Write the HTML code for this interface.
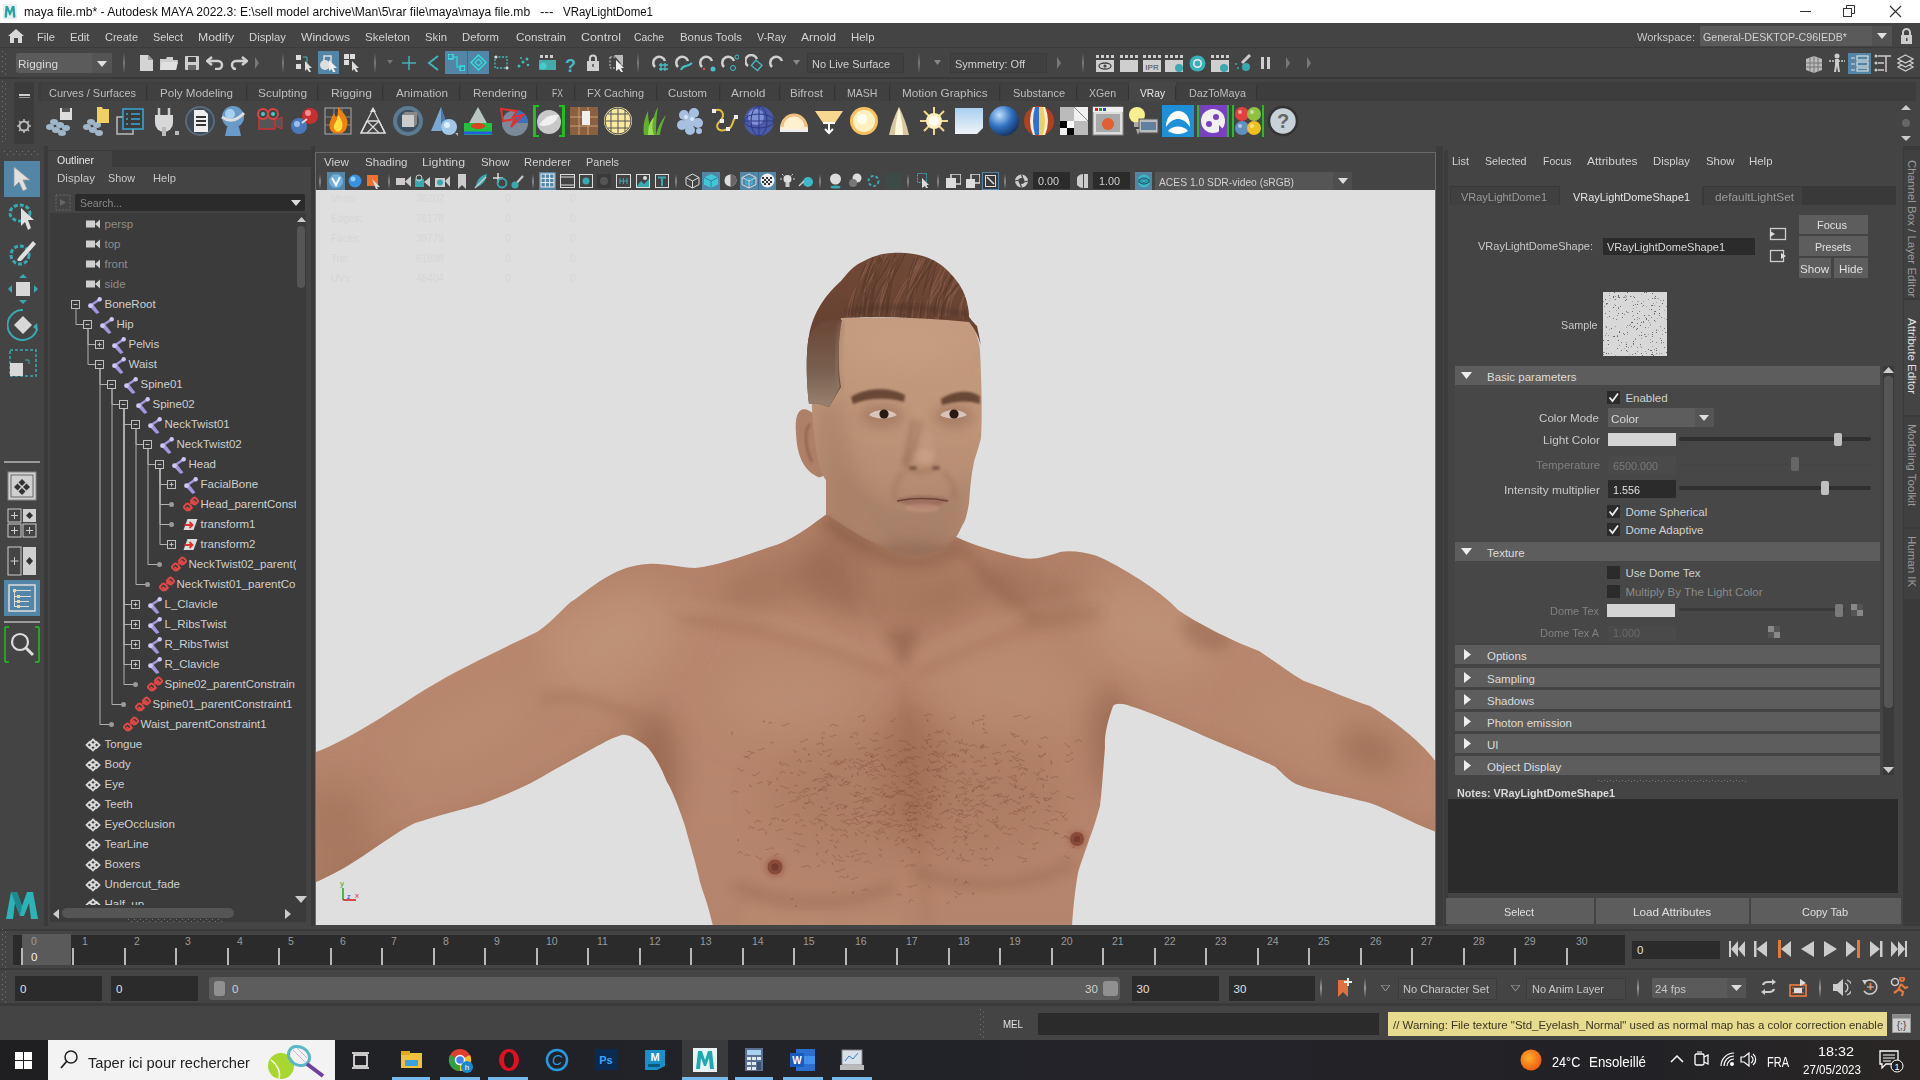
<!DOCTYPE html>
<html><head><meta charset="utf-8"><style>*{margin:0;padding:0;box-sizing:border-box}
html,body{width:1920px;height:1080px;overflow:hidden;background:#444;font-family:"Liberation Sans",sans-serif;font-size:12px;color:#ccc}
.a{position:absolute;display:block}
.t{position:absolute;white-space:nowrap;line-height:1}</style></head><body>
<div class="a" style="left:0px;top:0px;width:1920px;height:23px;background:#ffffff;"></div>
<svg class="a" style="left:3px;top:4px;" width="14" height="15" viewBox="0 0 14 15"><rect x="0" y="0" width="14" height="15" fill="#e6f2f2"/><path d="M1.5 13.5 L2.5 2 L5 2 L7 7.5 L9 2 L11.5 2 L12.5 13.5 L10 13.5 L9.5 6.5 L7.5 11.5 L6.5 11.5 L4.5 6.5 L4 13.5 Z" fill="#2aa0a8"/></svg>
<div class="t" style="left:23.5px;top:5.84px;font-size:12px;color:#111;transform:scaleX(1.0073);transform-origin:0 0;">maya file.mb* - Autodesk MAYA 2022.3: E:\sell model archive\Man\5\rar file\maya\maya file.mb</div>
<div class="t" style="left:539.5px;top:5.84px;font-size:12px;color:#111;transform:scaleX(1.1250);transform-origin:0 0;">---</div>
<div class="t" style="left:563px;top:5.84px;font-size:12px;color:#111;transform:scaleX(0.9570);transform-origin:0 0;">VRayLightDome1</div>
<div class="a" style="left:1800px;top:11px;width:11px;height:1px;background:#333;"></div>
<svg class="a" style="left:1843px;top:5px;" width="13" height="13" viewBox="0 0 13 13"><rect x="0.5" y="3.5" width="8" height="8" fill="none" stroke="#333"/><path d="M3.5 3.5 V0.5 H11.5 V8.5 H8.5" fill="none" stroke="#333"/></svg>
<svg class="a" style="left:1889px;top:5px;" width="13" height="13" viewBox="0 0 13 13"><path d="M1 1 L12 12 M12 1 L1 12" stroke="#333" stroke-width="1.2"/></svg>
<div class="a" style="left:0px;top:23px;width:1920px;height:25px;background:#444444;"></div>
<svg class="a" style="left:8px;top:29px;" width="16" height="14" viewBox="0 0 16 14"><path d="M8 0 L16 7 L14 7 L14 14 L10 14 L10 9 L6 9 L6 14 L2 14 L2 7 L0 7 Z" fill="#d8d8d8"/></svg>
<div class="t" style="left:37px;top:32.07px;font-size:11.5px;color:#d2d2d2;transform:scaleX(0.9705);transform-origin:0 0;">File</div>
<div class="t" style="left:70px;top:32.07px;font-size:11.5px;color:#d2d2d2;transform:scaleX(0.9842);transform-origin:0 0;">Edit</div>
<div class="t" style="left:105px;top:32.07px;font-size:11.5px;color:#d2d2d2;transform:scaleX(0.9565);transform-origin:0 0;">Create</div>
<div class="t" style="left:153px;top:32.07px;font-size:11.5px;color:#d2d2d2;transform:scaleX(0.9389);transform-origin:0 0;">Select</div>
<div class="t" style="left:198px;top:32.07px;font-size:11.5px;color:#d2d2d2;transform:scaleX(1.0632);transform-origin:0 0;">Modify</div>
<div class="t" style="left:249px;top:32.07px;font-size:11.5px;color:#d2d2d2;transform:scaleX(0.9809);transform-origin:0 0;">Display</div>
<div class="t" style="left:301px;top:32.07px;font-size:11.5px;color:#d2d2d2;transform:scaleX(1.0502);transform-origin:0 0;">Windows</div>
<div class="t" style="left:365px;top:32.07px;font-size:11.5px;color:#d2d2d2;transform:scaleX(1.0059);transform-origin:0 0;">Skeleton</div>
<div class="t" style="left:425px;top:32.07px;font-size:11.5px;color:#d2d2d2;transform:scaleX(0.9832);transform-origin:0 0;">Skin</div>
<div class="t" style="left:462px;top:32.07px;font-size:11.5px;color:#d2d2d2;transform:scaleX(0.9818);transform-origin:0 0;">Deform</div>
<div class="t" style="left:515.5px;top:32.07px;font-size:11.5px;color:#d2d2d2;transform:scaleX(1.0162);transform-origin:0 0;">Constrain</div>
<div class="t" style="left:580.5px;top:32.07px;font-size:11.5px;color:#d2d2d2;transform:scaleX(1.0793);transform-origin:0 0;">Control</div>
<div class="t" style="left:634px;top:32.07px;font-size:11.5px;color:#d2d2d2;transform:scaleX(0.9027);transform-origin:0 0;">Cache</div>
<div class="t" style="left:680px;top:32.07px;font-size:11.5px;color:#d2d2d2;transform:scaleX(0.9932);transform-origin:0 0;">Bonus Tools</div>
<div class="t" style="left:757px;top:32.07px;font-size:11.5px;color:#d2d2d2;transform:scaleX(0.9261);transform-origin:0 0;">V-Ray</div>
<div class="t" style="left:801px;top:32.07px;font-size:11.5px;color:#d2d2d2;transform:scaleX(1.0531);transform-origin:0 0;">Arnold</div>
<div class="t" style="left:851px;top:32.07px;font-size:11.5px;color:#d2d2d2;transform:scaleX(0.9934);transform-origin:0 0;">Help</div>
<div class="t" style="left:1636.7px;top:32.07px;font-size:11.5px;color:#c8c8c8;transform:scaleX(0.9589);transform-origin:0 0;">Workspace:</div>
<div class="a" style="left:1700px;top:26px;width:192px;height:20px;background:#5a5a5a;border-radius:2px"></div>
<div class="a" style="left:1872px;top:26px;width:20px;height:20px;background:#525252;"></div>
<svg class="a" style="left:1877px;top:33px;" width="10" height="6" viewBox="0 0 10 6"><path d="M0 0 L10 0 L5 6 Z" fill="#e0e0e0"/></svg>
<div class="t" style="left:1703px;top:32.07px;font-size:11.5px;color:#d0d0d0;transform:scaleX(0.9247);transform-origin:0 0;">General-DESKTOP-C96IEDB*</div>
<svg class="a" style="left:1900px;top:28px;" width="13" height="16" viewBox="0 0 13 16"><path d="M3 7 V4.5 A3.5 3.5 0 0 1 10 4.5 V7" fill="none" stroke="#ccc" stroke-width="2"/><rect x="1" y="7" width="11" height="9" fill="#ccc"/><rect x="6" y="10" width="1.5" height="3" fill="#444"/></svg>
<div class="a" style="left:0px;top:47px;width:1920px;height:1px;background:#3a3a3a;"></div>
<div class="a" style="left:0px;top:48px;width:1920px;height:29px;background:#444444;"></div>
<div class="a" style="left:0px;top:77px;width:1920px;height:2px;background:#393939;"></div>
<svg class="a" style="left:0px;top:50px;" width="8" height="26" viewBox="0 0 8 26"><g fill="#777"><rect x="2" y="1.0" width="1" height="1"/><rect x="5" y="3.5" width="1" height="1"/><rect x="2" y="6.0" width="1" height="1"/><rect x="5" y="8.5" width="1" height="1"/><rect x="2" y="11.0" width="1" height="1"/><rect x="5" y="13.5" width="1" height="1"/><rect x="2" y="16.0" width="1" height="1"/><rect x="5" y="18.5" width="1" height="1"/><rect x="2" y="21.0" width="1" height="1"/><rect x="5" y="23.5" width="1" height="1"/></g></svg>
<div class="a" style="left:16px;top:53px;width:96px;height:20px;background:#5b5b5b;border-radius:2px"></div>
<div class="a" style="left:92px;top:53px;width:20px;height:20px;background:#545454;"></div>
<svg class="a" style="left:97px;top:61px;" width="10" height="6" viewBox="0 0 10 6"><path d="M0 0 L10 0 L5 6 Z" fill="#e0e0e0"/></svg>
<div class="t" style="left:18px;top:59.07px;font-size:11.5px;color:#d8d8d8;transform:scaleX(1.0256);transform-origin:0 0;">Rigging</div>
<svg class="a" style="left:122px;top:53px;" width="4" height="20" viewBox="0 0 4 20"><path d="M2 0 L3 10.0 L2 20 L1 10.0 Z" fill="#7a7a7a"/></svg>
<svg class="a" style="left:140px;top:55px;" width="13" height="16" viewBox="0 0 13 16"><path d="M0 0 H8 L13 5 V16 H0 Z" fill="#d4d4d4"/><path d="M8 0 V5 H13" fill="#999"/></svg>
<svg class="a" style="left:160px;top:57px;" width="18" height="13" viewBox="0 0 18 13"><path d="M0 2 H6 L7 0 H13 V3 H18 L16 13 H0 Z" fill="#cfcfcf"/><path d="M2 5 H18 L16 13 H0 Z" fill="#e0e0e0"/></svg>
<svg class="a" style="left:185px;top:56px;" width="14" height="14" viewBox="0 0 14 14"><rect x="0" y="0" width="14" height="14" rx="1" fill="#d0d0d0"/><rect x="3" y="1" width="8" height="5" fill="#444"/><rect x="3" y="9" width="8" height="5" fill="#666"/></svg>
<svg class="a" style="left:206px;top:56px;" width="18" height="14" viewBox="0 0 18 14"><path d="M6 1 L1 5 L6 9" fill="none" stroke="#d0d0d0" stroke-width="2.5"/><path d="M2 5 H12 A4 4 0 0 1 12 13 H9" fill="none" stroke="#d0d0d0" stroke-width="2.5"/></svg>
<svg class="a" style="left:230px;top:56px;" width="18" height="14" viewBox="0 0 18 14"><path d="M12 1 L17 5 L12 9" fill="none" stroke="#d0d0d0" stroke-width="2.5"/><path d="M16 5 H6 A4 4 0 0 0 6 13 H3" fill="none" stroke="#d0d0d0" stroke-width="2.5"/></svg>
<svg class="a" style="left:255px;top:53px;" width="5" height="20" viewBox="0 0 5 20"><path d="M0 4.0 L4 10.0 L0 16.0 Z" fill="#777"/></svg>
<svg class="a" style="left:280.5px;top:53px;" width="4" height="20" viewBox="0 0 4 20"><path d="M2 0 L3 10.0 L2 20 L1 10.0 Z" fill="#7a7a7a"/></svg>
<svg class="a" style="left:296px;top:54px;" width="17" height="19" viewBox="0 0 17 19"><rect x="0" y="1" width="5" height="5" fill="#ddd"/><rect x="0" y="10" width="5" height="5" fill="#ddd"/><path d="M7 3 H11 V10" stroke="#4bb" fill="none"/><path d="M9 7 L16 14 L13 14 L15 18 L13 18 L11 15 L9 17 Z" fill="#ddd"/></svg>
<div class="a" style="left:317.5px;top:51px;width:21.5px;height:23px;background:#5285a6;"></div>
<svg class="a" style="left:319px;top:54px;" width="19" height="18" viewBox="0 0 19 18"><circle cx="6" cy="11" r="5" fill="#ddd"/><rect x="5" y="2" width="7" height="7" fill="none" stroke="#ddd" stroke-width="1.5"/><path d="M10 6 L18 14 L14.5 14 L16.5 18 L14 18 L12.5 15 L10 17 Z" fill="#eee"/></svg>
<svg class="a" style="left:344px;top:54px;" width="17" height="19" viewBox="0 0 17 19"><rect x="0" y="0" width="5" height="5" fill="#ddd"/><rect x="6" y="0" width="5" height="5" fill="#ddd"/><rect x="0" y="6" width="5" height="5" fill="#ddd"/><path d="M8 7 L15 14 L12 14 L14 18 L12 18 L10 15 L8 17 Z" fill="#ddd"/></svg>
<svg class="a" style="left:373px;top:53px;" width="4" height="20" viewBox="0 0 4 20"><path d="M2 0 L3 10.0 L2 20 L1 10.0 Z" fill="#7a7a7a"/></svg>
<svg class="a" style="left:387px;top:60px;" width="6" height="4" viewBox="0 0 6 4"><path d="M0 0 H6 L3 4 Z" fill="#777"/></svg>
<svg class="a" style="left:402px;top:56px;" width="14" height="14" viewBox="0 0 14 14"><path d="M7 0 V14 M0 7 H14" stroke="#44b0b8" stroke-width="1.5"/></svg>
<svg class="a" style="left:426px;top:55px;" width="14" height="16" viewBox="0 0 14 16"><path d="M12 1 L3 8 L12 15" fill="none" stroke="#44b0b8" stroke-width="2"/></svg>
<div class="a" style="left:445px;top:51px;width:44px;height:23px;background:#5285a6;"></div>
<div class="a" style="left:467px;top:51px;width:1px;height:23px;background:#3e6d8c;"></div>
<svg class="a" style="left:448px;top:54px;" width="17" height="17" viewBox="0 0 17 17"><rect x="0" y="0" width="5" height="5" fill="none" stroke="#3ee" stroke-width="1.3"/><rect x="12" y="12" width="5" height="5" fill="none" stroke="#3ee" stroke-width="1.3"/><path d="M5 3 H9 L9 13 H12" fill="none" stroke="#3cc" stroke-width="1.5"/></svg>
<svg class="a" style="left:470px;top:54px;" width="17" height="17" viewBox="0 0 17 17"><path d="M8.5 1 L16 8.5 L8.5 16 L1 8.5 Z" fill="none" stroke="#3dd" stroke-width="1.5"/><path d="M8.5 5 L12 8.5 L8.5 12 L5 8.5 Z" fill="none" stroke="#3dd" stroke-width="1.2"/></svg>
<svg class="a" style="left:494px;top:54px;" width="15" height="17" viewBox="0 0 15 17"><rect x="1" y="3" width="12" height="11" fill="none" stroke="#4bb" stroke-width="1.3" stroke-dasharray="2 1.5"/><circle cx="2" cy="3" r="1.5" fill="#ddd"/><circle cx="13" cy="14" r="1.5" fill="#ddd"/></svg>
<svg class="a" style="left:516px;top:55px;" width="15" height="15" viewBox="0 0 15 15"><g fill="#4bb"><circle cx="3" cy="11" r="1.5"/><circle cx="7" cy="7" r="1.5"/><circle cx="11" cy="4" r="1.5"/><circle cx="12" cy="10" r="1.3"/><circle cx="5" cy="3" r="1"/></g></svg>
<svg class="a" style="left:539px;top:54px;" width="17" height="17" viewBox="0 0 17 17"><rect x="0" y="6" width="17" height="10" fill="#4aa"/><circle cx="4" cy="12" r="3.5" fill="#4cc"/><g fill="#ccc"><rect x="1" y="1" width="3" height="3"/><rect x="6" y="1" width="3" height="3"/><rect x="11" y="1" width="3" height="3"/></g></svg>
<div class="t" style="left:565px;top:56.56px;font-size:18px;color:#4ab8c0;font-weight:bold;">?</div>
<svg class="a" style="left:587px;top:54px;" width="12" height="17" viewBox="0 0 12 17"><path d="M3 7 V4.5 A3 3 0 0 1 9 4.5 V7" fill="none" stroke="#d0d0d0" stroke-width="2"/><rect x="0" y="7" width="12" height="10" fill="#d0d0d0"/><rect x="5.3" y="10" width="1.5" height="3" fill="#555"/></svg>
<svg class="a" style="left:609px;top:54px;" width="16" height="18" viewBox="0 0 16 18"><rect x="1" y="3" width="11" height="11" fill="none" stroke="#ccc" stroke-dasharray="2 1.5"/><path d="M5 1 H14 V12 Z" fill="#bbb"/><path d="M7 6 L15 14 L12 14 L14 18 L12 18 L10 15 L7 17 Z" fill="#eee"/></svg>
<svg class="a" style="left:635.5px;top:53px;" width="4" height="20" viewBox="0 0 4 20"><path d="M2 0 L3 10.0 L2 20 L1 10.0 Z" fill="#7a7a7a"/></svg>
<svg class="a" style="left:652px;top:54px;" width="18" height="18" viewBox="0 0 18 18"><path d="M3 13 A6 6 0 1 1 13 7" fill="none" stroke="#cfcfcf" stroke-width="2.5"/><path d="M9 9 V17 M13 9 V17 M7 11 H16 M7 15 H16" stroke="#44c0c8" stroke-width="1.3"/></svg>
<svg class="a" style="left:675px;top:54px;" width="18" height="18" viewBox="0 0 18 18"><path d="M3 13 A6 6 0 1 1 13 7" fill="none" stroke="#cfcfcf" stroke-width="2.5"/><path d="M6 16 C8 10 12 14 17 9" stroke="#44c0c8" stroke-width="2" fill="none"/></svg>
<svg class="a" style="left:699px;top:54px;" width="18" height="18" viewBox="0 0 18 18"><path d="M3 13 A6 6 0 1 1 13 7" fill="none" stroke="#cfcfcf" stroke-width="2.5"/><circle cx="14" cy="15" r="2.5" fill="#44c0c8"/><circle cx="5" cy="15" r="1.2" fill="#d55"/></svg>
<svg class="a" style="left:721px;top:54px;" width="18" height="18" viewBox="0 0 18 18"><path d="M3 13 A6 6 0 1 1 13 7" fill="none" stroke="#cfcfcf" stroke-width="2.5"/><circle cx="12" cy="14" r="2.5" fill="none" stroke="#44c0c8"/><circle cx="16" cy="3" r="2" fill="none" stroke="#44c0c8"/></svg>
<svg class="a" style="left:745px;top:54px;" width="18" height="18" viewBox="0 0 18 18"><path d="M3 12 A6 6 0 1 1 12 5" fill="none" stroke="#cfcfcf" stroke-width="2.5"/><rect x="8" y="8" width="8" height="7" transform="rotate(40 12 11)" fill="none" stroke="#44c0c8" stroke-width="1.3"/></svg>
<svg class="a" style="left:769px;top:54px;" width="18" height="18" viewBox="0 0 18 18"><path d="M3 13 A6 6 0 1 1 13 7" fill="none" stroke="#cfcfcf" stroke-width="2.5"/></svg>
<svg class="a" style="left:793px;top:60px;" width="7" height="5" viewBox="0 0 7 5"><path d="M0 0 H7 L3.5 5 Z" fill="#888"/></svg>
<div class="a" style="left:807px;top:53px;width:97px;height:20px;background:#404040;border:1px solid #3a3a3a"></div>
<div class="t" style="left:812px;top:59.07px;font-size:11.5px;color:#cfcfcf;transform:scaleX(0.9538);transform-origin:0 0;">No Live Surface</div>
<svg class="a" style="left:917px;top:53px;" width="4" height="20" viewBox="0 0 4 20"><path d="M2 0 L3 10.0 L2 20 L1 10.0 Z" fill="#7a7a7a"/></svg>
<svg class="a" style="left:934px;top:60px;" width="7" height="5" viewBox="0 0 7 5"><path d="M0 0 H7 L3.5 5 Z" fill="#888"/></svg>
<div class="a" style="left:950px;top:53px;width:97px;height:20px;background:#404040;border:1px solid #3a3a3a"></div>
<div class="t" style="left:954.5px;top:59.07px;font-size:11.5px;color:#cfcfcf;transform:scaleX(0.9560);transform-origin:0 0;">Symmetry: Off</div>
<svg class="a" style="left:1057px;top:53px;" width="5" height="20" viewBox="0 0 5 20"><path d="M0 4.0 L4 10.0 L0 16.0 Z" fill="#777"/></svg>
<svg class="a" style="left:1080.5px;top:53px;" width="4" height="20" viewBox="0 0 4 20"><path d="M2 0 L3 10.0 L2 20 L1 10.0 Z" fill="#7a7a7a"/></svg>
<svg class="a" style="left:1096px;top:55px;" width="18" height="17" viewBox="0 0 18 17"><g fill="#ccc"><rect x="0" y="0" width="3" height="3"/><rect x="5" y="0" width="3" height="3"/><rect x="10" y="0" width="3" height="3"/><rect x="15" y="0" width="3" height="3"/></g><rect x="0" y="5" width="18" height="12" fill="#cfcfcf"/><ellipse cx="9" cy="11" rx="6" ry="3" fill="none" stroke="#444" stroke-width="1.3"/><circle cx="9" cy="11" r="1.6" fill="#444"/></svg>
<svg class="a" style="left:1119.5px;top:55px;" width="18" height="17" viewBox="0 0 18 17"><g fill="#ccc"><rect x="0" y="0" width="3" height="3"/><rect x="5" y="0" width="3" height="3"/><rect x="10" y="0" width="3" height="3"/><rect x="15" y="0" width="3" height="3"/></g><rect x="0" y="5" width="18" height="12" fill="#cfcfcf"/></svg>
<svg class="a" style="left:1142.5px;top:55px;" width="18" height="17" viewBox="0 0 18 17"><g fill="#ccc"><rect x="0" y="0" width="3" height="3"/><rect x="5" y="0" width="3" height="3"/><rect x="10" y="0" width="3" height="3"/><rect x="15" y="0" width="3" height="3"/></g><rect x="0" y="5" width="18" height="12" fill="#cfcfcf"/><text x="9" y="15" font-size="8" text-anchor="middle" fill="#444" font-family="Liberation Sans">IPR</text></svg>
<svg class="a" style="left:1165px;top:55px;" width="18" height="17" viewBox="0 0 18 17"><g fill="#ccc"><rect x="0" y="0" width="3" height="3"/><rect x="5" y="0" width="3" height="3"/><rect x="10" y="0" width="3" height="3"/><rect x="15" y="0" width="3" height="3"/></g><rect x="0" y="5" width="18" height="12" fill="#cfcfcf"/><circle cx="14" cy="13" r="4" fill="#3aa8b0"/></svg>
<svg class="a" style="left:1189px;top:55px;" width="17" height="17" viewBox="0 0 17 17"><circle cx="8.5" cy="8.5" r="8" fill="#3ab0b8"/><circle cx="8.5" cy="8.5" r="4.5" fill="#eee"/><circle cx="8.5" cy="8.5" r="3" fill="#3ab0b8"/></svg>
<svg class="a" style="left:1211px;top:55px;" width="18" height="17" viewBox="0 0 18 17"><g fill="#ccc"><rect x="0" y="0" width="3" height="3"/><rect x="5" y="0" width="3" height="3"/><rect x="10" y="0" width="3" height="3"/><rect x="15" y="0" width="3" height="3"/></g><rect x="0" y="5" width="18" height="12" fill="#cfcfcf"/><circle cx="13" cy="13" r="4" fill="#3aa8b0"/></svg>
<svg class="a" style="left:1234px;top:54px;" width="18" height="18" viewBox="0 0 18 18"><path d="M8 9 L16 1" stroke="#ccc" stroke-width="3"/><circle cx="12" cy="13" r="4" fill="#3aa8b0"/><g fill="#3aa8b0"><circle cx="2" cy="10" r="1"/><circle cx="4" cy="14" r="1"/></g></svg>
<div class="a" style="left:1261px;top:57px;width:3px;height:12px;background:#cfcfcf;"></div>
<div class="a" style="left:1267px;top:57px;width:3px;height:12px;background:#cfcfcf;"></div>
<svg class="a" style="left:1285.5px;top:53px;" width="5" height="20" viewBox="0 0 5 20"><path d="M0 4.0 L4 10.0 L0 16.0 Z" fill="#777"/></svg>
<svg class="a" style="left:1307px;top:53px;" width="5" height="20" viewBox="0 0 5 20"><path d="M0 4.0 L4 10.0 L0 16.0 Z" fill="#777"/></svg>
<svg class="a" style="left:1805px;top:54px;" width="18" height="19" viewBox="0 0 18 19"><path d="M1 5 L9 2 L17 5 V16 L9 19 L1 16 Z" fill="#bbb"/><path d="M9 2 V19 M1 9 H17 M1 13 H17 M5 3 V18 M13 3 V18" stroke="#777"/></svg>
<svg class="a" style="left:1829px;top:53px;" width="16" height="20" viewBox="0 0 16 20"><circle cx="8" cy="3" r="2.5" fill="#ccc"/><path d="M6 6 H10 V12 L11 19 H9 L8 13 L7 19 H5 L6 12 Z" fill="#ccc"/><path d="M0 8 H16" stroke="#ccc" stroke-width="1.5" stroke-dasharray="2 1"/></svg>
<div class="a" style="left:1848px;top:53px;width:23px;height:21px;background:#5285a6;"></div>
<svg class="a" style="left:1851px;top:55px;" width="18" height="17" viewBox="0 0 18 17"><g fill="none" stroke="#ddd" stroke-width="1.2"><rect x="6" y="1" width="11" height="4"/><rect x="6" y="7" width="11" height="4"/><rect x="6" y="13" width="11" height="3"/></g><path d="M0 3 H4 M0 9 H4 M0 15 H4" stroke="#ddd"/></svg>
<svg class="a" style="left:1874px;top:54px;" width="18" height="19" viewBox="0 0 18 19"><g fill="#ccc"><circle cx="2" cy="2" r="1.5"/><circle cx="2" cy="9" r="1.5"/><circle cx="2" cy="16" r="1.5"/></g><path d="M4 2 H17 M4 9 H10 M4 16 H10 M12 2 V18" stroke="#ccc" stroke-width="1.5"/></svg>
<svg class="a" style="left:1897px;top:54px;" width="17" height="19" viewBox="0 0 17 19"><g fill="#444" stroke="#ccc" stroke-width="1.3"><path d="M8.5 9 L16 13 L8.5 17 L1 13 Z"/><path d="M8.5 5 L16 9 L8.5 13 L1 9 Z"/><path d="M8.5 1 L16 5 L8.5 9 L1 5 Z"/></g></svg>
<div class="a" style="left:0px;top:79px;width:1920px;height:67px;background:#444444;"></div>
<svg class="a" style="left:0px;top:80px;" width="8" height="64" viewBox="0 0 8 64"><g fill="#777"><rect x="2" y="1.0" width="1" height="1"/><rect x="5" y="3.5" width="1" height="1"/><rect x="2" y="6.0" width="1" height="1"/><rect x="5" y="8.5" width="1" height="1"/><rect x="2" y="11.0" width="1" height="1"/><rect x="5" y="13.5" width="1" height="1"/><rect x="2" y="16.0" width="1" height="1"/><rect x="5" y="18.5" width="1" height="1"/><rect x="2" y="21.0" width="1" height="1"/><rect x="5" y="23.5" width="1" height="1"/><rect x="2" y="26.0" width="1" height="1"/><rect x="5" y="28.5" width="1" height="1"/><rect x="2" y="31.0" width="1" height="1"/><rect x="5" y="33.5" width="1" height="1"/><rect x="2" y="36.0" width="1" height="1"/><rect x="5" y="38.5" width="1" height="1"/><rect x="2" y="41.0" width="1" height="1"/><rect x="5" y="43.5" width="1" height="1"/><rect x="2" y="46.0" width="1" height="1"/><rect x="5" y="48.5" width="1" height="1"/><rect x="2" y="51.0" width="1" height="1"/><rect x="5" y="53.5" width="1" height="1"/><rect x="2" y="56.0" width="1" height="1"/><rect x="5" y="58.5" width="1" height="1"/><rect x="2" y="61.0" width="1" height="1"/></g></svg>
<div class="a" style="left:14px;top:82px;width:20px;height:62px;background:#3b3b3b;"></div>
<div class="a" style="left:19px;top:94px;width:11px;height:2px;background:#cfcfcf;"></div>
<div class="a" style="left:19px;top:97px;width:11px;height:1px;background:#9a9a9a;"></div>
<svg class="a" style="left:17px;top:119px;" width="14" height="14" viewBox="0 0 14 14"><circle cx="7" cy="7" r="4.5" fill="none" stroke="#bbb" stroke-width="2"/><path d="M7 0 V3 M7 11 V14 M0 7 H3 M11 7 H14 M2 2 L4 4 M10 10 L12 12 M12 2 L10 4 M4 10 L2 12" stroke="#bbb" stroke-width="1.5"/></svg>
<div class="a" style="left:38px;top:82px;width:1878px;height:19px;background:#3d3d3d;"></div>
<div class="a" style="left:41px;top:83px;width:105px;height:18px;background:#404040;"></div>
<div class="a" style="left:146px;top:86px;width:1px;height:14px;background:#333;"></div>
<div class="t" style="left:49px;top:87.77px;font-size:11.5px;color:#bdbdbd;transform:scaleX(0.9524);transform-origin:0 0;">Curves / Surfaces</div>
<div class="a" style="left:148px;top:83px;width:98px;height:18px;background:#404040;"></div>
<div class="a" style="left:246px;top:86px;width:1px;height:14px;background:#333;"></div>
<div class="t" style="left:160px;top:87.77px;font-size:11.5px;color:#bdbdbd;transform:scaleX(1.0108);transform-origin:0 0;">Poly Modeling</div>
<div class="a" style="left:248px;top:83px;width:69px;height:18px;background:#404040;"></div>
<div class="a" style="left:317px;top:86px;width:1px;height:14px;background:#333;"></div>
<div class="t" style="left:258px;top:87.77px;font-size:11.5px;color:#bdbdbd;transform:scaleX(1.0360);transform-origin:0 0;">Sculpting</div>
<div class="a" style="left:319px;top:83px;width:63px;height:18px;background:#404040;"></div>
<div class="a" style="left:382px;top:86px;width:1px;height:14px;background:#333;"></div>
<div class="t" style="left:331px;top:87.77px;font-size:11.5px;color:#bdbdbd;transform:scaleX(1.0513);transform-origin:0 0;">Rigging</div>
<div class="a" style="left:384px;top:83px;width:75px;height:18px;background:#404040;"></div>
<div class="a" style="left:459px;top:86px;width:1px;height:14px;background:#333;"></div>
<div class="t" style="left:396px;top:87.77px;font-size:11.5px;color:#bdbdbd;transform:scaleX(1.0171);transform-origin:0 0;">Animation</div>
<div class="a" style="left:461px;top:83px;width:75px;height:18px;background:#404040;"></div>
<div class="a" style="left:536px;top:86px;width:1px;height:14px;background:#333;"></div>
<div class="t" style="left:473px;top:87.77px;font-size:11.5px;color:#bdbdbd;transform:scaleX(1.0180);transform-origin:0 0;">Rendering</div>
<div class="a" style="left:538px;top:83px;width:36px;height:18px;background:#404040;"></div>
<div class="a" style="left:574px;top:86px;width:1px;height:14px;background:#333;"></div>
<div class="t" style="left:552px;top:87.77px;font-size:11.5px;color:#bdbdbd;transform:scaleX(0.7481);transform-origin:0 0;">FX</div>
<div class="a" style="left:576px;top:83px;width:80px;height:18px;background:#404040;"></div>
<div class="a" style="left:656px;top:86px;width:1px;height:14px;background:#333;"></div>
<div class="t" style="left:587px;top:87.77px;font-size:11.5px;color:#bdbdbd;transform:scaleX(0.9488);transform-origin:0 0;">FX Caching</div>
<div class="a" style="left:658px;top:83px;width:61px;height:18px;background:#404040;"></div>
<div class="a" style="left:719px;top:86px;width:1px;height:14px;background:#333;"></div>
<div class="t" style="left:668px;top:87.77px;font-size:11.5px;color:#bdbdbd;transform:scaleX(0.9846);transform-origin:0 0;">Custom</div>
<div class="a" style="left:721px;top:83px;width:58px;height:18px;background:#404040;"></div>
<div class="a" style="left:779px;top:86px;width:1px;height:14px;background:#333;"></div>
<div class="t" style="left:731px;top:87.77px;font-size:11.5px;color:#bdbdbd;transform:scaleX(1.0381);transform-origin:0 0;">Arnold</div>
<div class="a" style="left:781px;top:83px;width:53px;height:18px;background:#404040;"></div>
<div class="a" style="left:834px;top:86px;width:1px;height:14px;background:#333;"></div>
<div class="t" style="left:790px;top:87.77px;font-size:11.5px;color:#bdbdbd;transform:scaleX(1.0129);transform-origin:0 0;">Bifrost</div>
<div class="a" style="left:836px;top:83px;width:53px;height:18px;background:#404040;"></div>
<div class="a" style="left:889px;top:86px;width:1px;height:14px;background:#333;"></div>
<div class="t" style="left:847px;top:87.77px;font-size:11.5px;color:#bdbdbd;transform:scaleX(0.9177);transform-origin:0 0;">MASH</div>
<div class="a" style="left:891px;top:83px;width:108px;height:18px;background:#404040;"></div>
<div class="a" style="left:999px;top:86px;width:1px;height:14px;background:#333;"></div>
<div class="t" style="left:902px;top:87.77px;font-size:11.5px;color:#bdbdbd;transform:scaleX(1.0217);transform-origin:0 0;">Motion Graphics</div>
<div class="a" style="left:1001px;top:83px;width:75px;height:18px;background:#404040;"></div>
<div class="a" style="left:1076px;top:86px;width:1px;height:14px;background:#333;"></div>
<div class="t" style="left:1012.5px;top:87.77px;font-size:11.5px;color:#bdbdbd;transform:scaleX(0.9574);transform-origin:0 0;">Substance</div>
<div class="a" style="left:1078px;top:83px;width:50px;height:18px;background:#404040;"></div>
<div class="a" style="left:1128px;top:86px;width:1px;height:14px;background:#333;"></div>
<div class="t" style="left:1089px;top:87.77px;font-size:11.5px;color:#bdbdbd;transform:scaleX(0.9187);transform-origin:0 0;">XGen</div>
<div class="a" style="left:1129px;top:82px;width:47px;height:20px;background:#474747;"></div>
<div class="a" style="left:1175px;top:86px;width:1px;height:14px;background:#333;"></div>
<div class="t" style="left:1140px;top:87.77px;font-size:11.5px;color:#e8e8e8;transform:scaleX(0.8889);transform-origin:0 0;">VRay</div>
<div class="a" style="left:1177px;top:83px;width:79px;height:18px;background:#404040;"></div>
<div class="a" style="left:1256px;top:86px;width:1px;height:14px;background:#333;"></div>
<div class="t" style="left:1189px;top:87.77px;font-size:11.5px;color:#bdbdbd;transform:scaleX(0.9390);transform-origin:0 0;">DazToMaya</div>
<svg class="a" style="left:42px;top:105px;" width="32" height="32" viewBox="0 0 32 32"><g fill="#9fb6c8"><ellipse cx="8" cy="22" rx="4" ry="3"/><ellipse cx="14" cy="25" rx="4" ry="3"/><ellipse cx="20" cy="28" rx="4" ry="3"/><ellipse cx="12" cy="17" rx="4" ry="3"/><ellipse cx="18" cy="20" rx="4" ry="3"/><ellipse cx="24" cy="23" rx="4" ry="3"/></g><rect x="18" y="3" width="12" height="12" fill="#ddd"/><rect x="20" y="3" width="8" height="4" fill="#555"/></svg>
<svg class="a" style="left:79px;top:105px;" width="32" height="32" viewBox="0 0 32 32"><g fill="#9fb6c8"><ellipse cx="8" cy="22" rx="4" ry="3"/><ellipse cx="14" cy="25" rx="4" ry="3"/><ellipse cx="20" cy="28" rx="4" ry="3"/><ellipse cx="12" cy="17" rx="4" ry="3"/><ellipse cx="18" cy="20" rx="4" ry="3"/></g><path d="M18 2 H23 L24 4 H30 V18 H18 Z" fill="#f0d060"/></svg>
<svg class="a" style="left:114px;top:105px;" width="32" height="32" viewBox="0 0 32 32"><rect x="3" y="12" width="16" height="17" fill="none" stroke="#bbb" stroke-width="1.5"/><rect x="9" y="4" width="20" height="20" fill="#3a3a3a" stroke="#38a8d8" stroke-width="1.5"/><g stroke="#38a8d8" stroke-width="1.5"><path d="M12 9 H14 M17 9 H26 M12 14 H14 M17 14 H26 M12 19 H14 M17 19 H26"/></g></svg>
<svg class="a" style="left:149px;top:105px;" width="32" height="32" viewBox="0 0 32 32"><path d="M10 3 V10 M20 3 V10" stroke="#ccc" stroke-width="2.5"/><path d="M6 10 H24 V18 A9 9 0 0 1 6 18 Z" fill="#d8d8d8"/><rect x="13" y="22" width="4" height="9" fill="#bbb"/><path d="M26 26 L30 26 L30 30 L26 30 Z" fill="#bbb"/></svg>
<svg class="a" style="left:184px;top:105px;" width="32" height="32" viewBox="0 0 32 32"><circle cx="16" cy="16" r="15" fill="#5a6a78"/><circle cx="16" cy="16" r="13" fill="#3d4a55"/><path d="M10 5 H20 L24 9 V27 H10 Z" fill="#eee"/><path d="M12 12 H22 M12 16 H22 M12 20 H22" stroke="#333" stroke-width="2"/></svg>
<svg class="a" style="left:217px;top:105px;" width="32" height="32" viewBox="0 0 32 32"><circle cx="16" cy="12" r="11" fill="#6a9ac8"/><circle cx="13" cy="9" r="5" fill="#a8d0f0"/><path d="M5 12 Q16 20 27 8" stroke="#ddd" stroke-width="3" fill="none"/><path d="M10 22 H22 L24 31 H8 Z" fill="#6a9ac8"/></svg>
<svg class="a" style="left:253px;top:105px;" width="32" height="32" viewBox="0 0 32 32"><rect x="6" y="12" width="16" height="12" fill="#555" stroke="#c33" stroke-width="1.5"/><circle cx="10" cy="9" r="5" fill="#444" stroke="#d44" stroke-width="2"/><circle cx="20" cy="9" r="5" fill="#444" stroke="#d44" stroke-width="2"/><circle cx="10" cy="9" r="2" fill="#4cc"/><circle cx="20" cy="9" r="2" fill="#4cc"/><path d="M22 15 L29 12 V24 L22 21 Z" fill="#555" stroke="#c33"/></svg>
<svg class="a" style="left:288px;top:105px;" width="32" height="32" viewBox="0 0 32 32"><circle cx="11" cy="21" r="8" fill="#4a78b8"/><circle cx="9" cy="19" r="3" fill="#9ac0f0"/><circle cx="22" cy="11" r="8" fill="#c83030"/><circle cx="20" cy="8" r="3" fill="#f09090"/><path d="M14 18 L19 14" stroke="#ddd" stroke-width="2"/></svg>
<svg class="a" style="left:322px;top:105px;" width="32" height="32" viewBox="0 0 32 32"><rect x="3" y="3" width="26" height="26" fill="none" stroke="#aaa"/><path d="M3 12 H29 M3 20 H29 M12 3 V29 M20 3 V29" stroke="#888"/><path d="M16 2 C24 10 28 16 24 24 C22 30 10 30 8 24 C6 18 10 12 12 8 C14 14 16 14 16 2 Z" fill="#f08010"/><path d="M16 10 C21 16 22 22 18 26 C14 28 11 24 12 20 C13 18 15 16 16 10 Z" fill="#ffe040"/></svg>
<svg class="a" style="left:357px;top:105px;" width="32" height="32" viewBox="0 0 32 32"><path d="M4 28 L28 28 L22 16 L10 16 Z" fill="none" stroke="#ddd" stroke-width="1.5"/><path d="M4 28 L16 4 L28 28 M10 16 L22 28 M22 16 L10 28" fill="none" stroke="#ddd" stroke-width="1.2"/><path d="M16 2 L13 7 H19 Z" fill="#ddd"/></svg>
<svg class="a" style="left:392px;top:105px;" width="32" height="32" viewBox="0 0 32 32"><circle cx="16" cy="16" r="15" fill="#5c7a90"/><circle cx="16" cy="16" r="11" fill="#3c5060"/><rect x="10" y="10" width="12" height="12" fill="#ccc"/><path d="M10 10 L13 7 H25 V19 L22 22 V10 Z" fill="#888"/></svg>
<svg class="a" style="left:427px;top:105px;" width="32" height="32" viewBox="0 0 32 32"><path d="M14 2 L4 26 L22 26 Z" fill="#7aa8d0"/><path d="M14 2 L14 26 L22 26 Z" fill="#4a78a8"/><circle cx="22" cy="22" r="8" fill="#a0c8e8"/><circle cx="20" cy="20" r="3" fill="#e0f0ff"/><path d="M28 28 L31 28 L31 31 Z" fill="#bbb"/></svg>
<svg class="a" style="left:462px;top:105px;" width="32" height="32" viewBox="0 0 32 32"><path d="M16 2 L6 20 H26 Z" fill="#d8e8e0" opacity="0.8"/><rect x="2" y="18" width="28" height="12" fill="#20c040"/><ellipse cx="16" cy="21" rx="7" ry="3" fill="#e04020"/><path d="M2 28 H30" stroke="#2060e0" stroke-width="3"/></svg>
<svg class="a" style="left:497px;top:105px;" width="32" height="32" viewBox="0 0 32 32"><circle cx="18" cy="18" r="13" fill="#7a8a98"/><path d="M18 5 A13 13 0 0 1 31 18 L18 18 Z" fill="#3a70c0"/><path d="M4 4 L20 6 L16 12 L26 10 L14 22 L18 14 L6 16 Z" fill="none" stroke="#e03030" stroke-width="2"/></svg>
<svg class="a" style="left:533px;top:105px;" width="32" height="32" viewBox="0 0 32 32"><rect x="0" y="0" width="3" height="32" fill="#20c020"/><rect x="0" y="0" width="6" height="2" fill="#20c020"/><rect x="0" y="30" width="6" height="2" fill="#20c020"/><rect x="29" y="0" width="3" height="32" fill="#20c020"/><rect x="26" y="0" width="6" height="2" fill="#20c020"/><rect x="26" y="30" width="6" height="2" fill="#20c020"/><circle cx="16" cy="17" r="12" fill="#c8c8c8"/><path d="M6 20 Q14 8 26 10 Q20 24 6 20 Z" fill="#f0f0f0"/></svg>
<svg class="a" style="left:568px;top:105px;" width="32" height="32" viewBox="0 0 32 32"><rect x="2" y="2" width="28" height="28" fill="#8a6040"/><path d="M2 12 H30 M2 21 H30 M11 2 V30 M20 2 V30" stroke="#c8a070"/><rect x="14" y="6" width="8" height="14" fill="#f0f0f0"/></svg>
<svg class="a" style="left:602px;top:105px;" width="32" height="32" viewBox="0 0 32 32"><circle cx="16" cy="16" r="14" fill="#f8e8a0"/><circle cx="16" cy="16" r="13" fill="none" stroke="#555"/><path d="M3 16 H29 M16 3 V29 M6 9 H26 M6 23 H26 M9 5 V27 M23 5 V27" stroke="#555"/></svg>
<svg class="a" style="left:638px;top:105px;" width="32" height="32" viewBox="0 0 32 32"><path d="M6 30 C4 20 8 10 10 6 C10 16 12 22 14 28 C14 18 16 8 20 2 C18 14 18 22 18 30 C20 22 24 14 28 10 C24 20 22 26 22 30 Z" fill="#60b030"/><path d="M10 30 C10 22 12 16 16 12 C14 20 14 26 16 30 Z" fill="#a0e050"/></svg>
<svg class="a" style="left:674px;top:105px;" width="32" height="32" viewBox="0 0 32 32"><g fill="#a8c0e0"><circle cx="10" cy="10" r="5"/><circle cx="20" cy="8" r="5"/><circle cx="24" cy="18" r="5"/><circle cx="16" cy="16" r="6"/><circle cx="8" cy="20" r="5"/><circle cx="16" cy="25" r="5"/><circle cx="25" cy="26" r="3"/></g><g fill="#d8e8f8"><circle cx="12" cy="12" r="2"/><circle cx="18" cy="14" r="2"/></g></svg>
<svg class="a" style="left:708px;top:105px;" width="32" height="32" viewBox="0 0 32 32"><path d="M6 6 C14 2 18 10 12 16 C6 22 10 28 20 24 C26 22 24 14 28 12" fill="none" stroke="#e0c040" stroke-width="2"/><g fill="#eee"><rect x="4" y="4" width="4" height="4"/><rect x="12" y="14" width="4" height="4"/><rect x="18" y="22" width="4" height="4"/><rect x="26" y="10" width="4" height="4"/></g></svg>
<svg class="a" style="left:743px;top:105px;" width="32" height="32" viewBox="0 0 32 32"><circle cx="16" cy="16" r="15" fill="#4a5aa8"/><circle cx="13" cy="12" r="8" fill="#8090d8"/><path d="M1 16 H31 M16 1 V31" stroke="#2a3a80" stroke-width="1"/><ellipse cx="16" cy="16" rx="8" ry="15" fill="none" stroke="#2a3a80"/><ellipse cx="16" cy="16" rx="15" ry="7" fill="none" stroke="#2a3a80"/></svg>
<svg class="a" style="left:778px;top:105px;" width="32" height="32" viewBox="0 0 32 32"><path d="M2 24 A14 14 0 0 1 30 24 Z" fill="#fff0d0"/><path d="M4 22 A12 12 0 0 1 28 22" fill="none" stroke="#f0c080" stroke-width="3"/><rect x="2" y="24" width="28" height="3" fill="#eee"/></svg>
<svg class="a" style="left:813px;top:105px;" width="32" height="32" viewBox="0 0 32 32"><path d="M2 6 H30 L22 18 H10 Z" fill="#f8d890"/><path d="M10 18 H22" stroke="#fff" stroke-width="2"/><path d="M16 18 V28 M12 24 L16 28 L20 24" stroke="#fff" stroke-width="2" fill="none"/></svg>
<svg class="a" style="left:848px;top:105px;" width="32" height="32" viewBox="0 0 32 32"><circle cx="16" cy="16" r="14" fill="#f8c060"/><circle cx="16" cy="16" r="11" fill="#fff0c0"/><circle cx="14" cy="14" r="5" fill="#fffff0"/></svg>
<svg class="a" style="left:883px;top:105px;" width="32" height="32" viewBox="0 0 32 32"><path d="M16 2 C12 10 8 20 6 30 H26 C24 20 20 10 16 2 Z" fill="#d8c8a0"/><path d="M16 2 C14 12 12 22 12 30 H20 C20 22 18 12 16 2 Z" fill="#fff8e0"/></svg>
<svg class="a" style="left:918px;top:105px;" width="32" height="32" viewBox="0 0 32 32"><g stroke="#f0d890" stroke-width="2"><path d="M16 2 V30 M2 16 H30 M6 6 L26 26 M26 6 L6 26"/></g><circle cx="16" cy="16" r="8" fill="#fff0c0"/><circle cx="16" cy="16" r="5" fill="#fffff0"/></svg>
<svg class="a" style="left:953px;top:105px;" width="32" height="32" viewBox="0 0 32 32"><defs><linearGradient id="gs1" x1="0" y1="0" x2="0" y2="1"><stop offset="0" stop-color="#a8d0f0"/><stop offset="1" stop-color="#f0f4f8"/></linearGradient></defs><rect x="2" y="3" width="28" height="26" fill="url(#gs1)"/><path d="M24 29 L30 23 V29 Z" fill="#444"/></svg>
<svg class="a" style="left:988px;top:105px;" width="32" height="32" viewBox="0 0 32 32"><defs><radialGradient id="gs2" cx="0.35" cy="0.3" r="0.8"><stop offset="0" stop-color="#c0e0ff"/><stop offset="0.5" stop-color="#3070c0"/><stop offset="1" stop-color="#102850"/></radialGradient></defs><circle cx="16" cy="16" r="15" fill="url(#gs2)"/></svg>
<svg class="a" style="left:1023px;top:105px;" width="32" height="32" viewBox="0 0 32 32"><circle cx="16" cy="16" r="15" fill="#b04020"/><path d="M10 2 Q4 16 10 30 H22 Q28 16 22 2 Z" fill="#f8f0d8"/><path d="M12 2 Q8 16 12 30 H16 V2 Z" fill="#3070d0"/><path d="M20 2 Q24 16 20 30 H16 V2 Z" fill="#f0d060"/></svg>
<svg class="a" style="left:1058px;top:105px;" width="32" height="32" viewBox="0 0 32 32"><rect x="2" y="2" width="28" height="28" fill="#f0f0f0"/><rect x="2" y="2" width="14" height="14" fill="#bbb"/><rect x="16" y="16" width="14" height="14" fill="#bbb"/><rect x="2" y="16" width="7" height="7" fill="#000"/><rect x="9" y="23" width="7" height="7" fill="#000"/><rect x="9" y="16" width="7" height="7" fill="#fff"/><path d="M16 2 L30 16 M2 16" stroke="#888"/></svg>
<svg class="a" style="left:1092px;top:105px;" width="32" height="32" viewBox="0 0 32 32"><rect x="1" y="2" width="30" height="28" fill="#ddd" stroke="#888"/><rect x="1" y="2" width="30" height="5" fill="#eee"/><rect x="3" y="3" width="3" height="3" fill="#e02020"/><rect x="7" y="3" width="3" height="3" fill="#20a020"/><rect x="11" y="3" width="3" height="3" fill="#2040e0"/><rect x="4" y="9" width="24" height="18" fill="#a8a8a8"/><circle cx="16" cy="19" r="6" fill="#e06030"/></svg>
<svg class="a" style="left:1127px;top:105px;" width="32" height="32" viewBox="0 0 32 32"><circle cx="10" cy="10" r="8" fill="#f8f090"/><rect x="7" y="17" width="6" height="5" fill="#aaa"/><rect x="12" y="14" width="19" height="14" fill="#bbb" stroke="#555"/><rect x="14" y="17" width="15" height="8" fill="#6080a0"/><path d="M9 24 L11 30 L13 24" fill="#aaa"/></svg>
<svg class="a" style="left:1162px;top:105px;" width="32" height="32" viewBox="0 0 32 32"><rect x="0" y="0" width="32" height="32" fill="#1e90d8"/><path d="M4 22 C4 10 12 6 16 6 C22 6 28 10 28 22 C24 16 20 14 16 14 C12 14 8 16 4 22 Z" fill="#fff"/><path d="M6 26 C10 20 22 20 26 26 C20 30 12 30 6 26 Z" fill="#fff"/></svg>
<svg class="a" style="left:1197px;top:105px;" width="32" height="32" viewBox="0 0 32 32"><rect x="0" y="0" width="32" height="32" fill="#7a40c0"/><rect x="0" y="0" width="2" height="32" fill="#20c020"/><rect x="30" y="0" width="2" height="32" fill="#20c020"/><circle cx="16" cy="16" r="12" fill="#f0f0f0"/><circle cx="12" cy="19" r="3" fill="#7a40c0"/><circle cx="19" cy="12" r="3" fill="#7a40c0"/><path d="M22 20 L28 26 L22 28 Z" fill="#7a40c0"/></svg>
<svg class="a" style="left:1232px;top:105px;" width="32" height="32" viewBox="0 0 32 32"><rect x="0" y="0" width="2" height="32" fill="#20c020"/><rect x="30" y="0" width="2" height="32" fill="#20c020"/><circle cx="10" cy="9" r="7" fill="#e04040"/><circle cx="22" cy="9" r="7" fill="#90c040"/><circle cx="10" cy="23" r="7" fill="#6090c0"/><circle cx="22" cy="23" r="7" fill="#f0c020"/><g fill="#fff" opacity="0.5"><circle cx="8" cy="7" r="2"/><circle cx="20" cy="7" r="2"/><circle cx="8" cy="21" r="2"/><circle cx="20" cy="21" r="2"/></g></svg>
<svg class="a" style="left:1267px;top:105px;" width="32" height="32" viewBox="0 0 32 32"><circle cx="16" cy="16" r="14" fill="#c8d0d8" stroke="#333" stroke-width="2.5"/><text x="16" y="23" font-size="20" font-weight="bold" text-anchor="middle" fill="#666" font-family="Liberation Sans">?</text></svg>
<svg class="a" style="left:1900px;top:104px;" width="12" height="38" viewBox="0 0 12 38"><path d="M1 6 L6 1 L11 6 Z" fill="#ccc"/><circle cx="6" cy="19" r="4" fill="#666"/><path d="M1 32 L6 37 L11 32 Z" fill="#ccc"/></svg>
<div class="a" style="left:0px;top:146px;width:1920px;height:4px;background:#3a3a3a;"></div>
<div class="a" style="left:0px;top:146px;width:44px;height:784px;background:#444444;"></div>
<div class="a" style="left:44px;top:146px;width:4px;height:784px;background:#3a3a3a;"></div>
<svg class="a" style="left:2px;top:150px;" width="40" height="8" viewBox="0 0 40 8"><g fill="#777"><rect x="2" y="1" width="1" height="1"/><rect x="5" y="4" width="1" height="1"/><rect x="8" y="1" width="1" height="1"/><rect x="11" y="4" width="1" height="1"/><rect x="14" y="1" width="1" height="1"/><rect x="17" y="4" width="1" height="1"/><rect x="20" y="1" width="1" height="1"/><rect x="23" y="4" width="1" height="1"/><rect x="26" y="1" width="1" height="1"/><rect x="29" y="4" width="1" height="1"/><rect x="32" y="1" width="1" height="1"/><rect x="35" y="4" width="1" height="1"/></g></svg>
<div class="a" style="left:4px;top:161px;width:36px;height:36px;background:#5285a6;"></div>
<svg class="a" style="left:12px;top:166px;" width="20" height="26" viewBox="0 0 20 26"><path d="M2 1 L2 21 L7 16 L11 25 L15 23 L11 14 L18 14 Z" fill="#e0e0e0" stroke="#999" stroke-width="0.8"/></svg>
<svg class="a" style="left:7px;top:200px;" width="32" height="32" viewBox="0 0 32 32"><ellipse cx="13" cy="13" rx="10" ry="8" fill="none" stroke="#3aa8b0" stroke-width="3" stroke-dasharray="4 2"/><path d="M14 8 L14 26 L18 22 L21 30 L24 28 L21 20 L27 20 Z" fill="#e0e0e0"/></svg>
<svg class="a" style="left:7px;top:236px;" width="32" height="32" viewBox="0 0 32 32"><ellipse cx="13" cy="19" rx="9" ry="9" fill="none" stroke="#3aa8b0" stroke-width="3" stroke-dasharray="4 2"/><path d="M12 21 L26 5 L29 8 L16 23 C14 26 11 25 10 24 Z" fill="#e0e0e0"/></svg>
<svg class="a" style="left:7px;top:273px;" width="32" height="32" viewBox="0 0 32 32"><rect x="9" y="9" width="14" height="14" fill="#d8d8d8"/><g fill="#3aa8b0"><path d="M16 1 L12 5 H20 Z"/><path d="M16 31 L12 27 H20 Z"/><path d="M1 16 L5 12 V20 Z"/><path d="M31 16 L27 12 V20 Z"/></g></svg>
<svg class="a" style="left:7px;top:309px;" width="32" height="32" viewBox="0 0 32 32"><path d="M16 1 A15 15 0 1 0 30 20" fill="none" stroke="#3aa8b0" stroke-width="2"/><path d="M26 18 L31 22 L30 14 Z" fill="#3aa8b0"/><path d="M16 7 L25 16 L16 25 L7 16 Z" fill="#d8d8d8"/></svg>
<svg class="a" style="left:7px;top:347px;" width="32" height="32" viewBox="0 0 32 32"><rect x="3" y="3" width="26" height="26" fill="none" stroke="#3aa8b0" stroke-width="1.5" stroke-dasharray="3 2"/><rect x="3" y="16" width="13" height="13" fill="#d8d8d8"/><path d="M18 13 H22 V17" fill="none" stroke="#3aa8b0"/></svg>
<div class="a" style="left:4px;top:461px;width:36px;height:2px;background:#9a9a9a;"></div>
<svg class="a" style="left:7px;top:471px;" width="30" height="30" viewBox="0 0 30 30"><rect x="1" y="1" width="28" height="28" fill="#d0d0d0" stroke="#888"/><rect x="4" y="4" width="22" height="22" fill="none" stroke="#666"/><g fill="#333"><path d="M15 8 L18.5 11.5 L15 15 L11.5 11.5 Z"/><path d="M10.5 12.5 L14 16 L10.5 19.5 L7 16 Z"/><path d="M19.5 12.5 L23 16 L19.5 19.5 L16 16 Z"/><path d="M15 17 L18.5 20.5 L15 24 L11.5 20.5 Z"/></g></svg>
<svg class="a" style="left:7px;top:508px;" width="30" height="30" viewBox="0 0 30 30"><g fill="none" stroke="#ccc"><rect x="1" y="1" width="13" height="13"/><rect x="1" y="16" width="13" height="13"/><rect x="16" y="16" width="13" height="13"/></g><rect x="16" y="1" width="13" height="13" fill="#d0d0d0"/><path d="M7.5 4 V11 M4 7.5 H11 M7.5 19 V26 M4 22.5 H11 M22.5 19 V26 M19 22.5 H26" stroke="#ccc"/><path d="M22.5 4 L26 7.5 L22.5 11 L19 7.5 Z" fill="#333"/></svg>
<svg class="a" style="left:7px;top:546px;" width="30" height="30" viewBox="0 0 30 30"><rect x="1" y="1" width="13" height="28" fill="none" stroke="#ccc"/><rect x="16" y="1" width="13" height="28" fill="#d0d0d0"/><path d="M7.5 11 V19 M3.5 15 H11.5" stroke="#ccc"/><path d="M22.5 11 L26 15 L22.5 19 L19 15 Z" fill="#333"/></svg>
<div class="a" style="left:4px;top:580px;width:36px;height:36px;background:#5285a6;"></div>
<svg class="a" style="left:7px;top:583px;" width="30" height="30" viewBox="0 0 30 30"><rect x="2" y="2" width="26" height="26" fill="none" stroke="#ddd" stroke-width="1.5"/><g fill="#e8d8a0"><rect x="6" y="6" width="3" height="3"/><rect x="10" y="12" width="3" height="3"/><rect x="10" y="17" width="3" height="3"/><rect x="10" y="22" width="3" height="3"/></g><path d="M9 7.5 H24 M13 13.5 H24 M13 18.5 H22 M13 23.5 H22 M7.5 9 V24 M7.5 13.5 H10 M7.5 18.5 H10 M7.5 23.5 H10" stroke="#ddd"/></svg>
<div class="a" style="left:4px;top:621px;width:36px;height:2px;background:#9a9a9a;"></div>
<svg class="a" style="left:4px;top:626px;" width="36" height="37" viewBox="0 0 36 37"><path d="M1 1 V36 M1 1 H5 M1 36 H5 M35 1 V36 M35 1 H31 M35 36 H31" stroke="#20c020" stroke-width="1.5" fill="none"/><circle cx="16" cy="16" r="8" fill="none" stroke="#ddd" stroke-width="2.2"/><path d="M22 22 L29 29" stroke="#ddd" stroke-width="3"/></svg>
<svg class="a" style="left:5px;top:890px;" width="34" height="30" viewBox="0 0 34 30"><path d="M1 29 L6 2 L12 2 L17 16 L22 2 L28 2 L33 29 L26 29 L24 13 L19 26 L15 26 L10 13 L8 29 Z" fill="#2bb3b8"/><path d="M6 2 L12 2 L17 16 L15 26 Z" fill="#1a8a90"/></svg>
<div class="a" style="left:48px;top:146px;width:267px;height:784px;background:#444444;"></div>
<div class="a" style="left:48px;top:150px;width:263px;height:17px;background:#3b3b3b;"></div>
<div class="a" style="left:48px;top:151px;width:64px;height:16px;background:#444444;"></div>
<div class="t" style="left:57px;top:155.07px;font-size:11.5px;color:#e6e6e6;transform:scaleX(0.9193);transform-origin:0 0;">Outliner</div>
<div class="t" style="left:57px;top:173.07px;font-size:11.5px;color:#c8c8c8;transform:scaleX(1.0075);transform-origin:0 0;">Display</div>
<div class="t" style="left:108px;top:173.07px;font-size:11.5px;color:#c8c8c8;transform:scaleX(0.9386);transform-origin:0 0;">Show</div>
<div class="t" style="left:153px;top:173.07px;font-size:11.5px;color:#c8c8c8;transform:scaleX(0.9723);transform-origin:0 0;">Help</div>
<svg class="a" style="left:55px;top:194px;" width="16" height="17" viewBox="0 0 16 17"><rect x="1" y="1" width="14" height="15" fill="none" stroke="#666" stroke-dasharray="2 1.5"/><path d="M5 5 L11 8.5 L5 12 Z" fill="#666"/></svg>
<div class="a" style="left:75px;top:194px;width:230px;height:17px;background:#2b2b2b;border-radius:2px"></div>
<div class="t" style="left:80px;top:198.07px;font-size:11.5px;color:#8a8a8a;transform:scaleX(0.9134);transform-origin:0 0;">Search...</div>
<svg class="a" style="left:291px;top:200px;" width="10" height="6" viewBox="0 0 10 6"><path d="M0 0 H10 L5 6 Z" fill="#ddd"/></svg>
<div class="a" style="left:50px;top:213px;width:247px;height:699px;background:#3b3b3b;"></div>
<div class="a" style="left:297px;top:213px;width:9px;height:699px;background:#3b3b3b;"></div>
<svg class="a" style="left:297px;top:216px;" width="9" height="6" viewBox="0 0 9 6"><path d="M0 6 L4.5 1 L9 6 Z" fill="#ccc"/></svg>
<div class="a" style="left:297px;top:226px;width:8px;height:62px;background:#555;border-radius:4px"></div>
<svg class="a" style="left:295px;top:896px;" width="12" height="8" viewBox="0 0 12 8"><path d="M0 0 H12 L6 7 Z" fill="#ccc"/></svg>
<div class="a" style="left:50px;top:906px;width:256px;height:16px;background:#3b3b3b;"></div>
<svg class="a" style="left:52px;top:909px;" width="7" height="10" viewBox="0 0 7 10"><path d="M7 0 V10 L1 5 Z" fill="#ccc"/></svg>
<div class="a" style="left:62px;top:908px;width:172px;height:10px;background:#555;border-radius:5px"></div>
<svg class="a" style="left:285px;top:909px;" width="7" height="10" viewBox="0 0 7 10"><path d="M0 0 V10 L6 5 Z" fill="#ccc"/></svg>
<svg class="a" style="left:128px;top:919px;" width="96" height="4" viewBox="0 0 96 4"><g fill="#777"><rect x="0" y="0" width="1" height="1"/><rect x="3" y="2" width="1" height="1"/><rect x="6" y="0" width="1" height="1"/><rect x="9" y="2" width="1" height="1"/><rect x="12" y="0" width="1" height="1"/><rect x="15" y="2" width="1" height="1"/><rect x="18" y="0" width="1" height="1"/><rect x="21" y="2" width="1" height="1"/><rect x="24" y="0" width="1" height="1"/><rect x="27" y="2" width="1" height="1"/><rect x="30" y="0" width="1" height="1"/><rect x="33" y="2" width="1" height="1"/><rect x="36" y="0" width="1" height="1"/><rect x="39" y="2" width="1" height="1"/><rect x="42" y="0" width="1" height="1"/><rect x="45" y="2" width="1" height="1"/><rect x="48" y="0" width="1" height="1"/><rect x="51" y="2" width="1" height="1"/><rect x="54" y="0" width="1" height="1"/><rect x="57" y="2" width="1" height="1"/><rect x="60" y="0" width="1" height="1"/><rect x="63" y="2" width="1" height="1"/><rect x="66" y="0" width="1" height="1"/><rect x="69" y="2" width="1" height="1"/><rect x="72" y="0" width="1" height="1"/><rect x="75" y="2" width="1" height="1"/><rect x="78" y="0" width="1" height="1"/><rect x="81" y="2" width="1" height="1"/><rect x="84" y="0" width="1" height="1"/><rect x="87" y="2" width="1" height="1"/><rect x="90" y="0" width="1" height="1"/><rect x="93" y="2" width="1" height="1"/></g></svg>
<div class="a" style="left:50px;top:213px;width:246px;height:692px;overflow:hidden">
<div class="t" style="left:54.5px;top:5.77px;font-size:11.5px;color:#8c8c8c">persp</div>
<div class="t" style="left:54.5px;top:25.77px;font-size:11.5px;color:#8c8c8c">top</div>
<div class="t" style="left:54.5px;top:45.77px;font-size:11.5px;color:#8c8c8c">front</div>
<div class="t" style="left:54.5px;top:65.77px;font-size:11.5px;color:#8c8c8c">side</div>
<div class="t" style="left:54.5px;top:85.77px;font-size:11.5px;color:#cfcfcf">BoneRoot</div>
<div class="t" style="left:66.5px;top:105.77px;font-size:11.5px;color:#cfcfcf">Hip</div>
<div class="t" style="left:78.5px;top:125.77px;font-size:11.5px;color:#cfcfcf">Pelvis</div>
<div class="t" style="left:78.5px;top:145.77px;font-size:11.5px;color:#cfcfcf">Waist</div>
<div class="t" style="left:90.5px;top:165.77px;font-size:11.5px;color:#cfcfcf">Spine01</div>
<div class="t" style="left:102.5px;top:185.77px;font-size:11.5px;color:#cfcfcf">Spine02</div>
<div class="t" style="left:114.5px;top:205.77px;font-size:11.5px;color:#cfcfcf">NeckTwist01</div>
<div class="t" style="left:126.5px;top:225.77px;font-size:11.5px;color:#cfcfcf">NeckTwist02</div>
<div class="t" style="left:138.5px;top:245.77px;font-size:11.5px;color:#cfcfcf">Head</div>
<div class="t" style="left:150.5px;top:265.77px;font-size:11.5px;color:#cfcfcf">FacialBone</div>
<div class="t" style="left:150.5px;top:285.77px;font-size:11.5px;color:#cfcfcf">Head_parentConst</div>
<div class="t" style="left:150.5px;top:305.77px;font-size:11.5px;color:#cfcfcf">transform1</div>
<div class="t" style="left:150.5px;top:325.77px;font-size:11.5px;color:#cfcfcf">transform2</div>
<div class="t" style="left:138.5px;top:345.77px;font-size:11.5px;color:#cfcfcf">NeckTwist02_parent(</div>
<div class="t" style="left:126.5px;top:365.77px;font-size:11.5px;color:#cfcfcf">NeckTwist01_parentCo</div>
<div class="t" style="left:114.5px;top:385.77px;font-size:11.5px;color:#cfcfcf">L_Clavicle</div>
<div class="t" style="left:114.5px;top:405.77px;font-size:11.5px;color:#cfcfcf">L_RibsTwist</div>
<div class="t" style="left:114.5px;top:425.77px;font-size:11.5px;color:#cfcfcf">R_RibsTwist</div>
<div class="t" style="left:114.5px;top:445.77px;font-size:11.5px;color:#cfcfcf">R_Clavicle</div>
<div class="t" style="left:114.5px;top:465.77px;font-size:11.5px;color:#cfcfcf">Spine02_parentConstrain</div>
<div class="t" style="left:102.5px;top:485.77px;font-size:11.5px;color:#cfcfcf">Spine01_parentConstraint1</div>
<div class="t" style="left:90.5px;top:505.77px;font-size:11.5px;color:#cfcfcf">Waist_parentConstraint1</div>
<div class="t" style="left:54.5px;top:525.77px;font-size:11.5px;color:#cfcfcf">Tongue</div>
<div class="t" style="left:54.5px;top:545.77px;font-size:11.5px;color:#cfcfcf">Body</div>
<div class="t" style="left:54.5px;top:565.77px;font-size:11.5px;color:#cfcfcf">Eye</div>
<div class="t" style="left:54.5px;top:585.77px;font-size:11.5px;color:#cfcfcf">Teeth</div>
<div class="t" style="left:54.5px;top:605.77px;font-size:11.5px;color:#cfcfcf">EyeOcclusion</div>
<div class="t" style="left:54.5px;top:625.77px;font-size:11.5px;color:#cfcfcf">TearLine</div>
<div class="t" style="left:54.5px;top:645.77px;font-size:11.5px;color:#cfcfcf">Boxers</div>
<div class="t" style="left:54.5px;top:665.77px;font-size:11.5px;color:#cfcfcf">Undercut_fade</div>
<div class="t" style="left:54.5px;top:685.77px;font-size:11.5px;color:#cfcfcf">Half_up</div>
<svg class="a" style="left:0;top:0" width="246" height="692"><path d="M25.5 95.0 V111.5 H33 M37.5 115.0 V131.5 H45 M37.5 115.0 V151.5 H45 M49.5 155.0 V171.5 H57 M61.5 175.0 V191.5 H69 M73.5 195.0 V211.5 H81 M85.5 215.0 V231.5 H93 M97.5 235.0 V251.5 H105 M109.5 255.0 V271.5 H117 M109.5 255.0 V291.5 H119 M109.5 255.0 V311.5 H119 M109.5 255.0 V331.5 H117 M97.5 235.0 V351.5 H107 M85.5 215.0 V371.5 H95 M73.5 195.0 V391.5 H81 M73.5 195.0 V411.5 H81 M73.5 195.0 V431.5 H81 M73.5 195.0 V451.5 H81 M73.5 195.0 V471.5 H83 M61.5 175.0 V491.5 H71 M49.5 155.0 V511.5 H59" fill="none" stroke="#b0b0b0" stroke-width="1" transform="translate(0.5 0)"/><g transform="translate(36,6.5)"><rect x="0" y="1" width="9" height="7" fill="#cfcfcf"/><path d="M9 4.5 L14 0 V9 Z" fill="#cfcfcf"/></g><g transform="translate(36,26.5)"><rect x="0" y="1" width="9" height="7" fill="#cfcfcf"/><path d="M9 4.5 L14 0 V9 Z" fill="#cfcfcf"/></g><g transform="translate(36,46.5)"><rect x="0" y="1" width="9" height="7" fill="#cfcfcf"/><path d="M9 4.5 L14 0 V9 Z" fill="#cfcfcf"/></g><g transform="translate(36,66.5)"><rect x="0" y="1" width="9" height="7" fill="#cfcfcf"/><path d="M9 4.5 L14 0 V9 Z" fill="#cfcfcf"/></g><g transform="translate(37.5,84.0)"><path d="M12 2.5 L3 8.5" stroke="#a195dc" stroke-width="2.6" stroke-linecap="round"/><path d="M1.5 9 L5 6.5 L12 15.5 L9 17 Z" fill="#a195dc"/><circle cx="12.2" cy="2.3" r="2.2" fill="#d0c8f4"/><circle cx="3" cy="8.7" r="2.4" fill="#d0c8f4"/></g><rect x="21.5" y="87.5" width="8" height="8" fill="#3b3b3b" stroke="#c0c0c0"/><path d="M23.5 91.5 H27.5" stroke="#c0c0c0"/><g transform="translate(49.5,104.0)"><path d="M12 2.5 L3 8.5" stroke="#a195dc" stroke-width="2.6" stroke-linecap="round"/><path d="M1.5 9 L5 6.5 L12 15.5 L9 17 Z" fill="#a195dc"/><circle cx="12.2" cy="2.3" r="2.2" fill="#d0c8f4"/><circle cx="3" cy="8.7" r="2.4" fill="#d0c8f4"/></g><rect x="33.5" y="107.5" width="8" height="8" fill="#3b3b3b" stroke="#c0c0c0"/><path d="M35.5 111.5 H39.5" stroke="#c0c0c0"/><g transform="translate(61.5,124.0)"><path d="M12 2.5 L3 8.5" stroke="#a195dc" stroke-width="2.6" stroke-linecap="round"/><path d="M1.5 9 L5 6.5 L12 15.5 L9 17 Z" fill="#a195dc"/><circle cx="12.2" cy="2.3" r="2.2" fill="#d0c8f4"/><circle cx="3" cy="8.7" r="2.4" fill="#d0c8f4"/></g><rect x="45.5" y="127.5" width="8" height="8" fill="#3b3b3b" stroke="#c0c0c0"/><path d="M47.5 131.5 H51.5" stroke="#c0c0c0"/><path d="M49.5 129.5 V133.5" stroke="#c0c0c0"/><g transform="translate(61.5,144.0)"><path d="M12 2.5 L3 8.5" stroke="#a195dc" stroke-width="2.6" stroke-linecap="round"/><path d="M1.5 9 L5 6.5 L12 15.5 L9 17 Z" fill="#a195dc"/><circle cx="12.2" cy="2.3" r="2.2" fill="#d0c8f4"/><circle cx="3" cy="8.7" r="2.4" fill="#d0c8f4"/></g><rect x="45.5" y="147.5" width="8" height="8" fill="#3b3b3b" stroke="#c0c0c0"/><path d="M47.5 151.5 H51.5" stroke="#c0c0c0"/><g transform="translate(73.5,164.0)"><path d="M12 2.5 L3 8.5" stroke="#a195dc" stroke-width="2.6" stroke-linecap="round"/><path d="M1.5 9 L5 6.5 L12 15.5 L9 17 Z" fill="#a195dc"/><circle cx="12.2" cy="2.3" r="2.2" fill="#d0c8f4"/><circle cx="3" cy="8.7" r="2.4" fill="#d0c8f4"/></g><rect x="57.5" y="167.5" width="8" height="8" fill="#3b3b3b" stroke="#c0c0c0"/><path d="M59.5 171.5 H63.5" stroke="#c0c0c0"/><g transform="translate(85.5,184.0)"><path d="M12 2.5 L3 8.5" stroke="#a195dc" stroke-width="2.6" stroke-linecap="round"/><path d="M1.5 9 L5 6.5 L12 15.5 L9 17 Z" fill="#a195dc"/><circle cx="12.2" cy="2.3" r="2.2" fill="#d0c8f4"/><circle cx="3" cy="8.7" r="2.4" fill="#d0c8f4"/></g><rect x="69.5" y="187.5" width="8" height="8" fill="#3b3b3b" stroke="#c0c0c0"/><path d="M71.5 191.5 H75.5" stroke="#c0c0c0"/><g transform="translate(97.5,204.0)"><path d="M12 2.5 L3 8.5" stroke="#a195dc" stroke-width="2.6" stroke-linecap="round"/><path d="M1.5 9 L5 6.5 L12 15.5 L9 17 Z" fill="#a195dc"/><circle cx="12.2" cy="2.3" r="2.2" fill="#d0c8f4"/><circle cx="3" cy="8.7" r="2.4" fill="#d0c8f4"/></g><rect x="81.5" y="207.5" width="8" height="8" fill="#3b3b3b" stroke="#c0c0c0"/><path d="M83.5 211.5 H87.5" stroke="#c0c0c0"/><g transform="translate(109.5,224.0)"><path d="M12 2.5 L3 8.5" stroke="#a195dc" stroke-width="2.6" stroke-linecap="round"/><path d="M1.5 9 L5 6.5 L12 15.5 L9 17 Z" fill="#a195dc"/><circle cx="12.2" cy="2.3" r="2.2" fill="#d0c8f4"/><circle cx="3" cy="8.7" r="2.4" fill="#d0c8f4"/></g><rect x="93.5" y="227.5" width="8" height="8" fill="#3b3b3b" stroke="#c0c0c0"/><path d="M95.5 231.5 H99.5" stroke="#c0c0c0"/><g transform="translate(121.5,244.0)"><path d="M12 2.5 L3 8.5" stroke="#a195dc" stroke-width="2.6" stroke-linecap="round"/><path d="M1.5 9 L5 6.5 L12 15.5 L9 17 Z" fill="#a195dc"/><circle cx="12.2" cy="2.3" r="2.2" fill="#d0c8f4"/><circle cx="3" cy="8.7" r="2.4" fill="#d0c8f4"/></g><rect x="105.5" y="247.5" width="8" height="8" fill="#3b3b3b" stroke="#c0c0c0"/><path d="M107.5 251.5 H111.5" stroke="#c0c0c0"/><g transform="translate(133.5,264.0)"><path d="M12 2.5 L3 8.5" stroke="#a195dc" stroke-width="2.6" stroke-linecap="round"/><path d="M1.5 9 L5 6.5 L12 15.5 L9 17 Z" fill="#a195dc"/><circle cx="12.2" cy="2.3" r="2.2" fill="#d0c8f4"/><circle cx="3" cy="8.7" r="2.4" fill="#d0c8f4"/></g><rect x="117.5" y="267.5" width="8" height="8" fill="#3b3b3b" stroke="#c0c0c0"/><path d="M119.5 271.5 H123.5" stroke="#c0c0c0"/><path d="M121.5 269.5 V273.5" stroke="#c0c0c0"/><g transform="translate(133.5,284.0)"><path d="M3 10 L6 13 L9 10 M7 7 L10 4 L13 7" fill="none" stroke="#e04848" stroke-width="2.2"/><rect x="1" y="7" width="6" height="6" rx="2" transform="rotate(-45 4 10)" fill="none" stroke="#e04848" stroke-width="2"/><rect x="8" y="1" width="6" height="6" rx="2" transform="rotate(-45 11 4)" fill="none" stroke="#e04848" stroke-width="2"/></g><circle cx="121.5" cy="291.5" r="2.5" fill="#9a9a9a"/><g transform="translate(133.5,304.0)"><path d="M4 2 H14 L10 13 H0 Z" fill="#dcdcdc"/><path d="M1 8 H9 M6 5 L9 8 L6 11" stroke="#e03030" stroke-width="1.8" fill="none"/></g><circle cx="121.5" cy="311.5" r="2.5" fill="#9a9a9a"/><g transform="translate(133.5,324.0)"><path d="M4 2 H14 L10 13 H0 Z" fill="#dcdcdc"/><path d="M1 8 H9 M6 5 L9 8 L6 11" stroke="#e03030" stroke-width="1.8" fill="none"/></g><rect x="117.5" y="327.5" width="8" height="8" fill="#3b3b3b" stroke="#c0c0c0"/><path d="M119.5 331.5 H123.5" stroke="#c0c0c0"/><path d="M121.5 329.5 V333.5" stroke="#c0c0c0"/><g transform="translate(121.5,344.0)"><path d="M3 10 L6 13 L9 10 M7 7 L10 4 L13 7" fill="none" stroke="#e04848" stroke-width="2.2"/><rect x="1" y="7" width="6" height="6" rx="2" transform="rotate(-45 4 10)" fill="none" stroke="#e04848" stroke-width="2"/><rect x="8" y="1" width="6" height="6" rx="2" transform="rotate(-45 11 4)" fill="none" stroke="#e04848" stroke-width="2"/></g><circle cx="109.5" cy="351.5" r="2.5" fill="#9a9a9a"/><g transform="translate(109.5,364.0)"><path d="M3 10 L6 13 L9 10 M7 7 L10 4 L13 7" fill="none" stroke="#e04848" stroke-width="2.2"/><rect x="1" y="7" width="6" height="6" rx="2" transform="rotate(-45 4 10)" fill="none" stroke="#e04848" stroke-width="2"/><rect x="8" y="1" width="6" height="6" rx="2" transform="rotate(-45 11 4)" fill="none" stroke="#e04848" stroke-width="2"/></g><circle cx="97.5" cy="371.5" r="2.5" fill="#9a9a9a"/><g transform="translate(97.5,384.0)"><path d="M12 2.5 L3 8.5" stroke="#a195dc" stroke-width="2.6" stroke-linecap="round"/><path d="M1.5 9 L5 6.5 L12 15.5 L9 17 Z" fill="#a195dc"/><circle cx="12.2" cy="2.3" r="2.2" fill="#d0c8f4"/><circle cx="3" cy="8.7" r="2.4" fill="#d0c8f4"/></g><rect x="81.5" y="387.5" width="8" height="8" fill="#3b3b3b" stroke="#c0c0c0"/><path d="M83.5 391.5 H87.5" stroke="#c0c0c0"/><path d="M85.5 389.5 V393.5" stroke="#c0c0c0"/><g transform="translate(97.5,404.0)"><path d="M12 2.5 L3 8.5" stroke="#a195dc" stroke-width="2.6" stroke-linecap="round"/><path d="M1.5 9 L5 6.5 L12 15.5 L9 17 Z" fill="#a195dc"/><circle cx="12.2" cy="2.3" r="2.2" fill="#d0c8f4"/><circle cx="3" cy="8.7" r="2.4" fill="#d0c8f4"/></g><rect x="81.5" y="407.5" width="8" height="8" fill="#3b3b3b" stroke="#c0c0c0"/><path d="M83.5 411.5 H87.5" stroke="#c0c0c0"/><path d="M85.5 409.5 V413.5" stroke="#c0c0c0"/><g transform="translate(97.5,424.0)"><path d="M12 2.5 L3 8.5" stroke="#a195dc" stroke-width="2.6" stroke-linecap="round"/><path d="M1.5 9 L5 6.5 L12 15.5 L9 17 Z" fill="#a195dc"/><circle cx="12.2" cy="2.3" r="2.2" fill="#d0c8f4"/><circle cx="3" cy="8.7" r="2.4" fill="#d0c8f4"/></g><rect x="81.5" y="427.5" width="8" height="8" fill="#3b3b3b" stroke="#c0c0c0"/><path d="M83.5 431.5 H87.5" stroke="#c0c0c0"/><path d="M85.5 429.5 V433.5" stroke="#c0c0c0"/><g transform="translate(97.5,444.0)"><path d="M12 2.5 L3 8.5" stroke="#a195dc" stroke-width="2.6" stroke-linecap="round"/><path d="M1.5 9 L5 6.5 L12 15.5 L9 17 Z" fill="#a195dc"/><circle cx="12.2" cy="2.3" r="2.2" fill="#d0c8f4"/><circle cx="3" cy="8.7" r="2.4" fill="#d0c8f4"/></g><rect x="81.5" y="447.5" width="8" height="8" fill="#3b3b3b" stroke="#c0c0c0"/><path d="M83.5 451.5 H87.5" stroke="#c0c0c0"/><path d="M85.5 449.5 V453.5" stroke="#c0c0c0"/><g transform="translate(97.5,464.0)"><path d="M3 10 L6 13 L9 10 M7 7 L10 4 L13 7" fill="none" stroke="#e04848" stroke-width="2.2"/><rect x="1" y="7" width="6" height="6" rx="2" transform="rotate(-45 4 10)" fill="none" stroke="#e04848" stroke-width="2"/><rect x="8" y="1" width="6" height="6" rx="2" transform="rotate(-45 11 4)" fill="none" stroke="#e04848" stroke-width="2"/></g><circle cx="85.5" cy="471.5" r="2.5" fill="#9a9a9a"/><g transform="translate(85.5,484.0)"><path d="M3 10 L6 13 L9 10 M7 7 L10 4 L13 7" fill="none" stroke="#e04848" stroke-width="2.2"/><rect x="1" y="7" width="6" height="6" rx="2" transform="rotate(-45 4 10)" fill="none" stroke="#e04848" stroke-width="2"/><rect x="8" y="1" width="6" height="6" rx="2" transform="rotate(-45 11 4)" fill="none" stroke="#e04848" stroke-width="2"/></g><circle cx="73.5" cy="491.5" r="2.5" fill="#9a9a9a"/><g transform="translate(73.5,504.0)"><path d="M3 10 L6 13 L9 10 M7 7 L10 4 L13 7" fill="none" stroke="#e04848" stroke-width="2.2"/><rect x="1" y="7" width="6" height="6" rx="2" transform="rotate(-45 4 10)" fill="none" stroke="#e04848" stroke-width="2"/><rect x="8" y="1" width="6" height="6" rx="2" transform="rotate(-45 11 4)" fill="none" stroke="#e04848" stroke-width="2"/></g><circle cx="61.5" cy="511.5" r="2.5" fill="#9a9a9a"/><g transform="translate(36,526.0)"><g fill="none" stroke="#d8d8d8" stroke-width="1.8"><path d="M7 0.5 L10 3.5 L7 6.5 L4 3.5 Z"/><path d="M3.5 3 L6.5 6 L3.5 9 L0.5 6 Z"/><path d="M10.5 3 L13.5 6 L10.5 9 L7.5 6 Z"/><path d="M7 5.5 L10 8.5 L7 11.5 L4 8.5 Z"/></g></g><g transform="translate(36,546.0)"><g fill="none" stroke="#d8d8d8" stroke-width="1.8"><path d="M7 0.5 L10 3.5 L7 6.5 L4 3.5 Z"/><path d="M3.5 3 L6.5 6 L3.5 9 L0.5 6 Z"/><path d="M10.5 3 L13.5 6 L10.5 9 L7.5 6 Z"/><path d="M7 5.5 L10 8.5 L7 11.5 L4 8.5 Z"/></g></g><g transform="translate(36,566.0)"><g fill="none" stroke="#d8d8d8" stroke-width="1.8"><path d="M7 0.5 L10 3.5 L7 6.5 L4 3.5 Z"/><path d="M3.5 3 L6.5 6 L3.5 9 L0.5 6 Z"/><path d="M10.5 3 L13.5 6 L10.5 9 L7.5 6 Z"/><path d="M7 5.5 L10 8.5 L7 11.5 L4 8.5 Z"/></g></g><g transform="translate(36,586.0)"><g fill="none" stroke="#d8d8d8" stroke-width="1.8"><path d="M7 0.5 L10 3.5 L7 6.5 L4 3.5 Z"/><path d="M3.5 3 L6.5 6 L3.5 9 L0.5 6 Z"/><path d="M10.5 3 L13.5 6 L10.5 9 L7.5 6 Z"/><path d="M7 5.5 L10 8.5 L7 11.5 L4 8.5 Z"/></g></g><g transform="translate(36,606.0)"><g fill="none" stroke="#d8d8d8" stroke-width="1.8"><path d="M7 0.5 L10 3.5 L7 6.5 L4 3.5 Z"/><path d="M3.5 3 L6.5 6 L3.5 9 L0.5 6 Z"/><path d="M10.5 3 L13.5 6 L10.5 9 L7.5 6 Z"/><path d="M7 5.5 L10 8.5 L7 11.5 L4 8.5 Z"/></g></g><g transform="translate(36,626.0)"><g fill="none" stroke="#d8d8d8" stroke-width="1.8"><path d="M7 0.5 L10 3.5 L7 6.5 L4 3.5 Z"/><path d="M3.5 3 L6.5 6 L3.5 9 L0.5 6 Z"/><path d="M10.5 3 L13.5 6 L10.5 9 L7.5 6 Z"/><path d="M7 5.5 L10 8.5 L7 11.5 L4 8.5 Z"/></g></g><g transform="translate(36,646.0)"><g fill="none" stroke="#d8d8d8" stroke-width="1.8"><path d="M7 0.5 L10 3.5 L7 6.5 L4 3.5 Z"/><path d="M3.5 3 L6.5 6 L3.5 9 L0.5 6 Z"/><path d="M10.5 3 L13.5 6 L10.5 9 L7.5 6 Z"/><path d="M7 5.5 L10 8.5 L7 11.5 L4 8.5 Z"/></g></g><g transform="translate(36,666.0)"><g fill="none" stroke="#d8d8d8" stroke-width="1.8"><path d="M7 0.5 L10 3.5 L7 6.5 L4 3.5 Z"/><path d="M3.5 3 L6.5 6 L3.5 9 L0.5 6 Z"/><path d="M10.5 3 L13.5 6 L10.5 9 L7.5 6 Z"/><path d="M7 5.5 L10 8.5 L7 11.5 L4 8.5 Z"/></g></g><g transform="translate(36,686.0)"><g fill="none" stroke="#d8d8d8" stroke-width="1.8"><path d="M7 0.5 L10 3.5 L7 6.5 L4 3.5 Z"/><path d="M3.5 3 L6.5 6 L3.5 9 L0.5 6 Z"/><path d="M10.5 3 L13.5 6 L10.5 9 L7.5 6 Z"/><path d="M7 5.5 L10 8.5 L7 11.5 L4 8.5 Z"/></g></g></svg>
</div>
<div class="a" style="left:311px;top:146px;width:4px;height:784px;background:#3a3a3a;"></div>
<div class="a" style="left:315px;top:146px;width:1125px;height:784px;background:#444444;"></div>
<div class="a" style="left:315px;top:152px;width:1121px;height:773px;background:none;border:1px solid #6a6a6a"></div>
<div class="t" style="left:324px;top:157.07px;font-size:11.5px;color:#d0d0d0;transform:scaleX(1.0107);transform-origin:0 0;">View</div>
<div class="t" style="left:364.5px;top:157.07px;font-size:11.5px;color:#d0d0d0;transform:scaleX(1.0074);transform-origin:0 0;">Shading</div>
<div class="t" style="left:422px;top:157.07px;font-size:11.5px;color:#d0d0d0;transform:scaleX(1.0679);transform-origin:0 0;">Lighting</div>
<div class="t" style="left:480.5px;top:157.07px;font-size:11.5px;color:#d0d0d0;transform:scaleX(0.9908);transform-origin:0 0;">Show</div>
<div class="t" style="left:524px;top:157.07px;font-size:11.5px;color:#d0d0d0;transform:scaleX(0.9808);transform-origin:0 0;">Renderer</div>
<div class="t" style="left:586px;top:157.07px;font-size:11.5px;color:#d0d0d0;transform:scaleX(0.9387);transform-origin:0 0;">Panels</div>
<svg class="a" style="left:318px;top:174px;" width="4" height="15" viewBox="0 0 4 15"><path d="M2 0 L3 7.5 L2 15 L1 7.5 Z" fill="#888"/></svg>
<div class="a" style="left:327px;top:172px;width:18px;height:18px;background:#5285a6;"></div>
<svg class="a" style="left:328px;top:173px;" width="16" height="16" viewBox="0 0 16 16"><circle cx="8" cy="8" r="7" fill="#6fb0e0"/><path d="M4 5 L8 12 L12 4" fill="none" stroke="#fff" stroke-width="2"/></svg>
<svg class="a" style="left:348px;top:174px;" width="14" height="14" viewBox="0 0 14 14"><circle cx="7" cy="7" r="6.5" fill="#3a90e0"/><circle cx="5" cy="5" r="2.5" fill="#8cd0ff"/></svg>
<svg class="a" style="left:367px;top:174px;" width="14" height="15" viewBox="0 0 14 15"><rect x="0" y="1" width="11" height="11" fill="#f07030"/><path d="M5 5 L13 13 L10 13 L11 15 L9 15 Z" fill="#ddd"/></svg>
<svg class="a" style="left:387px;top:174px;" width="4" height="15" viewBox="0 0 4 15"><path d="M2 0 L3 7.5 L2 15 L1 7.5 Z" fill="#888"/></svg>
<svg class="a" style="left:396px;top:176px;" width="16" height="11" viewBox="0 0 16 11"><rect x="0" y="2" width="9" height="7" fill="#ccc"/><path d="M9 5.5 L15 0 V11 Z" fill="#ccc"/></svg>
<svg class="a" style="left:415px;top:174px;" width="16" height="15" viewBox="0 0 16 15"><rect x="0" y="5" width="9" height="8" fill="#3aa8b0"/><path d="M9 8 L15 3 V13 Z" fill="#ccc"/><circle cx="4" cy="4" r="3" fill="none" stroke="#ccc"/></svg>
<svg class="a" style="left:435px;top:174px;" width="16" height="15" viewBox="0 0 16 15"><rect x="0" y="4" width="10" height="9" fill="#ccc"/><circle cx="5" cy="8.5" r="3" fill="#3aa8b0"/><path d="M10 7 L15 2 V13 Z" fill="#ccc"/></svg>
<svg class="a" style="left:458px;top:174px;" width="8" height="15" viewBox="0 0 8 15"><path d="M0 0 H8 V15 L4 11 L0 15 Z" fill="#ccc"/></svg>
<svg class="a" style="left:474px;top:173px;" width="14" height="16" viewBox="0 0 14 16"><path d="M2 14 C2 6 8 2 13 1 C12 8 8 13 2 14 Z" fill="#3aa8b0"/><path d="M1 15 L12 4" stroke="#ccc" stroke-width="1.5"/></svg>
<svg class="a" style="left:492px;top:173px;" width="16" height="16" viewBox="0 0 16 16"><path d="M6 0 V10 M1 5 H11" stroke="#ddd" stroke-width="1.5"/><circle cx="10" cy="10" r="4.5" fill="none" stroke="#3aa8b0" stroke-width="1.8"/></svg>
<svg class="a" style="left:511px;top:173px;" width="14" height="16" viewBox="0 0 14 16"><path d="M3 13 L12 3" stroke="#ccc" stroke-width="2"/><circle cx="4" cy="12" r="3.5" fill="#3aa8b0"/></svg>
<svg class="a" style="left:530.5px;top:174px;" width="4" height="15" viewBox="0 0 4 15"><path d="M2 0 L3 7.5 L2 15 L1 7.5 Z" fill="#888"/></svg>
<div class="a" style="left:539px;top:172px;width:17px;height:18px;background:#5285a6;"></div>
<svg class="a" style="left:540px;top:173px;" width="15" height="15" viewBox="0 0 15 15"><rect x="1" y="1" width="13" height="13" fill="none" stroke="#eee"/><path d="M5.3 1 V14 M9.6 1 V14 M1 5.3 H14 M1 9.6 H14" stroke="#eee"/></svg>
<svg class="a" style="left:560px;top:174px;" width="15" height="14" viewBox="0 0 15 14"><rect x="0.5" y="0.5" width="14" height="13" fill="none" stroke="#ddd"/><path d="M0.5 3 H14.5 M0.5 11 H14.5" stroke="#ddd"/></svg>
<svg class="a" style="left:579px;top:174px;" width="14" height="14" viewBox="0 0 14 14"><rect x="0.5" y="0.5" width="13" height="13" fill="none" stroke="#ddd"/><circle cx="7" cy="7" r="3.5" fill="#3aa8b0"/></svg>
<svg class="a" style="left:597px;top:174px;" width="14" height="14" viewBox="0 0 14 14"><rect x="0" y="0" width="14" height="14" fill="#3a3a3a"/><circle cx="7" cy="7" r="4" fill="#555"/></svg>
<svg class="a" style="left:616px;top:174px;" width="15" height="14" viewBox="0 0 15 14"><rect x="0.5" y="0.5" width="14" height="13" fill="none" stroke="#ddd"/><path d="M3 7 H12 M4 4 V10 M7.5 4 V10 M11 4 V10" stroke="#3aa8b0"/></svg>
<svg class="a" style="left:636px;top:174px;" width="14" height="14" viewBox="0 0 14 14"><rect x="0.5" y="0.5" width="13" height="13" fill="none" stroke="#ddd"/><path d="M1 12 L5 7 L8 10 L13 5 V13 H1 Z" fill="#3aa8b0"/><circle cx="9" cy="4" r="2" fill="#ddd"/></svg>
<svg class="a" style="left:655px;top:174px;" width="14" height="14" viewBox="0 0 14 14"><rect x="0.5" y="0.5" width="13" height="13" fill="none" stroke="#ddd"/><path d="M3 3.5 H11 M7 3.5 V12" stroke="#3aa8b0" stroke-width="2"/></svg>
<svg class="a" style="left:674px;top:174px;" width="4" height="15" viewBox="0 0 4 15"><path d="M2 0 L3 7.5 L2 15 L1 7.5 Z" fill="#888"/></svg>
<svg class="a" style="left:685px;top:173px;" width="15" height="16" viewBox="0 0 15 16"><path d="M7.5 1 L14 4.5 V11.5 L7.5 15 L1 11.5 V4.5 Z M1 4.5 L7.5 8 L14 4.5 M7.5 8 V15" fill="none" stroke="#ddd"/></svg>
<div class="a" style="left:702px;top:172px;width:18px;height:18px;background:#5285a6;"></div>
<svg class="a" style="left:703px;top:173px;" width="16" height="16" viewBox="0 0 16 16"><path d="M8 1 L15 4.5 V11.5 L8 15 L1 11.5 V4.5 Z" fill="#40c8d8"/><path d="M1 4.5 L8 8 L15 4.5 M8 8 V15" fill="none" stroke="#208898"/></svg>
<svg class="a" style="left:724px;top:174px;" width="13" height="13" viewBox="0 0 13 13"><circle cx="6.5" cy="6.5" r="6" fill="#ddd"/><path d="M6.5 0.5 A6 6 0 0 1 6.5 12.5 Z" fill="#666"/></svg>
<div class="a" style="left:740px;top:172px;width:36px;height:18px;background:#5285a6;"></div>
<div class="a" style="left:758px;top:172px;width:1px;height:18px;background:#3e6d8c;"></div>
<svg class="a" style="left:741px;top:173px;" width="16" height="16" viewBox="0 0 16 16"><path d="M8 1 L15 4.5 V11.5 L8 15 L1 11.5 V4.5 Z M1 4.5 L8 8 L15 4.5 M8 8 V15" fill="none" stroke="#ddd"/><rect x="5" y="6" width="6" height="5" fill="none" stroke="#3ce"/></svg>
<svg class="a" style="left:760px;top:173px;" width="15" height="15" viewBox="0 0 15 15"><circle cx="7.5" cy="7.5" r="7" fill="#eee"/><g fill="#333"><rect x="2" y="4" width="2" height="2"/><rect x="6" y="4" width="2" height="2"/><rect x="10" y="4" width="2" height="2"/><rect x="4" y="6" width="2" height="2"/><rect x="8" y="6" width="2" height="2"/><rect x="2" y="8" width="2" height="2"/><rect x="6" y="8" width="2" height="2"/><rect x="10" y="8" width="2" height="2"/><rect x="4" y="10" width="2" height="2"/><rect x="8" y="10" width="2" height="2"/></g></svg>
<svg class="a" style="left:780px;top:173px;" width="15" height="16" viewBox="0 0 15 16"><circle cx="7.5" cy="6" r="4" fill="#ddd"/><rect x="5.5" y="10" width="4" height="4" fill="#ccc"/><path d="M0 6 H2 M13 6 H15 M2 1 L3.5 2.5 M13 1 L11.5 2.5" stroke="#ccc"/></svg>
<svg class="a" style="left:798px;top:174px;" width="15" height="14" viewBox="0 0 15 14"><circle cx="10" cy="8" r="5" fill="#40b8c8"/><path d="M1 12 L6 7" stroke="#ccc" stroke-width="1.5"/></svg>
<svg class="a" style="left:818px;top:174px;" width="4" height="15" viewBox="0 0 4 15"><path d="M2 0 L3 7.5 L2 15 L1 7.5 Z" fill="#888"/></svg>
<svg class="a" style="left:829px;top:173px;" width="13" height="16" viewBox="0 0 13 16"><circle cx="6.5" cy="6" r="5.5" fill="#ddd"/><ellipse cx="6.5" cy="14" rx="5" ry="1.5" fill="#3aa8b0"/></svg>
<svg class="a" style="left:849px;top:173px;" width="13" height="16" viewBox="0 0 13 16"><circle cx="8" cy="5" r="4.5" fill="#ddd"/><circle cx="4" cy="10" r="4" fill="#777"/></svg>
<svg class="a" style="left:867px;top:173px;" width="13" height="16" viewBox="0 0 13 16"><circle cx="6.5" cy="8" r="5" fill="none" stroke="#3aa8b0" stroke-width="2" stroke-dasharray="3 2"/></svg>
<svg class="a" style="left:886px;top:173px;" width="16" height="16" viewBox="0 0 16 16"><rect x="0" y="0" width="16" height="16" fill="#3e4a48"/></svg>
<svg class="a" style="left:905.6px;top:174px;" width="4" height="15" viewBox="0 0 4 15"><path d="M2 0 L3 7.5 L2 15 L1 7.5 Z" fill="#888"/></svg>
<svg class="a" style="left:917px;top:173px;" width="13" height="16" viewBox="0 0 13 16"><rect x="0.5" y="0.5" width="9" height="9" fill="none" stroke="#3aa8b0" stroke-dasharray="2 1"/><path d="M5 5 L12 12 L9.5 12 L11 15 L9 15 L8 13 L5 15 Z" fill="#ddd"/></svg>
<svg class="a" style="left:935.5px;top:174px;" width="4" height="15" viewBox="0 0 4 15"><path d="M2 0 L3 7.5 L2 15 L1 7.5 Z" fill="#888"/></svg>
<svg class="a" style="left:946px;top:174px;" width="15" height="14" viewBox="0 0 15 14"><rect x="0" y="4" width="10" height="10" fill="#ddd"/><rect x="5" y="0" width="10" height="10" fill="none" stroke="#ddd" stroke-width="1.5"/></svg>
<svg class="a" style="left:966px;top:174px;" width="14" height="14" viewBox="0 0 14 14"><rect x="0" y="5" width="9" height="9" fill="#ddd"/><rect x="5" y="0" width="9" height="9" fill="none" stroke="#ddd" stroke-width="1.5"/></svg>
<div class="a" style="left:982px;top:172px;width:17px;height:18px;background:#3a3a3a;border:1px solid #5285a6"></div>
<svg class="a" style="left:985px;top:175px;" width="11" height="12" viewBox="0 0 11 12"><rect x="0.5" y="0.5" width="10" height="11" fill="none" stroke="#ddd"/><path d="M2 2 L9 9" stroke="#ddd" stroke-width="1.5"/></svg>
<svg class="a" style="left:1003px;top:174px;" width="4" height="15" viewBox="0 0 4 15"><path d="M2 0 L3 7.5 L2 15 L1 7.5 Z" fill="#888"/></svg>
<svg class="a" style="left:1014px;top:174px;" width="15" height="14" viewBox="0 0 15 14"><circle cx="7.5" cy="7" r="6.5" fill="#ccc"/><circle cx="7.5" cy="7" r="3" fill="#444"/><path d="M7.5 0.5 L9 5 M14 7 L10 8 M7.5 13.5 L6 9 M1 7 L5 6" stroke="#444" stroke-width="1.2"/></svg>
<div class="a" style="left:1033px;top:172px;width:37px;height:17px;background:#2b2b2b;"></div>
<div class="t" style="left:1038px;top:176.07px;font-size:11.5px;color:#d0d0d0;transform:scaleX(0.9392);transform-origin:0 0;">0.00</div>
<svg class="a" style="left:1077px;top:174px;" width="11" height="14" viewBox="0 0 11 14"><path d="M6 0 A7 7 0 0 0 6 14 Z" fill="#ccc"/><rect x="7" y="0" width="4" height="14" fill="#ccc"/></svg>
<div class="a" style="left:1093px;top:172px;width:37px;height:17px;background:#2b2b2b;"></div>
<div class="t" style="left:1099px;top:176.07px;font-size:11.5px;color:#d0d0d0;transform:scaleX(0.9392);transform-origin:0 0;">1.00</div>
<div class="a" style="left:1135px;top:172px;width:17px;height:18px;background:#5285a6;"></div>
<svg class="a" style="left:1137px;top:174px;" width="14" height="14" viewBox="0 0 14 14"><circle cx="7" cy="7" r="6.5" fill="#3ab8c8"/><ellipse cx="7" cy="7" rx="5" ry="3" fill="none" stroke="#1a5060"/><text x="7" y="9" font-size="5" text-anchor="middle" fill="#1a5060" font-family="Liberation Sans">OCIO</text></svg>
<div class="a" style="left:1155px;top:172px;width:197px;height:18px;background:#555;"></div>
<div class="a" style="left:1333px;top:172px;width:19px;height:18px;background:#4e4e4e;"></div>
<svg class="a" style="left:1338px;top:178px;" width="10" height="6" viewBox="0 0 10 6"><path d="M0 0 H10 L5 6 Z" fill="#ddd"/></svg>
<div class="t" style="left:1159px;top:177.07px;font-size:11.5px;color:#d0d0d0;transform:scaleX(0.8952);transform-origin:0 0;">ACES 1.0 SDR-video (sRGB)</div>
<svg class="a" style="left:316px;top:190px" width="1119" height="735" viewBox="316 190 1119 735">
<defs>
<linearGradient id="torso" x1="0" y1="0" x2="0" y2="1"><stop offset="0" stop-color="#ab7a62"/><stop offset="0.35" stop-color="#b8876e"/><stop offset="1" stop-color="#b5846c"/></linearGradient>
<linearGradient id="face" x1="0" y1="0" x2="0" y2="1"><stop offset="0" stop-color="#c49c80"/><stop offset="0.45" stop-color="#bf967a"/><stop offset="1" stop-color="#aa8068"/></linearGradient>
<linearGradient id="hair" x1="0" y1="0" x2="0" y2="1"><stop offset="0" stop-color="#704836"/><stop offset="0.7" stop-color="#64402f"/><stop offset="1" stop-color="#563828"/></linearGradient>
<linearGradient id="side" x1="0" y1="0" x2="0" y2="1"><stop offset="0" stop-color="#6a4636"/><stop offset="0.6" stop-color="#7a6050"/><stop offset="1" stop-color="#9a8270"/></linearGradient>
<filter id="b6" x="-50%" y="-50%" width="200%" height="200%"><feGaussianBlur stdDeviation="6"/></filter>
<filter id="b12" x="-50%" y="-50%" width="200%" height="200%"><feGaussianBlur stdDeviation="12"/></filter>
<filter id="b20" x="-50%" y="-50%" width="200%" height="200%"><feGaussianBlur stdDeviation="20"/></filter>
<filter id="b3" x="-50%" y="-50%" width="200%" height="200%"><feGaussianBlur stdDeviation="2.5"/></filter>
<filter id="b1" x="-50%" y="-50%" width="200%" height="200%"><feGaussianBlur stdDeviation="1"/></filter>
</defs>
<rect x="316" y="190" width="1119" height="735" fill="#dfdfdf"/>
<g font-size="10" fill="#d6d6d6" font-family="Liberation Sans"><text x="331" y="202">Verts:</text><text x="416" y="202">36202</text><text x="505" y="202">0</text><text x="570" y="202">0</text></g>
<g font-size="10" fill="#d6d6d6" font-family="Liberation Sans"><text x="331" y="222">Edges:</text><text x="416" y="222">76178</text><text x="505" y="222">0</text><text x="570" y="222">0</text></g>
<g font-size="10" fill="#d6d6d6" font-family="Liberation Sans"><text x="331" y="242">Faces:</text><text x="416" y="242">39779</text><text x="505" y="242">0</text><text x="570" y="242">0</text></g>
<g font-size="10" fill="#d6d6d6" font-family="Liberation Sans"><text x="331" y="262">Tris:</text><text x="416" y="262">61898</text><text x="505" y="262">0</text><text x="570" y="262">0</text></g>
<g font-size="10" fill="#d6d6d6" font-family="Liberation Sans"><text x="331" y="282">UVs:</text><text x="416" y="282">48404</text><text x="505" y="282">0</text><text x="570" y="282">0</text></g>
<path d="M316,752 C350,740 400,705 426,689 C460,668 510,645 537,632 C555,620 565,605 574,600 C595,585 615,566 648,564 C665,563 680,568 695,568 C720,566 760,550 779,544 C800,535 815,522 827,514 L827,470 L960,470 L956,537 C975,546 1000,553 1022,558 C1035,560 1045,557 1060,552 C1070,550 1085,552 1097,556 C1120,566 1160,590 1178,610 C1195,622 1230,640 1259,651 C1280,665 1295,676 1304,681 C1330,690 1350,700 1370,706 C1390,718 1420,740 1436,762 L1436,832 C1410,822 1390,810 1370,803 C1340,795 1310,790 1296,784 C1285,778 1280,770 1274,766 C1250,755 1225,745 1204,736 C1180,725 1150,712 1130,706 C1123,703 1115,703 1113,706 C1108,720 1104,735 1105,747 C1103,770 1102,790 1100,806 C1096,820 1093,830 1089,840 C1084,855 1080,865 1078,873 C1075,890 1073,910 1072,926 L713,926 C707,900 702,890 700,882 C695,860 690,845 685,826 C678,805 672,790 667,782 C660,765 653,752 645,745 C635,738 628,734 622,735 C610,738 600,745 552,771 C530,785 505,795 482,804 C460,810 440,815 415,823 C395,833 380,845 363,856 C345,868 330,876 316,882 Z" fill="url(#torso)"/>
<clipPath id="bc"><path d="M316,752 C350,740 400,705 426,689 C460,668 510,645 537,632 C555,620 565,605 574,600 C595,585 615,566 648,564 C665,563 680,568 695,568 C720,566 760,550 779,544 C800,535 815,522 827,514 L827,470 L960,470 L956,537 C975,546 1000,553 1022,558 C1035,560 1045,557 1060,552 C1070,550 1085,552 1097,556 C1120,566 1160,590 1178,610 C1195,622 1230,640 1259,651 C1280,665 1295,676 1304,681 C1330,690 1350,700 1370,706 C1390,718 1420,740 1436,762 L1436,832 C1410,822 1390,810 1370,803 C1340,795 1310,790 1296,784 C1285,778 1280,770 1274,766 C1250,755 1225,745 1204,736 C1180,725 1150,712 1130,706 C1123,703 1115,703 1113,706 C1108,720 1104,735 1105,747 C1103,770 1102,790 1100,806 C1096,820 1093,830 1089,840 C1084,855 1080,865 1078,873 C1075,890 1073,910 1072,926 L713,926 C707,900 702,890 700,882 C695,860 690,845 685,826 C678,805 672,790 667,782 C660,765 653,752 645,745 C635,738 628,734 622,735 C610,738 600,745 552,771 C530,785 505,795 482,804 C460,810 440,815 415,823 C395,833 380,845 363,856 C345,868 330,876 316,882 Z"/></clipPath><g clip-path="url(#bc)">
<path d="M300,900 C360,860 430,830 490,812 C560,790 600,752 625,742 L640,775 C590,790 540,820 480,838 C420,856 360,890 300,930 Z" fill="#7e5238" opacity="0.45" filter="url(#b12)"/>
<path d="M1450,845 C1400,825 1330,805 1296,792 C1260,770 1190,742 1125,715 L1118,745 C1200,770 1270,800 1300,815 C1350,830 1410,845 1450,860 Z" fill="#7e5238" opacity="0.4" filter="url(#b12)"/>
<ellipse cx="335" cy="830" rx="40" ry="50" fill="#8a5e44" opacity="0.35" filter="url(#b20)"/>
<ellipse cx="610" cy="640" rx="70" ry="45" transform="rotate(-30 610 640)" fill="#c49c80" opacity="0.55" filter="url(#b20)"/>
<ellipse cx="1150" cy="625" rx="65" ry="45" transform="rotate(30 1150 625)" fill="#c49c80" opacity="0.5" filter="url(#b20)"/>
<ellipse cx="470" cy="730" rx="80" ry="25" transform="rotate(-28 470 730)" fill="#c09478" opacity="0.4" filter="url(#b20)"/>
<ellipse cx="1320" cy="730" rx="80" ry="25" transform="rotate(22 1320 730)" fill="#c09478" opacity="0.35" filter="url(#b20)"/>
<path d="M540,700 C570,690 600,700 640,720" fill="none" stroke="#8a5a40" stroke-width="10" opacity="0.25" filter="url(#b6)"/>
<ellipse cx="1368" cy="750" rx="32" ry="20" transform="rotate(25 1368 750)" fill="#7e5038" opacity="0.35" filter="url(#b12)"/>
<ellipse cx="1205" cy="634" rx="26" ry="14" transform="rotate(25 1205 634)" fill="#7e5038" opacity="0.3" filter="url(#b6)"/>
<path d="M827,480 L870,520 C880,560 870,600 850,620 L800,600 L827,520 Z" fill="#8a5c44" opacity="0.3" filter="url(#b12)"/>
<path d="M880,540 C900,570 930,575 960,545 L965,600 C930,620 900,610 880,590 Z" fill="#94664c" opacity="0.3" filter="url(#b12)"/>
<path d="M960,545 C980,570 1010,600 1040,620" fill="none" stroke="#8a5a42" stroke-width="14" opacity="0.3" filter="url(#b6)"/>
<path d="M790,560 C830,600 880,640 905,640 C940,640 990,600 1030,575 L1000,560 C960,580 930,600 905,600 C880,600 840,570 827,540 Z" fill="#7a4c36" opacity="0.18" filter="url(#b12)"/>
<path d="M826,520 C860,545 890,562 914,562 C935,562 950,552 960,542" fill="none" stroke="#6e4432" stroke-width="14" opacity="0.3" filter="url(#b6)"/>
<path d="M850,560 C860,600 870,630 880,655" fill="none" stroke="#c09a80" stroke-width="6" opacity="0.15" filter="url(#b6)"/>
<ellipse cx="770" cy="585" rx="55" ry="22" transform="rotate(-15 770 585)" fill="#8e6248" opacity="0.35" filter="url(#b12)"/>
<ellipse cx="1040" cy="595" rx="50" ry="22" transform="rotate(15 1040 595)" fill="#8e6248" opacity="0.35" filter="url(#b12)"/>
<path d="M675,605 C730,608 810,625 890,660" fill="none" stroke="#c59e82" stroke-width="8" opacity="0.22" filter="url(#b6)"/>
<path d="M680,620 C735,625 815,642 892,675" fill="none" stroke="#8e5e44" stroke-width="7" opacity="0.3" filter="url(#b6)"/>
<path d="M1105,595 C1050,600 985,620 915,660" fill="none" stroke="#c59e82" stroke-width="8" opacity="0.22" filter="url(#b6)"/>
<path d="M1100,615 C1045,620 985,640 915,675" fill="none" stroke="#8e5e44" stroke-width="7" opacity="0.3" filter="url(#b6)"/>
<path d="M885,630 L903,672 L921,630" fill="#7e5038" opacity="0.4" filter="url(#b6)"/>
<path d="M903,680 C908,740 918,800 927,925" fill="none" stroke="#9a6a50" stroke-width="8" opacity="0.25" filter="url(#b6)"/>
<ellipse cx="915" cy="795" rx="150" ry="70" fill="#8e5e44" opacity="0.2" filter="url(#b20)"/>
<ellipse cx="912" cy="770" rx="30" ry="70" fill="#8e5a40" opacity="0.3" filter="url(#b12)"/>
<ellipse cx="790" cy="700" rx="75" ry="40" fill="#c0967a" opacity="0.4" filter="url(#b20)"/>
<ellipse cx="1010" cy="690" rx="70" ry="38" fill="#c0967a" opacity="0.35" filter="url(#b20)"/>
<path d="M735,885 C790,910 860,905 892,885" fill="none" stroke="#83553c" stroke-width="8" opacity="0.35" filter="url(#b6)"/>
<path d="M915,872 C975,892 1040,885 1075,862" fill="none" stroke="#83553c" stroke-width="8" opacity="0.35" filter="url(#b6)"/>
<path d="M745,905 C800,925 870,925 900,910 L900,930 L740,930 Z" fill="#c09478" opacity="0.3" filter="url(#b6)"/>
<ellipse cx="655" cy="770" rx="25" ry="60" fill="#7a4c34" opacity="0.4" filter="url(#b12)"/>
<ellipse cx="1110" cy="740" rx="20" ry="55" fill="#7a4c34" opacity="0.35" filter="url(#b12)"/>
<path d="M892,816 c1.1,-6.4 2.1,-0.4 3.2,-2.1 M831,786 c-3.1,-2.9 -6.2,3.1 -9.3,0.0 M1008,805 c-3.0,-6.3 -6.0,-0.3 -9.0,-2.0 M765,831 c-2.6,-5.2 -5.3,0.8 -7.9,-1.3 M763,722 c0.5,-3.8 1.1,2.2 1.6,-0.5 M942,793 c2.5,-4.7 5.0,1.3 7.5,-1.0 M943,812 c-1.3,-0.5 -2.7,5.5 -4.0,1.5 M965,845 c1.0,-4.0 1.9,2.0 2.9,-0.6 M884,791 c-3.1,-5.4 -6.2,0.6 -9.2,-1.4 M875,755 c-1.3,-2.3 -2.6,3.7 -3.9,0.4 M842,805 c2.1,-1.4 4.1,4.6 6.2,1.0 M919,850 c0.2,0.0 0.4,6.0 0.5,1.8 M905,761 c3.4,-6.1 6.7,-0.1 10.1,-1.8 M783,830 c-2.4,-3.1 -4.9,2.9 -7.3,-0.1 M1045,810 c1.9,-2.4 3.7,3.6 5.6,0.4 M970,769 c1.4,-2.2 2.7,3.8 4.1,0.5 M828,773 c2.4,0.6 4.8,6.6 7.1,2.1 M784,805 c-3.1,-1.4 -6.2,4.6 -9.2,1.0 M947,764 c-0.8,-1.7 -1.6,4.3 -2.4,0.8 M1014,802 c-2.3,-6.1 -4.6,-0.1 -7.0,-1.8 M1058,821 c-2.6,-5.0 -5.2,1.0 -7.8,-1.2 M774,849 c-2.9,-3.4 -5.9,2.6 -8.8,-0.2 M737,768 c2.2,-0.1 4.5,5.9 6.7,1.7 M898,838 c-1.0,0.1 -2.0,6.1 -3.0,1.8 M965,789 c-2.3,-5.1 -4.5,0.9 -6.8,-1.3 M926,843 c0.6,-4.9 1.2,1.1 1.9,-1.1 M1009,796 c-0.9,-2.5 -1.8,3.5 -2.7,0.3 M1047,776 c0.1,-2.1 0.2,3.9 0.3,0.6 M902,782 c2.8,-0.8 5.6,5.2 8.4,1.3 M1028,742 c-0.8,-3.8 -1.5,2.2 -2.3,-0.5 M1017,831 c-3.1,-6.5 -6.1,-0.5 -9.2,-2.1 M929,819 c-1.1,-6.6 -2.2,-0.6 -3.4,-2.1 M967,795 c-2.8,-4.1 -5.6,1.9 -8.4,-0.7 M877,779 c-1.7,-4.2 -3.5,1.8 -5.2,-0.7 M885,811 c2.4,0.9 4.9,6.9 7.3,2.4 M814,805 c-2.9,-6.2 -5.8,-0.2 -8.7,-1.9 M876,823 c2.3,-5.7 4.6,0.3 6.9,-1.6 M865,791 c0.3,-6.8 0.6,-0.8 0.9,-2.3 M1006,746 c-1.7,-4.1 -3.3,1.9 -5.0,-0.6 M992,858 c0.2,-0.8 0.5,5.2 0.7,1.3 M884,821 c2.2,0.9 4.4,6.9 6.5,2.3 M1013,734 c2.2,-1.1 4.5,4.9 6.7,1.2 M931,845 c-1.0,-6.8 -2.0,-0.8 -3.0,-2.3 M987,801 c-1.7,-1.5 -3.4,4.5 -5.1,0.9 M1009,783 c3.1,0.9 6.1,6.9 9.2,2.3 M997,784 c-2.0,-5.2 -3.9,0.8 -5.9,-1.3 M935,822 c0.9,0.2 1.7,6.2 2.6,1.9 M970,755 c1.1,-0.6 2.1,5.4 3.2,1.4 M1029,826 c2.9,-0.7 5.7,5.3 8.6,1.4 M915,747 c-2.3,-0.7 -4.5,5.3 -6.8,1.4 M835,861 c3.3,-3.8 6.6,2.2 9.9,-0.5 M738,854 c1.6,-5.6 3.1,0.4 4.7,-1.6 M951,812 c2.8,-0.5 5.7,5.5 8.5,1.5 M1017,857 c3.4,-1.7 6.7,4.3 10.1,0.8 M848,838 c-2.6,-6.9 -5.2,-0.9 -7.7,-2.3 M1043,784 c0.2,0.5 0.4,6.5 0.6,2.1 M748,829 c2.3,-5.3 4.6,0.7 6.8,-1.4 M914,830 c-1.8,-2.3 -3.6,3.7 -5.4,0.4 M909,839 c-2.6,0.3 -5.2,6.3 -7.7,2.0 M855,832 c0.6,0.2 1.2,6.2 1.8,1.9 M738,840 c0.0,-2.7 0.0,3.3 0.0,0.2 M898,794 c-0.4,-5.5 -0.8,0.5 -1.3,-1.5 M963,837 c1.6,-2.5 3.2,3.5 4.7,0.3 M865,840 c0.4,-0.7 0.8,5.3 1.2,1.4 M1006,828 c-1.8,-4.8 -3.5,1.2 -5.3,-1.1 M930,745 c0.4,-0.9 0.9,5.1 1.3,1.2 M998,771 c0.8,-3.0 1.6,3.0 2.4,0.0 M777,790 c-0.3,-2.7 -0.7,3.3 -1.0,0.2 M980,783 c0.4,0.5 0.8,6.5 1.2,2.1 M941,776 c-2.6,-3.5 -5.3,2.5 -7.9,-0.3 M975,809 c-3.0,-1.6 -6.0,4.4 -9.0,0.8 M996,850 c1.1,-5.9 2.2,0.1 3.4,-1.7 M957,897 c-0.7,-3.1 -1.4,2.9 -2.1,-0.1 M966,833 c0.1,-4.3 0.2,1.7 0.3,-0.8 M941,830 c1.6,-6.8 3.1,-0.8 4.7,-2.3 M824,780 c-3.4,-4.3 -6.7,1.7 -10.1,-0.8 M838,760 c-3.0,0.9 -6.1,6.9 -9.1,2.3 M971,815 c-3.2,-0.8 -6.4,5.2 -9.7,1.3 M909,817 c-0.5,0.3 -1.1,6.3 -1.6,2.0 M944,766 c-2.5,0.4 -4.9,6.4 -7.4,2.0 M789,767 c-2.9,-6.5 -5.7,-0.5 -8.6,-2.1 M879,754 c-3.0,0.5 -6.0,6.5 -9.0,2.1 M808,739 c-2.9,-0.2 -5.8,5.8 -8.7,1.7 M837,806 c0.4,0.4 0.7,6.4 1.1,2.0 M910,817 c0.2,-5.1 0.4,0.9 0.6,-1.3 M956,811 c-3.1,-5.4 -6.3,0.6 -9.4,-1.4 M886,828 c1.8,-4.7 3.6,1.3 5.4,-1.0 M859,795 c-1.1,-6.9 -2.1,-0.9 -3.2,-2.3 M915,802 c1.6,-2.6 3.3,3.4 4.9,0.2 M953,839 c3.0,-6.1 6.1,-0.1 9.1,-1.9 M955,754 c-0.0,-0.3 -0.1,5.7 -0.1,1.6 M831,826 c1.3,0.9 2.6,6.9 3.9,2.3 M821,861 c1.4,-1.9 2.9,4.1 4.3,0.7 M846,817 c-3.1,-6.0 -6.2,0.0 -9.4,-1.8 M1049,825 c-1.7,-5.7 -3.4,0.3 -5.1,-1.6 M1064,836 c2.6,-1.6 5.2,4.4 7.8,0.8 M902,826 c-1.4,-3.3 -2.9,2.7 -4.3,-0.2 M969,833 c-1.7,0.7 -3.3,6.7 -5.0,2.2 M1027,786 c-1.8,0.7 -3.6,6.7 -5.4,2.2 M884,832 c-3.5,-3.9 -7.0,2.1 -10.5,-0.6 M810,803 c-2.1,-3.0 -4.2,3.0 -6.3,0.0 M985,796 c-2.9,-3.8 -5.7,2.2 -8.6,-0.5 M934,797 c-1.4,-5.1 -2.7,0.9 -4.1,-1.3 M820,769 c1.8,-1.7 3.5,4.3 5.3,0.8 M854,819 c3.4,-5.8 6.8,0.2 10.2,-1.7 M894,735 c-3.2,-0.3 -6.4,5.7 -9.6,1.6 M1013,758 c1.6,-0.5 3.3,5.5 4.9,1.5 M985,834 c0.0,-0.3 0.1,5.7 0.1,1.6 M972,721 c0.6,0.1 1.2,6.1 1.8,1.9 M858,736 c-1.9,-6.8 -3.8,-0.8 -5.7,-2.3 M972,824 c-2.8,-0.3 -5.5,5.7 -8.3,1.6 M797,774 c0.9,-1.6 1.8,4.4 2.7,0.9 M908,795 c2.1,-1.0 4.2,5.0 6.3,1.2 M804,794 c1.1,-6.5 2.2,-0.5 3.3,-2.1 M909,763 c-3.0,-4.9 -6.0,1.1 -8.9,-1.1 M907,767 c1.7,0.8 3.4,6.8 5.0,2.3 M827,797 c-0.1,-1.5 -0.3,4.5 -0.4,0.9 M928,737 c1.0,-6.4 2.0,-0.4 3.0,-2.0 M956,821 c1.7,-4.6 3.4,1.4 5.1,-0.9 M902,792 c-3.1,-4.8 -6.2,1.2 -9.2,-1.1 M850,738 c1.2,-4.7 2.5,1.3 3.7,-1.0 M815,790 c-0.2,-6.1 -0.5,-0.1 -0.7,-1.8 M962,778 c3.3,0.5 6.7,6.5 10.0,2.1 M1014,800 c2.2,0.7 4.5,6.7 6.7,2.2 M847,805 c-2.0,0.6 -4.1,6.6 -6.1,2.1 M944,849 c-2.5,-2.8 -5.0,3.2 -7.5,0.1 M961,788 c2.2,-2.9 4.5,3.1 6.7,0.0 M1021,752 c-1.9,0.2 -3.8,6.2 -5.6,1.9 M895,796 c-3.5,-3.1 -6.9,2.9 -10.4,-0.0 M842,806 c-2.5,-4.2 -5.0,1.8 -7.5,-0.7 M845,869 c-3.5,-1.0 -7.0,5.0 -10.5,1.2 M939,777 c3.0,-1.3 6.0,4.7 9.0,1.0 M976,775 c-0.9,-3.9 -1.8,2.1 -2.7,-0.5 M1035,795 c-1.0,-3.6 -2.0,2.4 -2.9,-0.3 M911,808 c-2.8,-0.3 -5.6,5.7 -8.4,1.6 M868,891 c-1.8,-4.9 -3.5,1.1 -5.3,-1.1 M857,793 c-0.9,0.6 -1.8,6.6 -2.7,2.2 M1038,744 c0.9,0.3 1.8,6.3 2.7,2.0 M1021,776 c1.5,-6.6 3.1,-0.6 4.6,-2.2 M904,749 c1.8,-1.8 3.5,4.2 5.3,0.7 M909,808 c3.0,-6.0 6.0,0.0 9.0,-1.8 M834,802 c-1.4,-1.1 -2.8,4.9 -4.2,1.1 M984,790 c1.1,-4.6 2.2,1.4 3.3,-1.0 M831,780 c-2.3,-5.7 -4.7,0.3 -7.0,-1.6 M966,883 c-0.0,-5.2 -0.0,0.8 -0.1,-1.3 M868,802 c-2.2,-6.3 -4.3,-0.3 -6.5,-2.0 M894,810 c-1.8,-4.9 -3.7,1.1 -5.5,-1.2 M745,758 c1.7,-3.7 3.5,2.3 5.2,-0.4 M821,821 c-0.9,-4.3 -1.7,1.7 -2.6,-0.8 M982,808 c3.3,-6.0 6.5,0.0 9.8,-1.8 M788,794 c2.5,-5.3 5.1,0.7 7.6,-1.4 M906,826 c-0.7,-3.4 -1.4,2.6 -2.1,-0.3 M928,789 c-3.3,-1.3 -6.5,4.7 -9.8,1.0 M996,766 c0.6,-7.0 1.2,-1.0 1.8,-2.4 M755,856 c2.3,-0.2 4.6,5.8 6.8,1.7 M982,789 c-2.7,-5.8 -5.5,0.2 -8.2,-1.7 M780,786 c3.1,-1.2 6.2,4.8 9.3,1.1 M823,738 c-0.3,-2.6 -0.6,3.4 -0.9,0.2 M1067,813 c-1.9,0.4 -3.7,6.4 -5.6,2.0 M868,767 c-2.6,-5.0 -5.2,1.0 -7.8,-1.2 M824,746 c-2.7,-6.4 -5.4,-0.4 -8.1,-2.1 M797,787 c-0.8,-5.2 -1.6,0.8 -2.4,-1.3 M904,791 c-1.4,-3.3 -2.8,2.7 -4.2,-0.2 M1040,780 c2.7,-3.2 5.4,2.8 8.1,-0.1 M921,826 c3.2,-1.4 6.4,4.6 9.7,1.0 M908,803 c-0.0,-1.6 -0.0,4.4 -0.0,0.8 M854,811 c1.2,0.4 2.3,6.4 3.5,2.0 M918,806 c-1.1,-3.6 -2.3,2.4 -3.4,-0.4 M890,770 c2.1,-1.1 4.2,4.9 6.2,1.1 M854,794 c3.3,-4.5 6.6,1.5 9.9,-0.9 M943,767 c-1.9,-0.9 -3.9,5.1 -5.8,1.3 M853,894 c-0.0,-5.5 -0.1,0.5 -0.1,-1.5 M931,838 c1.2,0.6 2.3,6.6 3.5,2.2 M970,828 c-2.0,0.8 -4.0,6.8 -6.0,2.3 M933,806 c-3.1,-3.9 -6.2,2.1 -9.2,-0.5 M1065,743 c1.6,1.0 3.3,7.0 4.9,2.4 M988,779 c-2.2,0.5 -4.4,6.5 -6.6,2.1 M914,784 c1.2,-4.0 2.3,2.0 3.5,-0.6 M858,822 c-2.3,-7.0 -4.6,-1.0 -6.9,-2.4 M899,833 c3.2,-6.0 6.4,-0.0 9.6,-1.8 M975,789 c-1.0,-0.4 -2.0,5.6 -3.0,1.5 M957,755 c-3.2,-3.2 -6.3,2.8 -9.5,-0.1 M774,863 c-2.1,-4.1 -4.3,1.9 -6.4,-0.7 M933,789 c-0.6,-0.5 -1.2,5.5 -1.9,1.5 M918,783 c-3.3,-6.5 -6.5,-0.5 -9.8,-2.1 M976,779 c1.7,0.2 3.5,6.2 5.2,1.9 M877,823 c3.2,-2.1 6.4,3.9 9.6,0.6 M904,862 c-1.3,-4.8 -2.6,1.2 -3.9,-1.1 M1066,797 c2.9,-1.9 5.8,4.1 8.7,0.6 M934,792 c-1.9,-3.2 -3.7,2.8 -5.6,-0.1 M863,816 c-0.5,-3.1 -1.0,2.9 -1.5,-0.0 M966,783 c2.1,-1.1 4.2,4.9 6.4,1.1 M983,730 c0.8,-4.4 1.5,1.6 2.3,-0.8 M879,831 c2.0,-6.4 4.0,-0.4 5.9,-2.0 M964,861 c-1.8,-6.5 -3.5,-0.5 -5.3,-2.1 M1027,806 c-1.2,0.8 -2.4,6.8 -3.7,2.3 M911,813 c-2.8,-3.0 -5.7,3.0 -8.5,-0.0 M891,751 c-1.9,-3.7 -3.7,2.3 -5.6,-0.4 M817,752 c1.7,-0.2 3.5,5.8 5.2,1.7 M892,777 c2.4,-4.6 4.8,1.4 7.2,-1.0 M836,778 c1.7,-5.4 3.3,0.6 5.0,-1.4 M916,827 c-2.4,0.1 -4.9,6.1 -7.3,1.8 M844,777 c-0.7,0.9 -1.5,6.9 -2.2,2.4 M850,794 c2.2,-1.8 4.3,4.2 6.5,0.7 M957,794 c-0.2,-0.4 -0.4,5.6 -0.5,1.5 M1023,717 c-3.2,-4.7 -6.4,1.3 -9.7,-1.0 M958,814 c3.3,-2.3 6.6,3.7 9.9,0.4 M994,778 c2.6,-3.4 5.1,2.6 7.7,-0.2 M905,868 c3.1,-6.2 6.2,-0.2 9.4,-1.9 M812,762 c-2.0,-4.1 -4.0,1.9 -5.9,-0.6 M953,817 c-1.7,-2.2 -3.4,3.8 -5.1,0.5 M880,772 c-3.4,-4.4 -6.8,1.6 -10.3,-0.8 M890,771 c-1.3,-5.4 -2.6,0.6 -3.9,-1.4 M947,744 c-3.1,-6.2 -6.1,-0.2 -9.2,-1.9 M825,827 c1.0,-6.3 1.9,-0.3 2.9,-2.0 M987,850 c-0.6,-4.7 -1.3,1.3 -1.9,-1.0 M836,892 c-1.3,-2.5 -2.6,3.5 -3.9,0.3 M857,829 c2.5,1.0 5.1,7.0 7.6,2.4 M876,816 c1.6,-5.4 3.2,0.6 4.8,-1.4 M767,831 c-0.7,0.1 -1.3,6.1 -2.0,1.8 M863,801 c-3.4,-2.6 -6.8,3.4 -10.2,0.2 M790,724 c-2.9,-2.0 -5.8,4.0 -8.6,0.6 M842,831 c-2.5,-4.7 -5.0,1.3 -7.4,-1.0 M996,826 c2.1,0.7 4.3,6.7 6.4,2.2 M930,816 c3.1,0.8 6.2,6.8 9.3,2.3 M885,797 c3.0,-3.9 6.0,2.1 8.9,-0.5 M1018,762 c2.3,-5.7 4.5,0.3 6.8,-1.6 M929,766 c-0.7,-0.2 -1.3,5.8 -2.0,1.7 M942,772 c-2.0,-3.8 -3.9,2.2 -5.9,-0.5 M827,790 c-2.6,-5.0 -5.3,1.0 -7.9,-1.2 M1027,809 c1.8,-6.7 3.6,-0.7 5.4,-2.2 M939,777 c0.7,-2.6 1.4,3.4 2.1,0.2 M861,769 c-0.6,-2.3 -1.1,3.7 -1.7,0.4 M797,823 c-0.4,-3.5 -0.7,2.5 -1.1,-0.3 M1039,804 c-0.1,-5.1 -0.1,0.9 -0.2,-1.3 M928,722 c-0.3,-5.6 -0.6,0.4 -0.9,-1.5 M873,798 c-2.6,-3.6 -5.2,2.4 -7.8,-0.3 M997,820 c0.1,-6.7 0.1,-0.7 0.2,-2.2 M891,782 c1.6,-0.8 3.3,5.2 4.9,1.3 M885,794 c0.0,-4.0 0.1,2.0 0.1,-0.6 M961,788 c2.5,1.0 5.0,7.0 7.5,2.4 M896,718 c-2.1,0.9 -4.3,6.9 -6.4,2.3 M962,782 c2.0,0.4 4.0,6.4 6.1,2.1 M992,811 c1.8,-5.7 3.6,0.3 5.4,-1.6 M972,775 c2.2,-5.9 4.4,0.1 6.6,-1.7 M933,827 c0.0,-4.4 0.1,1.6 0.1,-0.9 M971,801 c-2.4,0.5 -4.7,6.5 -7.1,2.1 M992,859 c-2.7,-2.8 -5.4,3.2 -8.1,0.1 M859,765 c2.6,-2.6 5.2,3.4 7.8,0.3 M752,753 c-2.8,0.9 -5.5,6.9 -8.3,2.4 M853,764 c2.1,-4.9 4.2,1.1 6.3,-1.1 M1033,792 c-1.0,-0.9 -2.0,5.1 -2.9,1.3 M863,804 c1.7,-6.6 3.4,-0.6 5.1,-2.2 M944,766 c1.0,0.9 1.9,6.9 2.9,2.3 M801,763 c-1.3,-7.0 -2.6,-1.0 -3.9,-2.4 M965,800 c0.8,-3.5 1.6,2.5 2.4,-0.3 M959,817 c1.1,-6.8 2.1,-0.8 3.2,-2.3 M999,796 c-2.8,-4.1 -5.5,1.9 -8.3,-0.7 M934,850 c0.6,-5.4 1.2,0.6 1.9,-1.4 M842,762 c-2.6,0.5 -5.1,6.5 -7.7,2.1 M917,819 c-2.8,-1.9 -5.7,4.1 -8.5,0.7 M1023,742 c-0.7,-4.9 -1.4,1.1 -2.1,-1.1 M1044,799 c0.4,-4.2 0.9,1.8 1.3,-0.7 M856,759 c3.1,-1.1 6.1,4.9 9.2,1.1 M917,886 c-3.2,-2.7 -6.4,3.3 -9.6,0.2 M860,812 c-3.1,-0.8 -6.2,5.2 -9.3,1.3 M1029,799 c3.1,-5.9 6.2,0.1 9.3,-1.7 M953,850 c0.0,-1.9 0.1,4.1 0.1,0.7 M937,771 c-1.3,-4.6 -2.7,1.4 -4.0,-1.0 M944,730 c-3.5,-0.2 -6.9,5.8 -10.4,1.7 M912,748 c1.7,-3.4 3.4,2.6 5.1,-0.2 M921,815 c-1.9,-6.7 -3.7,-0.7 -5.6,-2.2 M838,855 c1.4,-0.2 2.7,5.8 4.1,1.7 M898,763 c0.4,-3.5 0.8,2.5 1.1,-0.3 M941,745 c-1.6,-1.9 -3.3,4.1 -4.9,0.7 M976,789 c2.7,-6.9 5.3,-0.9 8.0,-2.3 M911,826 c1.7,0.6 3.4,6.6 5.1,2.1 M913,758 c2.7,-4.4 5.3,1.6 8.0,-0.8 M928,886 c0.9,-1.5 1.8,4.5 2.7,0.9 M746,810 c1.4,-0.1 2.8,5.9 4.1,1.7 M782,821 c0.5,-4.5 1.0,1.5 1.5,-0.9 M945,852 c-3.0,0.3 -5.9,6.3 -8.9,2.0 M928,803 c-2.8,0.4 -5.5,6.4 -8.3,2.1 M887,814 c-3.3,-6.7 -6.6,-0.7 -9.9,-2.2 M870,739 c1.4,-1.1 2.8,4.9 4.1,1.1 M1025,818 c-1.0,-0.5 -1.9,5.5 -2.9,1.5 M963,813 c-2.7,-6.7 -5.4,-0.7 -8.1,-2.2 M1010,732 c0.9,-0.4 1.9,5.6 2.8,1.6 M865,770 c-2.8,-6.2 -5.6,-0.2 -8.4,-1.9 M918,767 c-1.3,-3.6 -2.5,2.4 -3.8,-0.4 M984,799 c-1.5,-1.3 -3.0,4.7 -4.6,1.0 M862,822 c3.2,-3.0 6.5,3.0 9.7,0.0 M989,748 c-3.3,-3.7 -6.6,2.3 -9.8,-0.4 M772,823 c-1.1,-1.4 -2.1,4.6 -3.2,1.0 M854,788 c2.5,-6.3 5.1,-0.3 7.6,-2.0 M938,772 c-3.5,-5.4 -7.0,0.6 -10.5,-1.4 M1020,796 c-0.1,-0.6 -0.1,5.4 -0.2,1.4 M957,840 c-1.1,-0.3 -2.1,5.7 -3.2,1.6 M901,896 c-1.5,-5.3 -3.0,0.7 -4.5,-1.4 M882,748 c-2.7,-1.9 -5.5,4.1 -8.2,0.7 M1053,831 c1.4,-0.7 2.8,5.3 4.1,1.4 M856,767 c-0.7,-3.8 -1.4,2.2 -2.1,-0.5 M945,784 c2.7,-6.8 5.4,-0.8 8.2,-2.3 M934,827 c2.8,-3.0 5.6,3.0 8.4,0.0 M779,855 c-1.9,-3.3 -3.7,2.7 -5.6,-0.2 M767,781 c1.8,-1.8 3.5,4.2 5.3,0.7 M869,825 c-2.4,-0.3 -4.8,5.7 -7.2,1.6 M837,736 c-2.3,-3.5 -4.6,2.5 -6.9,-0.3 M932,740 c-2.6,-3.3 -5.2,2.7 -7.9,-0.2 M965,775 c-2.2,-4.6 -4.3,1.4 -6.5,-1.0 M865,718 c-2.4,-5.8 -4.8,0.2 -7.3,-1.7 M916,832 c0.2,-5.7 0.3,0.3 0.5,-1.6 M888,819 c3.3,-1.2 6.7,4.8 10.0,1.1 M986,820 c3.4,-0.6 6.8,5.4 10.2,1.4 M905,750 c-2.1,-1.9 -4.3,4.1 -6.4,0.7 M963,813 c-0.8,-6.7 -1.6,-0.7 -2.3,-2.2 M787,839 c1.4,-3.0 2.7,3.0 4.1,0.0 M847,760 c-2.5,-2.2 -5.0,3.8 -7.5,0.5 M793,834 c2.9,-3.6 5.7,2.4 8.6,-0.3 M781,764 c-0.6,-5.2 -1.1,0.8 -1.7,-1.3 M936,731 c2.5,-1.6 4.9,4.4 7.4,0.9 M853,759 c-1.3,-2.0 -2.6,4.0 -3.9,0.6 M992,820 c2.0,-1.3 4.0,4.7 5.9,1.0 M868,772 c-0.5,-3.4 -1.1,2.6 -1.6,-0.2 M848,765 c1.2,0.4 2.5,6.4 3.7,2.1 M969,851 c1.9,-3.9 3.9,2.1 5.8,-0.5 M1024,807 c-2.4,-0.7 -4.7,5.3 -7.1,1.4 M1016,776 c-2.8,-2.4 -5.6,3.6 -8.4,0.4 M777,778 c0.1,-1.9 0.2,4.1 0.3,0.7 M967,750 c-0.6,0.6 -1.3,6.6 -1.9,2.2 M949,857 c-0.8,-0.9 -1.5,5.1 -2.3,1.3 M896,806 c-1.6,-3.8 -3.2,2.2 -4.7,-0.5 M1008,799 c-0.6,-1.4 -1.1,4.6 -1.7,1.0 M873,821 c-1.9,-1.1 -3.9,4.9 -5.8,1.2 M1017,776 c-2.0,-0.6 -3.9,5.4 -5.9,1.4 M867,813 c-2.6,-0.8 -5.2,5.2 -7.8,1.3 M962,740 c-0.2,-2.5 -0.4,3.5 -0.6,0.3 M950,902 c-1.0,-1.9 -2.1,4.1 -3.1,0.7 M984,725 c-0.2,-4.6 -0.4,1.4 -0.7,-1.0 M871,789 c2.3,-4.2 4.7,1.8 7.0,-0.7 M957,768 c-0.9,-5.0 -1.7,1.0 -2.6,-1.2 M863,807 c-3.5,-1.2 -7.0,4.8 -10.4,1.1 M902,826 c-1.4,-3.2 -2.8,2.8 -4.2,-0.1 M800,821 c1.1,-4.1 2.2,1.9 3.3,-0.7 M1074,759 c-3.1,-0.4 -6.2,5.6 -9.3,1.6 M1046,754 c-2.5,-0.3 -5.0,5.7 -7.6,1.6 M905,790 c-3.4,0.6 -6.8,6.6 -10.3,2.2 M877,769 c-2.8,-5.9 -5.6,0.1 -8.4,-1.7 M931,867 c-1.1,-5.8 -2.1,0.2 -3.2,-1.7 M1046,753 c-2.3,0.1 -4.6,6.1 -7.0,1.9 M793,749 c1.2,0.2 2.4,6.2 3.5,1.9 M956,717 c-2.1,-1.5 -4.2,4.5 -6.4,0.9 M770,782 c-0.4,0.1 -0.9,6.1 -1.3,1.8 M849,784 c-1.9,-5.9 -3.7,0.1 -5.6,-1.7 M884,796 c-0.2,-5.8 -0.5,0.2 -0.7,-1.7 M809,798 c0.3,-0.1 0.6,5.9 0.8,1.7 M802,806 c1.2,-0.3 2.3,5.7 3.5,1.6 M849,826 c3.2,-6.4 6.4,-0.4 9.7,-2.0 M832,750 c-3.3,-2.1 -6.6,3.9 -9.9,0.5 M792,899 c0.1,-3.1 0.1,2.9 0.2,-0.1 M934,788 c1.5,-2.0 3.1,4.0 4.6,0.6 M820,866 c-0.9,-3.2 -1.9,2.8 -2.8,-0.1 M763,783 c-2.0,-3.5 -4.0,2.5 -6.1,-0.3 M814,820 c2.3,-4.7 4.6,1.3 6.9,-1.0 M958,757 c0.0,-4.8 0.1,1.2 0.1,-1.1 M825,734 c-1.2,-4.5 -2.4,1.5 -3.6,-0.9 M879,848 c0.9,-0.7 1.9,5.3 2.8,1.4 M1055,812 c2.7,-2.6 5.4,3.4 8.1,0.2 M987,806 c-3.5,-5.5 -6.9,0.5 -10.4,-1.5 M1024,768 c1.1,-0.7 2.2,5.3 3.3,1.4 M1019,764 c0.8,-2.0 1.6,4.0 2.5,0.6 M875,742 c1.3,-5.3 2.5,0.7 3.8,-1.4 M865,755 c1.8,-6.2 3.7,-0.2 5.5,-1.9 M925,805 c1.9,0.3 3.8,6.3 5.8,2.0 M867,762 c2.3,-0.7 4.5,5.3 6.8,1.4 M851,783 c-1.4,-3.6 -2.8,2.4 -4.2,-0.4 M875,836 c1.0,0.5 2.0,6.5 3.0,2.1 M1025,813 c-3.2,-6.0 -6.4,-0.0 -9.7,-1.8 M959,744 c2.9,-3.4 5.9,2.6 8.8,-0.3 M1004,799 c0.6,0.5 1.3,6.5 1.9,2.1 M1016,789 c-0.6,-6.2 -1.2,-0.2 -1.8,-1.9 M877,772 c-2.4,-6.9 -4.9,-0.9 -7.3,-2.3 M1052,797 c-2.6,0.7 -5.3,6.7 -7.9,2.2 M1069,840 c-2.6,-6.9 -5.2,-0.9 -7.8,-2.3 M902,764 c1.6,-5.5 3.3,0.5 4.9,-1.5 M1063,817 c1.5,-0.2 3.0,5.8 4.5,1.7 M910,778 c0.9,-1.3 1.8,4.7 2.7,1.0 M909,903 c1.5,-6.9 3.0,-0.9 4.6,-2.3 M1045,801 c2.2,-6.4 4.4,-0.4 6.7,-2.0 M861,858 c-2.3,-0.1 -4.7,5.9 -7.0,1.7 M884,796 c-0.9,-2.4 -1.9,3.6 -2.8,0.4 M790,819 c-2.5,-0.6 -5.0,5.4 -7.5,1.4 M830,841 c0.9,-3.7 1.8,2.3 2.7,-0.4 M796,844 c3.1,-0.7 6.2,5.3 9.3,1.4 M847,781 c-3.1,0.8 -6.2,6.8 -9.2,2.3 M866,720 c-1.2,-2.2 -2.4,3.8 -3.5,0.5 M853,774 c-0.5,0.1 -1.0,6.1 -1.5,1.9 M817,840 c0.7,0.2 1.4,6.2 2.1,1.9 M941,763 c-3.5,-4.9 -7.0,1.1 -10.5,-1.1 M809,821 c2.2,0.1 4.4,6.1 6.6,1.9 M983,717 c0.5,-4.8 1.0,1.2 1.5,-1.1 M1012,734 c1.3,0.3 2.6,6.3 3.9,2.0 M893,810 c0.4,-0.6 0.8,5.4 1.1,1.4 M961,862 c3.0,-5.1 6.0,0.9 9.1,-1.3 M809,756 c-0.2,-5.3 -0.5,0.7 -0.7,-1.4 M911,865 c2.0,-3.3 4.1,2.7 6.1,-0.2 M1054,835 c1.9,-5.1 3.8,0.9 5.7,-1.3 M747,752 c2.7,-2.8 5.4,3.2 8.1,0.1 M796,803 c-2.2,-5.5 -4.4,0.5 -6.5,-1.5 M974,854 c-1.0,-2.5 -1.9,3.5 -2.9,0.3 M826,824 c-2.5,-6.6 -4.9,-0.6 -7.4,-2.2 M1002,794 c-2.8,-1.9 -5.5,4.1 -8.3,0.6 M927,771 c0.7,-4.2 1.4,1.8 2.0,-0.7 M897,794 c-3.3,0.9 -6.5,6.9 -9.8,2.4 M984,759 c0.5,-4.9 0.9,1.1 1.4,-1.1 M932,751 c3.1,-0.9 6.3,5.1 9.4,1.3 M914,807 c-2.1,-5.6 -4.2,0.4 -6.3,-1.5 M940,802 c0.4,-0.0 0.8,6.0 1.2,1.8 M943,787 c0.7,-3.8 1.4,2.2 2.1,-0.5 M910,849 c1.0,0.7 2.0,6.7 3.0,2.2 M872,758 c-0.4,-5.7 -0.7,0.3 -1.1,-1.6 M919,807 c-1.7,-4.2 -3.4,1.8 -5.1,-0.7 M1075,743 c2.4,-6.6 4.7,-0.6 7.1,-2.2 M947,731 c1.0,0.9 2.1,6.9 3.1,2.3 M962,803 c1.8,0.5 3.6,6.5 5.4,2.1 M881,763 c0.6,-0.9 1.3,5.1 1.9,1.2 M978,818 c-1.7,-6.0 -3.4,-0.0 -5.1,-1.8 M861,798 c-1.8,-5.9 -3.7,0.1 -5.5,-1.7 M909,789 c1.5,-5.4 3.0,0.6 4.6,-1.5 M954,891 c2.6,0.1 5.1,6.1 7.7,1.9 M978,830 c-2.8,0.4 -5.6,6.4 -8.5,2.1 M984,746 c-0.3,-4.3 -0.7,1.7 -1.0,-0.8 M960,752 c0.9,-5.9 1.8,0.1 2.7,-1.7 M920,809 c1.5,-2.6 3.0,3.4 4.5,0.3 M1027,862 c-1.6,-3.7 -3.3,2.3 -4.9,-0.4 M955,823 c2.4,-4.3 4.8,1.7 7.1,-0.8 M967,837 c-1.3,0.2 -2.5,6.2 -3.8,1.9 M885,770 c-0.2,-4.7 -0.3,1.3 -0.5,-1.0 M912,823 c-1.0,0.9 -1.9,6.9 -2.9,2.4 M976,815 c2.8,-6.5 5.5,-0.5 8.3,-2.1 M904,760 c3.4,-6.9 6.7,-0.9 10.1,-2.3 M944,759 c-2.5,-7.0 -5.0,-1.0 -7.6,-2.4 M969,750 c-2.2,-3.5 -4.4,2.5 -6.6,-0.3 M969,780 c0.5,-5.9 1.0,0.1 1.5,-1.7 M981,860 c1.5,-5.4 3.0,0.6 4.4,-1.5 M949,804 c0.8,-3.0 1.5,3.0 2.3,-0.0 M906,823 c0.8,-1.3 1.6,4.7 2.4,1.0 M960,744 c-2.1,-6.5 -4.2,-0.5 -6.3,-2.1 M905,752 c1.6,-6.6 3.1,-0.6 4.7,-2.1 M945,760 c2.4,-0.1 4.8,5.9 7.2,1.7 M899,795 c2.9,-3.2 5.7,2.8 8.6,-0.1 M964,771 c-2.2,-0.3 -4.4,5.7 -6.6,1.6 M879,814 c-0.9,-2.2 -1.8,3.8 -2.7,0.5 M1024,796 c-0.4,-2.9 -0.8,3.1 -1.1,0.1 M1018,841 c2.2,-0.1 4.4,5.9 6.6,1.8 M854,855 c-0.8,-1.0 -1.7,5.0 -2.5,1.2 M1016,781 c0.1,-2.8 0.2,3.2 0.3,0.1 M897,793 c3.3,-5.2 6.5,0.8 9.8,-1.3 M932,813 c-1.7,-0.5 -3.5,5.5 -5.2,1.5 M955,799 c1.4,-5.4 2.8,0.6 4.2,-1.5 M1036,801 c0.5,-2.8 1.1,3.2 1.6,0.1 M903,776 c2.6,-1.3 5.2,4.7 7.8,1.0 M959,801 c-0.0,-3.0 -0.1,3.0 -0.1,0.0 M907,816 c-0.7,-5.9 -1.3,0.1 -2.0,-1.7 M765,749 c-2.5,-2.4 -4.9,3.6 -7.4,0.3 M914,770 c2.3,0.5 4.6,6.5 6.8,2.1 M843,823 c2.4,-2.8 4.8,3.2 7.1,0.1 M745,856 c1.9,-4.3 3.9,1.7 5.8,-0.8 M920,833 c-0.5,0.8 -0.9,6.8 -1.4,2.3 M984,720 c-3.1,-2.9 -6.3,3.1 -9.4,0.1 M915,839 c0.9,-4.1 1.9,1.9 2.8,-0.7 M882,792 c-0.5,-3.0 -0.9,3.0 -1.4,0.0 M964,798 c3.3,-0.8 6.6,5.2 9.9,1.3 M1033,772 c2.2,0.1 4.3,6.1 6.5,1.8 M933,788 c1.0,-4.9 2.0,1.1 3.0,-1.1 M884,765 c0.3,0.4 0.6,6.4 0.9,2.0 M866,773 c0.1,-3.5 0.3,2.5 0.4,-0.3 M986,784 c-1.4,-1.8 -2.7,4.2 -4.1,0.7 M1003,834 c3.2,-2.9 6.4,3.1 9.6,0.1 M903,842 c0.2,-5.8 0.5,0.2 0.7,-1.7 M949,811 c-1.4,-3.7 -2.9,2.3 -4.3,-0.4 M899,825 c-2.9,-2.6 -5.8,3.4 -8.7,0.2 M981,746 c0.5,-1.8 1.0,4.2 1.5,0.7 M958,858 c-0.3,-2.6 -0.5,3.4 -0.8,0.2 M838,764 c-1.3,-5.1 -2.7,0.9 -4.0,-1.2 M934,845 c-0.8,-2.3 -1.6,3.7 -2.5,0.4 M999,798 c2.5,-5.1 5.1,0.9 7.6,-1.3 M817,778 c-1.5,0.9 -3.0,6.9 -4.5,2.3 M871,864 c-2.4,-6.5 -4.8,-0.5 -7.2,-2.1 M982,762 c-3.1,-3.9 -6.1,2.1 -9.2,-0.5 M779,820 c-2.7,-5.2 -5.5,0.8 -8.2,-1.3 M1058,778 c-2.4,-4.3 -4.8,1.7 -7.3,-0.8 M834,845 c0.8,-0.2 1.6,5.8 2.4,1.7 M962,749 c1.7,-1.1 3.3,4.9 5.0,1.2 M921,747 c2.0,-1.3 4.0,4.7 6.0,1.0 M955,784 c2.6,-7.0 5.2,-1.0 7.8,-2.4 M927,740 c-0.0,0.7 -0.0,6.7 -0.0,2.2 M831,776 c2.0,-0.0 4.0,6.0 6.0,1.8 M846,769 c-0.3,-3.3 -0.7,2.7 -1.0,-0.2 M902,761 c-0.8,-2.6 -1.5,3.4 -2.3,0.3 M856,820 c2.0,-0.2 4.0,5.8 6.0,1.7 M817,795 c-2.2,-4.6 -4.4,1.4 -6.6,-0.9 M987,838 c0.6,-6.3 1.1,-0.3 1.7,-2.0 M985,777 c2.4,-0.3 4.8,5.7 7.2,1.6 M974,788 c-0.5,0.3 -1.0,6.3 -1.5,2.0 M943,796 c0.5,-3.0 0.9,3.0 1.4,-0.0 M1051,760 c0.3,1.0 0.5,7.0 0.8,2.4 M807,789 c1.3,-3.9 2.6,2.1 3.9,-0.5 M839,839 c-1.0,0.6 -2.1,6.6 -3.1,2.1 M866,749 c-2.8,-4.0 -5.6,2.0 -8.4,-0.6 M821,826 c0.5,0.0 1.0,6.0 1.6,1.8 M1016,784 c-0.4,-2.0 -0.8,4.0 -1.3,0.6 M998,794 c0.2,-0.5 0.4,5.5 0.6,1.5 M953,827 c3.3,-0.4 6.7,5.6 10.0,1.6 M872,793 c2.8,-1.5 5.5,4.5 8.3,0.9 M987,767 c-2.4,-4.7 -4.8,1.3 -7.2,-1.0 M809,791 c-2.2,-5.5 -4.4,0.5 -6.5,-1.5 M831,753 c-1.0,0.9 -2.1,6.9 -3.1,2.4 M898,786 c-0.6,-0.7 -1.2,5.3 -1.9,1.4 M867,855 c-3.5,-4.6 -6.9,1.4 -10.4,-0.9 M980,748 c1.2,-5.4 2.4,0.6 3.5,-1.5 M801,796 c-1.6,-1.8 -3.3,4.2 -4.9,0.7 M832,776 c-2.6,-5.7 -5.3,0.3 -7.9,-1.6 M918,775 c-2.8,-5.6 -5.6,0.4 -8.4,-1.6 M749,784 c0.8,-0.5 1.6,5.5 2.4,1.5 M928,798 c1.9,-4.4 3.8,1.6 5.7,-0.9 M897,757 c-2.3,-4.9 -4.6,1.1 -6.9,-1.1 M1073,848 c0.6,-4.2 1.2,1.8 1.7,-0.7 M831,808 c-3.1,0.1 -6.2,6.1 -9.4,1.9 M799,817 c-1.8,-6.6 -3.5,-0.6 -5.3,-2.2 M839,878 c2.2,-4.6 4.4,1.4 6.6,-0.9 M732,731 c-0.0,0.6 -0.1,6.6 -0.1,2.2 M919,837 c1.5,-5.2 3.1,0.8 4.6,-1.3 M848,875 c-0.1,-0.7 -0.2,5.3 -0.3,1.4 M917,821 c-1.0,-5.5 -2.0,0.5 -3.0,-1.5 M988,789 c0.4,-6.1 0.9,-0.1 1.3,-1.8 M828,786 c-0.7,-6.5 -1.4,-0.5 -2.0,-2.1 M1035,850 c-1.0,-5.0 -2.1,1.0 -3.1,-1.2 M942,827 c-1.8,-6.7 -3.7,-0.7 -5.5,-2.2 M873,762 c-2.4,-1.4 -4.8,4.6 -7.2,1.0 M975,813 c2.3,-6.0 4.7,0.0 7.0,-1.8 M755,823 c2.1,-5.7 4.3,0.3 6.4,-1.6 M828,849 c-0.9,0.7 -1.7,6.7 -2.6,2.2 M973,895 c0.0,-5.2 0.1,0.8 0.1,-1.3 M869,802 c1.4,-4.9 2.9,1.1 4.3,-1.1 M1012,762 c-0.9,-5.0 -1.8,1.0 -2.8,-1.2 M867,777 c2.6,-6.0 5.2,-0.0 7.8,-1.8 M803,791 c-1.6,-0.8 -3.2,5.2 -4.8,1.3 M816,836 c0.5,-4.5 0.9,1.5 1.4,-0.9 M886,806 c-2.3,-0.2 -4.5,5.8 -6.8,1.7 M858,851 c-2.7,-2.5 -5.5,3.5 -8.2,0.3 M847,833 c-1.4,-6.5 -2.8,-0.5 -4.3,-2.1 M891,823 c-2.6,-1.3 -5.2,4.7 -7.9,1.0 M897,837 c2.9,-0.8 5.7,5.2 8.6,1.3 M1048,739 c-2.6,-4.8 -5.1,1.2 -7.7,-1.1 M1048,807 c1.1,-4.2 2.3,1.8 3.4,-0.7 M802,827 c1.4,-5.0 2.8,1.0 4.2,-1.2 M963,763 c0.9,-5.5 1.8,0.5 2.7,-1.5 M1064,856 c1.6,-1.3 3.3,4.7 4.9,1.0 M940,798 c-2.4,-5.4 -4.7,0.6 -7.1,-1.4 M886,834 c-3.2,-4.5 -6.5,1.5 -9.7,-0.9 M878,775 c2.4,-2.4 4.8,3.6 7.1,0.3 M901,764 c-0.5,-1.5 -0.9,4.5 -1.4,0.9 M913,797 c2.3,-0.8 4.7,5.2 7.0,1.3 M909,807 c2.5,-2.1 5.0,3.9 7.4,0.5 M979,804 c-2.7,-0.7 -5.4,5.3 -8.2,1.4 M964,885 c1.7,-6.3 3.5,-0.3 5.2,-2.0 M884,756 c1.7,-0.4 3.5,5.6 5.2,1.6 M907,813 c3.1,-3.6 6.2,2.4 9.4,-0.4 M1040,768 c1.7,-0.4 3.3,5.6 5.0,1.6 M846,762 c-3.1,-1.4 -6.2,4.6 -9.4,1.0 M818,817 c3.0,-6.0 6.0,0.0 9.0,-1.8 M917,782 c1.4,-0.6 2.8,5.4 4.3,1.5 M907,848 c3.3,-1.9 6.6,4.1 9.9,0.7 M849,786 c-3.1,-4.1 -6.2,1.9 -9.3,-0.7 M864,810 c-1.3,-5.9 -2.7,0.1 -4.0,-1.7 M879,735 c-1.8,-5.1 -3.7,0.9 -5.5,-1.2 M818,791 c3.1,-4.2 6.1,1.8 9.2,-0.7 M858,878 c-2.5,-2.5 -5.0,3.5 -7.5,0.3 M832,862 c0.3,-0.9 0.7,5.1 1.0,1.3 M980,849 c0.7,-3.3 1.4,2.7 2.1,-0.2 M932,716 c-2.7,-4.7 -5.4,1.3 -8.1,-1.0 M876,817 c-3.1,-4.8 -6.2,1.2 -9.2,-1.1 M961,857 c-0.4,-6.1 -0.7,-0.1 -1.1,-1.9 M869,837 c-1.0,-5.7 -1.9,0.3 -2.9,-1.6 M927,798 c3.4,-1.0 6.9,5.0 10.3,1.2 M1039,829 c3.4,-2.5 6.7,3.5 10.1,0.3 M996,826 c-0.5,-5.5 -0.9,0.5 -1.4,-1.5 M904,794 c2.9,-1.8 5.9,4.2 8.8,0.7 M769,724 c1.1,-5.0 2.1,1.0 3.2,-1.2 M916,818 c-3.3,-0.8 -6.6,5.2 -9.9,1.3 M955,765 c-2.2,-1.9 -4.4,4.1 -6.6,0.7 M1031,716 c-2.3,-0.7 -4.6,5.3 -7.0,1.4 M987,734 c-1.2,-5.5 -2.4,0.5 -3.6,-1.5 M951,762 c-0.9,-2.6 -1.8,3.4 -2.8,0.2 M799,853 c-1.8,-6.7 -3.6,-0.7 -5.5,-2.2 M799,771 c2.2,-1.4 4.5,4.6 6.7,1.0 M809,797 c-2.4,-4.6 -4.8,1.4 -7.2,-1.0 M883,787 c1.3,-5.7 2.6,0.3 3.9,-1.6 M937,801 c-0.4,-5.5 -0.8,0.5 -1.3,-1.5 M914,792 c2.4,-0.2 4.8,5.8 7.2,1.7 M937,752 c-1.5,-1.7 -3.0,4.3 -4.6,0.8 M821,791 c-1.1,-3.5 -2.3,2.5 -3.4,-0.3 M830,727 c2.8,-5.7 5.7,0.3 8.5,-1.6 M887,839 c0.4,-4.2 0.9,1.8 1.3,-0.7 M928,812 c-1.2,-3.3 -2.5,2.7 -3.7,-0.2 M1037,781 c2.2,-6.5 4.4,-0.5 6.5,-2.1 M860,743 c-1.4,-2.4 -2.8,3.6 -4.3,0.3 M1014,781 c1.0,-4.6 2.1,1.4 3.1,-1.0 M811,868 c-3.3,-5.5 -6.6,0.5 -9.9,-1.5 M873,754 c-2.9,-1.7 -5.8,4.3 -8.7,0.8 M833,835 c-0.6,-2.8 -1.2,3.2 -1.8,0.1 M832,778 c-2.7,-5.6 -5.4,0.4 -8.1,-1.5 M1002,761 c-2.7,-0.1 -5.4,5.9 -8.1,1.7 M914,814 c0.2,-5.0 0.4,1.0 0.6,-1.2 M801,799 c-1.9,-2.4 -3.8,3.6 -5.7,0.3 M997,828 c0.6,-6.4 1.2,-0.4 1.9,-2.0 M886,804 c-0.4,-0.1 -0.8,5.9 -1.3,1.7 M780,774 c1.8,-6.1 3.6,-0.1 5.4,-1.8 M1059,791 c-2.8,-0.4 -5.6,5.6 -8.4,1.6 M872,811 c3.2,-2.5 6.4,3.5 9.7,0.3 M923,772 c1.9,-6.5 3.9,-0.5 5.8,-2.1 M922,835 c-3.4,-2.2 -6.8,3.8 -10.2,0.5 M932,830 c1.5,-3.6 2.9,2.4 4.4,-0.4 M1011,757 c2.6,-2.5 5.2,3.5 7.8,0.3 M1073,753 c-2.3,-1.0 -4.6,5.0 -7.0,1.2 M832,855 c1.3,-0.4 2.5,5.6 3.8,1.6 M977,823 c1.7,0.6 3.3,6.6 5.0,2.2 M910,783 c0.7,-6.2 1.5,-0.2 2.2,-1.9 M760,772 c-2.7,0.4 -5.4,6.4 -8.1,2.0 M884,766 c-2.1,-3.4 -4.3,2.6 -6.4,-0.3 M977,748 c-2.7,-6.8 -5.4,-0.8 -8.1,-2.3 M1039,843 c-2.2,-2.6 -4.4,3.4 -6.6,0.3 M881,857 c-0.8,-5.8 -1.7,0.2 -2.5,-1.7 M994,758 c1.3,-0.5 2.7,5.5 4.0,1.5 M929,793 c-1.1,-5.8 -2.2,0.2 -3.3,-1.7 M732,794 c2.1,-6.7 4.2,-0.7 6.3,-2.2 M984,866 c1.3,-3.9 2.5,2.1 3.8,-0.5 M863,799 c2.4,-3.9 4.8,2.1 7.2,-0.5 M1001,754 c-3.0,-4.4 -5.9,1.6 -8.9,-0.8 M955,882 c0.6,-6.7 1.2,-0.7 1.9,-2.2 M956,830 c-0.2,-2.4 -0.5,3.6 -0.7,0.4 M851,820 c-3.5,-2.4 -6.9,3.6 -10.4,0.4 M906,802 c-0.3,0.9 -0.6,6.9 -0.9,2.3 M963,802 c1.2,-4.8 2.4,1.2 3.6,-1.1 M900,844 c-1.7,-2.4 -3.3,3.6 -5.0,0.3 M939,794 c0.4,-0.8 0.8,5.2 1.3,1.3 M1023,743 c0.9,-1.9 1.9,4.1 2.8,0.6 M867,821 c2.1,-0.0 4.1,6.0 6.2,1.8 M1041,771 c-1.4,-0.9 -2.7,5.1 -4.1,1.3 M908,745 c0.9,-4.2 1.9,1.8 2.8,-0.7 M828,782 c-3.1,-4.3 -6.2,1.7 -9.2,-0.8 M796,907 c-0.1,-4.1 -0.3,1.9 -0.4,-0.6 M918,826 c-1.1,-5.9 -2.1,0.1 -3.2,-1.7 M821,808 c0.5,-4.6 1.0,1.4 1.4,-0.9 M931,809 c-1.4,-4.5 -2.8,1.5 -4.2,-0.9 M898,742 c3.1,-4.3 6.1,1.7 9.2,-0.8 M1020,769 c-2.9,-5.6 -5.9,0.4 -8.8,-1.5 M818,852 c-0.5,-0.1 -1.0,5.9 -1.5,1.8 M1009,815 c2.8,-4.8 5.6,1.2 8.4,-1.1 M914,804 c-2.3,-4.9 -4.7,1.1 -7.0,-1.1 M897,767 c-0.7,-5.4 -1.4,0.6 -2.1,-1.4 M771,744 c1.0,-5.4 2.1,0.6 3.1,-1.5 M886,785 c2.2,0.0 4.3,6.0 6.5,1.8 M889,814 c-2.2,-2.7 -4.4,3.3 -6.5,0.2 M1006,753 c3.0,-5.3 5.9,0.7 8.9,-1.4 M846,857 c1.0,-3.8 2.1,2.2 3.1,-0.5 M880,761 c-3.1,-3.7 -6.2,2.3 -9.3,-0.4 M1036,812 c-1.2,-3.0 -2.3,3.0 -3.5,-0.0 M858,776 c-0.3,-6.9 -0.5,-0.9 -0.8,-2.3 M1018,771 c3.4,-6.6 6.8,-0.6 10.2,-2.1 M806,751 c-1.2,-6.3 -2.4,-0.3 -3.6,-2.0 M943,814 c1.9,-6.3 3.7,-0.3 5.6,-2.0 M952,754 c0.3,-2.3 0.5,3.7 0.8,0.4 M791,774 c0.7,-4.4 1.4,1.6 2.1,-0.8 M911,763 c1.5,-0.9 3.0,5.1 4.4,1.3 M928,759 c1.9,0.8 3.8,6.8 5.7,2.3 M845,805 c0.2,0.5 0.3,6.5 0.5,2.1 M923,799 c-0.2,-1.8 -0.3,4.2 -0.5,0.7 M928,756 c3.4,-5.2 6.9,0.8 10.3,-1.3 M917,777 c-3.3,-5.9 -6.6,0.1 -9.9,-1.8 M1014,813 c0.4,-5.5 0.8,0.5 1.2,-1.5 M995,780 c-2.5,-5.6 -4.9,0.4 -7.4,-1.5 M926,804 c1.9,-5.1 3.9,0.9 5.8,-1.2 M1020,790 c1.0,-4.2 1.9,1.8 2.9,-0.7 M946,751 c-1.2,0.2 -2.5,6.2 -3.7,1.9" fill="none" stroke="#7a4a36" stroke-width="0.8" opacity="0.45"/>
<circle cx="775" cy="867" r="10" fill="#9a5a48" opacity="0.6" filter="url(#b3)"/><circle cx="775" cy="867" r="7.5" fill="#8a4a3a"/><circle cx="775" cy="867" r="3.5" fill="#6a3428" opacity="0.7"/>
<circle cx="1077" cy="839" r="9" fill="#9a5a48" opacity="0.6" filter="url(#b3)"/><circle cx="1077" cy="839" r="7" fill="#8a4a3a"/><circle cx="1077" cy="839" r="3.2" fill="#6a3428" opacity="0.7"/>
</g>
<path d="M814,414 C802,404 794,410 796,433 C797,455 803,470 818,477 C825,479 828,470 826,455 Z" fill="#ae8068"/>
<path d="M810,424 C804,430 805,448 812,462" fill="none" stroke="#7e5040" stroke-width="3" opacity="0.5" filter="url(#b1)"/>
<path d="M841,318 L969,318 C976,330 980,345 980,351 C982,390 982,420 981,438 C978,450 975,458 974,462 C971,475 970,490 969,503 C967,515 965,522 963,524 C960,530 958,535 956,537 C945,550 930,556 912,556 C880,550 850,530 826,514 L826,480 C818,470 814,440 812,410 L809,335 Z" fill="url(#face)"/>
<clipPath id="fc"><path d="M841,318 L969,318 C976,330 980,345 980,351 C982,390 982,420 981,438 C978,450 975,458 974,462 C971,475 970,490 969,503 C967,515 965,522 963,524 C960,530 958,535 956,537 C945,550 930,556 912,556 C880,550 850,530 826,514 L826,480 C818,470 814,440 812,410 L809,335 Z"/></clipPath><g clip-path="url(#fc)">
<ellipse cx="905" cy="345" rx="55" ry="22" fill="#c8a084" opacity="0.5" filter="url(#b12)"/>
<path d="M812,400 C820,450 826,490 840,520 L860,520 C850,480 845,440 845,400 Z" fill="#8e6650" opacity="0.35" filter="url(#b12)"/>
<path d="M850,470 C860,520 890,552 915,553 C945,550 962,520 968,480 C950,500 930,510 910,510 C880,505 860,490 850,470 Z" fill="#8a7060" opacity="0.2" filter="url(#b6)"/>
<ellipse cx="882" cy="416" rx="22" ry="12" fill="#8e6450" opacity="0.45" filter="url(#b6)"/>
<ellipse cx="954" cy="416" rx="20" ry="12" fill="#8e6450" opacity="0.45" filter="url(#b6)"/>
<path d="M851,397 C866,387 890,387 905,395 L904,402 C888,397 868,398 853,404 Z" fill="#5a3a2c" opacity="0.85" filter="url(#b1)"/>
<path d="M941,399 C955,390 970,390 980,396 L980,404 C968,400 956,401 942,405 Z" fill="#5a3a2c" opacity="0.85" filter="url(#b1)"/>
<path d="M869,415 C875,409 890,408 897,415 C890,419 876,420 869,415 Z" fill="#d8c4b8"/><circle cx="884" cy="414" r="4.6" fill="#2a1a14"/>
<path d="M940,415 C946,409 960,408 967,415 C960,419 946,420 940,415 Z" fill="#d8c4b8"/><circle cx="954" cy="414" r="4.6" fill="#2a1a14"/>
<path d="M920,420 C918,440 912,455 906,466 C912,474 928,474 938,466" fill="none" stroke="#8a5e48" stroke-width="4" opacity="0.35" filter="url(#b3)"/>
<ellipse cx="927" cy="448" rx="8" ry="16" fill="#c8a08a" opacity="0.35" filter="url(#b3)"/>
<path d="M896,500 C910,494 935,494 950,500 C935,510 912,510 896,500 Z" fill="#9a6a5c" opacity="0.8" filter="url(#b1)"/>
<path d="M897,501 C912,498 932,498 948,501" fill="none" stroke="#5e3a2e" stroke-width="1.6" opacity="0.8"/>
<path d="M913,420 C911,438 907,452 904,464" fill="none" stroke="#7a5040" stroke-width="5" opacity="0.3" filter="url(#b3)"/>
<ellipse cx="925" cy="457" rx="10" ry="8" fill="#d2aa90" opacity="0.45" filter="url(#b3)"/>
<ellipse cx="913" cy="468" rx="4" ry="2" fill="#5a3a2e" opacity="0.6" filter="url(#b1)"/><ellipse cx="936" cy="468" rx="4" ry="2" fill="#5a3a2e" opacity="0.6" filter="url(#b1)"/>
<path d="M903,472 C896,482 893,492 894,500 M943,472 C952,480 955,490 954,498" fill="none" stroke="#7a5040" stroke-width="3" opacity="0.3" filter="url(#b3)"/>
<ellipse cx="922" cy="508" rx="17" ry="4.5" fill="#c89484" opacity="0.5" filter="url(#b1)"/>
<path d="M981,360 C985,420 980,480 965,530 L990,530 L990,360 Z" fill="#c8a088" opacity="0.25" filter="url(#b6)"/>
<ellipse cx="915" cy="553" rx="45" ry="10" fill="#7a5444" opacity="0.35" filter="url(#b6)"/>
</g>
<path d="M828,516 C860,540 890,556 912,556 C935,556 950,546 956,537" fill="none" stroke="#9a7058" stroke-width="4" opacity="0.5" filter="url(#b3)"/>
<path d="M809,404 C806,380 806,350 809,336 C812,318 820,300 841,281 C850,270 855,265 862,262 C875,255 885,253 892,253 C905,252 915,254 923,256 C935,260 942,265 947,270 C955,278 960,285 963,291 C967,300 969,310 969,317 C973,322 976,325 977,326 C979,335 980,340 981,346 C978,335 974,328 969,322 C930,318 880,316 841,318 C838,340 838,370 841,387 C836,395 832,402 829,407 C820,404 814,402 809,404 Z" fill="url(#hair)"/>
<path d="M809,404 C806,380 806,350 809,336 C814,325 826,318 842,320 C838,340 837,370 840,387 C836,395 832,402 829,407 C820,404 814,402 809,404 Z" fill="url(#side)"/><path d="M842,322 C838,345 836,372 840,388" fill="none" stroke="#9a7a66" stroke-width="5" opacity="0.5" filter="url(#b3)"/>
<clipPath id="hc"><path d="M809,404 C806,380 806,350 809,336 C812,318 820,300 841,281 C850,270 855,265 862,262 C875,255 885,253 892,253 C905,252 915,254 923,256 C935,260 942,265 947,270 C955,278 960,285 963,291 C967,300 969,310 969,317 C973,322 976,325 977,326 C979,335 980,340 981,346 C978,335 974,328 969,322 C930,318 880,316 841,318 C838,340 838,370 841,387 C836,395 832,402 829,407 C820,404 814,402 809,404 Z"/></clipPath><g clip-path="url(#hc)">
<path d="M912,318 C914,293 917,277 925,259 M858,319 C860,294 874,273 882,255 M866,314 C868,289 879,272 887,254 M903,319 C905,294 915,277 923,259 M975,320 C977,295 994,295 1002,277 M945,316 C947,291 964,286 972,268 M963,317 C965,292 985,291 993,273 M857,316 C859,291 879,278 887,260 M949,315 C951,290 962,286 970,268 M861,317 C863,292 867,277 875,259 M873,316 C875,291 892,274 900,256 M946,316 C948,291 954,281 962,263 M894,317 C896,292 915,276 923,258 M963,319 C965,294 970,286 978,268 M960,318 C962,293 970,285 978,267 M879,319 C881,294 893,271 901,253 M918,319 C920,294 932,278 940,260 M903,314 C905,289 909,274 917,256 M972,318 C974,293 988,293 996,275 M936,320 C938,295 939,282 947,264 M856,317 C858,292 872,281 880,263 M891,318 C893,293 911,278 919,260 M927,316 C929,291 940,282 948,264 M940,316 C942,291 957,286 965,268 M850,318 C852,293 861,278 869,260 M879,314 C881,289 887,276 895,258 M903,319 C905,294 912,277 920,259 M960,316 C962,291 973,287 981,269 M938,320 C940,295 945,280 953,262 M927,317 C929,292 935,283 943,265 M959,314 C961,289 975,290 983,272 M905,314 C907,289 923,276 931,258 M927,318 C929,293 945,286 953,268 M847,317 C849,292 864,277 872,259 M925,319 C927,294 935,283 943,265" fill="none" stroke="#8e6450" stroke-width="1.3" opacity="0.55"/>
<path d="M904,317 C906,292 925,278 933,260 M927,319 C929,294 931,278 939,260 M973,320 C975,295 988,293 996,275 M871,315 C873,290 873,277 881,259 M910,318 C912,293 922,276 930,258 M887,315 C889,290 894,269 902,251 M970,319 C972,294 972,286 980,268 M855,318 C857,293 873,275 881,257 M861,315 C863,290 865,275 873,257 M871,318 C873,293 875,278 883,260 M971,319 C973,294 979,293 987,275 M859,320 C861,295 865,277 873,259 M858,317 C860,292 864,280 872,262 M920,319 C922,294 926,276 934,258 M941,320 C943,295 947,287 955,269 M851,320 C853,295 858,282 866,264 M869,318 C871,293 872,275 880,257 M964,315 C966,290 967,285 975,267 M920,315 C922,290 929,282 937,264 M864,314 C866,289 866,282 874,264 M908,318 C910,293 917,280 925,262 M941,318 C943,293 959,289 967,271 M900,319 C902,294 919,277 927,259 M856,318 C858,293 878,279 886,261 M903,319 C905,294 907,276 915,258 M936,317 C938,292 950,287 958,269 M872,315 C874,290 892,274 900,256 M872,317 C874,292 890,277 898,259 M864,317 C866,292 882,278 890,260 M904,316 C906,291 910,274 918,256 M973,317 C975,292 976,286 984,268 M886,319 C888,294 888,271 896,253 M864,314 C866,289 879,276 887,258 M934,315 C936,290 946,280 954,262 M881,316 C883,291 897,272 905,254" fill="none" stroke="#4a2e22" stroke-width="1.3" opacity="0.45"/>
<path d="M845,312 C880,305 930,306 968,315" fill="none" stroke="#4e3226" stroke-width="6" opacity="0.5" filter="url(#b3)"/>
</g>
<path d="M343,888 V900 H356" fill="none" stroke="#333" stroke-width="1"/><path d="M343,888 V899" stroke="#3c3" stroke-width="1.5"/><path d="M344,900 H356" stroke="#e33" stroke-width="1.5"/><text x="340" y="886" font-size="8" fill="#3a3" font-family="Liberation Sans">y</text><text x="355" y="898" font-size="8" fill="#d33" font-family="Liberation Sans">x</text><text x="347" y="899" font-size="7" fill="#33d" font-family="Liberation Sans">z</text>
</svg>
<div class="a" style="left:1436px;top:146px;width:7px;height:784px;background:#3c3c3c;"></div>
<div class="a" style="left:1443px;top:146px;width:461px;height:784px;background:#444444;"></div>
<div class="a" style="left:1444px;top:150px;width:4px;height:778px;background:#3c3c3c;"></div>
<div class="t" style="left:1452px;top:156.07px;font-size:11.5px;color:#d0d0d0;transform:scaleX(0.9502);transform-origin:0 0;">List</div>
<div class="t" style="left:1484.5px;top:156.07px;font-size:11.5px;color:#d0d0d0;transform:scaleX(0.9277);transform-origin:0 0;">Selected</div>
<div class="t" style="left:1542.5px;top:156.07px;font-size:11.5px;color:#d0d0d0;transform:scaleX(0.9102);transform-origin:0 0;">Focus</div>
<div class="t" style="left:1587px;top:156.07px;font-size:11.5px;color:#d0d0d0;transform:scaleX(1.0402);transform-origin:0 0;">Attributes</div>
<div class="t" style="left:1653px;top:156.07px;font-size:11.5px;color:#d0d0d0;transform:scaleX(0.9809);transform-origin:0 0;">Display</div>
<div class="t" style="left:1705.5px;top:156.07px;font-size:11.5px;color:#d0d0d0;transform:scaleX(0.9908);transform-origin:0 0;">Show</div>
<div class="t" style="left:1749px;top:156.07px;font-size:11.5px;color:#d0d0d0;transform:scaleX(0.9934);transform-origin:0 0;">Help</div>
<div class="a" style="left:1450px;top:186px;width:446px;height:19px;background:#393939;"></div>
<div class="a" style="left:1451px;top:187px;width:108px;height:18px;background:#404040;"></div>
<div class="a" style="left:1560px;top:186px;width:142px;height:19px;background:#444444;"></div>
<div class="a" style="left:1704px;top:187px;width:98px;height:18px;background:#404040;"></div>
<div class="t" style="left:1461px;top:192.07px;font-size:11.5px;color:#9a9a9a;transform:scaleX(0.9544);transform-origin:0 0;">VRayLightDome1</div>
<div class="t" style="left:1572.5px;top:192.07px;font-size:11.5px;color:#e6e6e6;transform:scaleX(0.9486);transform-origin:0 0;">VRayLightDomeShape1</div>
<div class="t" style="left:1715px;top:192.07px;font-size:11.5px;color:#9a9a9a;transform:scaleX(1.0304);transform-origin:0 0;">defaultLightSet</div>
<div class="t" style="left:1477.5px;top:241.07px;font-size:11.5px;color:#c8c8c8;transform:scaleX(0.9572);transform-origin:0 0;">VRayLightDomeShape:</div>
<div class="a" style="left:1602.5px;top:237.5px;width:152.5px;height:17.5px;background:#2b2b2b;"></div>
<div class="t" style="left:1607px;top:241.57px;font-size:11.5px;color:#d8d8d8;transform:scaleX(0.9567);transform-origin:0 0;">VRayLightDomeShape1</div>
<svg class="a" style="left:1769px;top:227px;" width="18" height="36" viewBox="0 0 18 36"><rect x="1.5" y="1.5" width="15" height="11" fill="none" stroke="#ccc" stroke-width="1.3"/><path d="M1 4 L6 7 L1 10 Z" fill="#ddd"/><rect x="1.5" y="23.5" width="13" height="11" fill="none" stroke="#ccc" stroke-width="1.3"/><path d="M12 26 L17 29 L12 32 Z" fill="#ddd"/></svg>
<div class="a" style="left:1799px;top:214.5px;width:68.5px;height:19.5px;background:#5d5d5d;"></div>
<div class="t" style="left:1817px;top:220.07px;font-size:11.5px;color:#e0e0e0;transform:scaleX(0.9581);transform-origin:0 0;">Focus</div>
<div class="a" style="left:1799px;top:236px;width:68.5px;height:19.5px;background:#5d5d5d;"></div>
<div class="t" style="left:1815px;top:242.07px;font-size:11.5px;color:#e0e0e0;transform:scaleX(0.9238);transform-origin:0 0;">Presets</div>
<div class="a" style="left:1799px;top:258px;width:32px;height:19.5px;background:#5d5d5d;"></div>
<div class="a" style="left:1834px;top:258px;width:33.5px;height:19.5px;background:#5d5d5d;"></div>
<div class="t" style="left:1800px;top:264.07px;font-size:11.5px;color:#e0e0e0;transform:scaleX(1.0081);transform-origin:0 0;">Show</div>
<div class="t" style="left:1839px;top:264.07px;font-size:11.5px;color:#e0e0e0;transform:scaleX(1.0145);transform-origin:0 0;">Hide</div>
<div class="t" style="left:1561px;top:320.07px;font-size:11.5px;color:#c8c8c8;transform:scaleX(0.9363);transform-origin:0 0;">Sample</div>
<svg class="a" style="left:1603px;top:292px;" width="64" height="64" viewBox="0 0 64 64"><rect width="64" height="64" fill="#d8d8d8"/><rect x="30" y="16" width="1" height="1" fill="#999"/><rect x="60" y="8" width="1" height="1" fill="#777"/><rect x="1" y="60" width="1" height="1" fill="#999"/><rect x="29" y="24" width="1" height="1" fill="#aaa"/><rect x="60" y="50" width="1" height="1" fill="#888"/><rect x="29" y="19" width="1" height="1" fill="#777"/><rect x="49" y="1" width="1" height="1" fill="#666"/><rect x="20" y="5" width="1" height="1" fill="#999"/><rect x="3" y="34" width="1" height="1" fill="#aaa"/><rect x="49" y="54" width="1" height="1" fill="#aaa"/><rect x="56" y="17" width="1" height="1" fill="#999"/><rect x="12" y="4" width="1" height="1" fill="#888"/><rect x="63" y="27" width="1" height="1" fill="#999"/><rect x="55" y="38" width="1" height="1" fill="#aaa"/><rect x="49" y="44" width="1" height="1" fill="#777"/><rect x="52" y="29" width="1" height="1" fill="#999"/><rect x="3" y="35" width="1" height="1" fill="#777"/><rect x="20" y="41" width="1" height="1" fill="#777"/><rect x="13" y="27" width="1" height="1" fill="#777"/><rect x="34" y="36" width="1" height="1" fill="#666"/><rect x="8" y="61" width="1" height="1" fill="#aaa"/><rect x="11" y="44" width="1" height="1" fill="#666"/><rect x="52" y="19" width="1" height="1" fill="#666"/><rect x="37" y="54" width="1" height="1" fill="#aaa"/><rect x="15" y="5" width="1" height="1" fill="#777"/><rect x="5" y="48" width="1" height="1" fill="#777"/><rect x="42" y="35" width="1" height="1" fill="#777"/><rect x="30" y="4" width="1" height="1" fill="#999"/><rect x="0" y="9" width="1" height="1" fill="#666"/><rect x="4" y="25" width="1" height="1" fill="#aaa"/><rect x="37" y="33" width="1" height="1" fill="#888"/><rect x="5" y="43" width="1" height="1" fill="#999"/><rect x="46" y="17" width="1" height="1" fill="#aaa"/><rect x="48" y="58" width="1" height="1" fill="#777"/><rect x="49" y="13" width="1" height="1" fill="#777"/><rect x="34" y="55" width="1" height="1" fill="#888"/><rect x="38" y="55" width="1" height="1" fill="#999"/><rect x="38" y="43" width="1" height="1" fill="#666"/><rect x="53" y="40" width="1" height="1" fill="#666"/><rect x="48" y="17" width="1" height="1" fill="#666"/><rect x="42" y="59" width="1" height="1" fill="#999"/><rect x="45" y="35" width="1" height="1" fill="#aaa"/><rect x="2" y="7" width="1" height="1" fill="#666"/><rect x="47" y="32" width="1" height="1" fill="#aaa"/><rect x="38" y="40" width="1" height="1" fill="#888"/><rect x="46" y="23" width="1" height="1" fill="#999"/><rect x="47" y="33" width="1" height="1" fill="#999"/><rect x="48" y="13" width="1" height="1" fill="#666"/><rect x="16" y="39" width="1" height="1" fill="#777"/><rect x="28" y="34" width="1" height="1" fill="#888"/><rect x="41" y="23" width="1" height="1" fill="#aaa"/><rect x="12" y="13" width="1" height="1" fill="#777"/><rect x="41" y="42" width="1" height="1" fill="#888"/><rect x="56" y="21" width="1" height="1" fill="#666"/><rect x="43" y="27" width="1" height="1" fill="#777"/><rect x="57" y="34" width="1" height="1" fill="#888"/><rect x="15" y="4" width="1" height="1" fill="#777"/><rect x="24" y="40" width="1" height="1" fill="#777"/><rect x="23" y="35" width="1" height="1" fill="#999"/><rect x="10" y="44" width="1" height="1" fill="#777"/><rect x="16" y="53" width="1" height="1" fill="#999"/><rect x="34" y="59" width="1" height="1" fill="#999"/><rect x="53" y="37" width="1" height="1" fill="#aaa"/><rect x="52" y="4" width="1" height="1" fill="#aaa"/><rect x="19" y="25" width="1" height="1" fill="#666"/><rect x="61" y="55" width="1" height="1" fill="#777"/><rect x="28" y="4" width="1" height="1" fill="#aaa"/><rect x="36" y="43" width="1" height="1" fill="#888"/><rect x="8" y="36" width="1" height="1" fill="#666"/><rect x="31" y="5" width="1" height="1" fill="#666"/><rect x="25" y="55" width="1" height="1" fill="#777"/><rect x="6" y="1" width="1" height="1" fill="#aaa"/><rect x="15" y="21" width="1" height="1" fill="#777"/><rect x="38" y="30" width="1" height="1" fill="#666"/><rect x="52" y="6" width="1" height="1" fill="#777"/><rect x="14" y="43" width="1" height="1" fill="#888"/><rect x="32" y="61" width="1" height="1" fill="#666"/><rect x="45" y="28" width="1" height="1" fill="#888"/><rect x="15" y="15" width="1" height="1" fill="#888"/><rect x="30" y="35" width="1" height="1" fill="#888"/><rect x="0" y="62" width="1" height="1" fill="#777"/><rect x="51" y="6" width="1" height="1" fill="#999"/><rect x="31" y="34" width="1" height="1" fill="#777"/><rect x="54" y="6" width="1" height="1" fill="#aaa"/><rect x="41" y="0" width="1" height="1" fill="#666"/><rect x="16" y="5" width="1" height="1" fill="#666"/><rect x="6" y="8" width="1" height="1" fill="#aaa"/><rect x="4" y="11" width="1" height="1" fill="#777"/><rect x="62" y="40" width="1" height="1" fill="#888"/><rect x="40" y="9" width="1" height="1" fill="#999"/><rect x="49" y="49" width="1" height="1" fill="#777"/><rect x="38" y="46" width="1" height="1" fill="#999"/><rect x="24" y="42" width="1" height="1" fill="#aaa"/><rect x="15" y="16" width="1" height="1" fill="#777"/><rect x="0" y="48" width="1" height="1" fill="#666"/><rect x="22" y="5" width="1" height="1" fill="#999"/><rect x="58" y="48" width="1" height="1" fill="#666"/><rect x="55" y="6" width="1" height="1" fill="#999"/><rect x="63" y="40" width="1" height="1" fill="#aaa"/><rect x="53" y="58" width="1" height="1" fill="#666"/><rect x="31" y="27" width="1" height="1" fill="#777"/><rect x="34" y="9" width="1" height="1" fill="#aaa"/><rect x="28" y="54" width="1" height="1" fill="#888"/><rect x="3" y="41" width="1" height="1" fill="#999"/><rect x="33" y="15" width="1" height="1" fill="#aaa"/><rect x="15" y="48" width="1" height="1" fill="#666"/><rect x="40" y="13" width="1" height="1" fill="#777"/><rect x="0" y="60" width="1" height="1" fill="#888"/><rect x="30" y="49" width="1" height="1" fill="#666"/><rect x="11" y="12" width="1" height="1" fill="#aaa"/><rect x="22" y="3" width="1" height="1" fill="#999"/><rect x="15" y="3" width="1" height="1" fill="#666"/><rect x="61" y="36" width="1" height="1" fill="#777"/><rect x="38" y="11" width="1" height="1" fill="#666"/><rect x="30" y="13" width="1" height="1" fill="#777"/><rect x="12" y="7" width="1" height="1" fill="#777"/><rect x="41" y="23" width="1" height="1" fill="#666"/><rect x="30" y="23" width="1" height="1" fill="#888"/><rect x="58" y="50" width="1" height="1" fill="#999"/><rect x="47" y="50" width="1" height="1" fill="#999"/><rect x="53" y="10" width="1" height="1" fill="#aaa"/><rect x="30" y="52" width="1" height="1" fill="#888"/><rect x="53" y="61" width="1" height="1" fill="#888"/><rect x="51" y="19" width="1" height="1" fill="#888"/><rect x="12" y="63" width="1" height="1" fill="#aaa"/><rect x="56" y="23" width="1" height="1" fill="#888"/><rect x="34" y="25" width="1" height="1" fill="#888"/><rect x="40" y="29" width="1" height="1" fill="#777"/><rect x="37" y="52" width="1" height="1" fill="#777"/><rect x="34" y="27" width="1" height="1" fill="#999"/><rect x="2" y="34" width="1" height="1" fill="#aaa"/><rect x="48" y="25" width="1" height="1" fill="#888"/><rect x="46" y="30" width="1" height="1" fill="#999"/><rect x="61" y="18" width="1" height="1" fill="#aaa"/><rect x="61" y="26" width="1" height="1" fill="#aaa"/><rect x="3" y="61" width="1" height="1" fill="#666"/><rect x="51" y="5" width="1" height="1" fill="#aaa"/><rect x="29" y="30" width="1" height="1" fill="#666"/><rect x="27" y="32" width="1" height="1" fill="#888"/><rect x="24" y="33" width="1" height="1" fill="#888"/><rect x="23" y="4" width="1" height="1" fill="#999"/><rect x="21" y="5" width="1" height="1" fill="#999"/><rect x="23" y="54" width="1" height="1" fill="#666"/><rect x="10" y="15" width="1" height="1" fill="#666"/><rect x="33" y="37" width="1" height="1" fill="#666"/><rect x="45" y="57" width="1" height="1" fill="#777"/><rect x="43" y="0" width="1" height="1" fill="#666"/><rect x="42" y="42" width="1" height="1" fill="#aaa"/><rect x="48" y="62" width="1" height="1" fill="#666"/><rect x="26" y="62" width="1" height="1" fill="#aaa"/><rect x="16" y="40" width="1" height="1" fill="#666"/><rect x="35" y="9" width="1" height="1" fill="#aaa"/><rect x="14" y="56" width="1" height="1" fill="#777"/><rect x="32" y="12" width="1" height="1" fill="#777"/><rect x="47" y="47" width="1" height="1" fill="#aaa"/><rect x="37" y="33" width="1" height="1" fill="#666"/><rect x="43" y="14" width="1" height="1" fill="#aaa"/><rect x="45" y="7" width="1" height="1" fill="#999"/><rect x="23" y="19" width="1" height="1" fill="#888"/><rect x="47" y="58" width="1" height="1" fill="#666"/><rect x="13" y="18" width="1" height="1" fill="#999"/><rect x="53" y="38" width="1" height="1" fill="#888"/><rect x="58" y="61" width="1" height="1" fill="#999"/><rect x="22" y="8" width="1" height="1" fill="#666"/><rect x="23" y="50" width="1" height="1" fill="#999"/><rect x="12" y="34" width="1" height="1" fill="#999"/><rect x="49" y="6" width="1" height="1" fill="#888"/><rect x="5" y="61" width="1" height="1" fill="#777"/><rect x="34" y="31" width="1" height="1" fill="#777"/><rect x="45" y="42" width="1" height="1" fill="#aaa"/><rect x="57" y="8" width="1" height="1" fill="#999"/><rect x="63" y="14" width="1" height="1" fill="#888"/><rect x="34" y="12" width="1" height="1" fill="#666"/><rect x="14" y="23" width="1" height="1" fill="#888"/><rect x="53" y="50" width="1" height="1" fill="#888"/><rect x="18" y="50" width="1" height="1" fill="#888"/><rect x="21" y="22" width="1" height="1" fill="#888"/><rect x="32" y="47" width="1" height="1" fill="#999"/><rect x="3" y="56" width="1" height="1" fill="#aaa"/><rect x="49" y="40" width="1" height="1" fill="#777"/><rect x="39" y="63" width="1" height="1" fill="#777"/><rect x="38" y="61" width="1" height="1" fill="#666"/><rect x="24" y="0" width="1" height="1" fill="#666"/><rect x="29" y="62" width="1" height="1" fill="#888"/><rect x="58" y="25" width="1" height="1" fill="#888"/><rect x="27" y="4" width="1" height="1" fill="#777"/><rect x="56" y="14" width="1" height="1" fill="#777"/><rect x="36" y="19" width="1" height="1" fill="#888"/><rect x="59" y="11" width="1" height="1" fill="#777"/><rect x="6" y="3" width="1" height="1" fill="#999"/><rect x="29" y="9" width="1" height="1" fill="#aaa"/><rect x="2" y="43" width="1" height="1" fill="#999"/><rect x="42" y="44" width="1" height="1" fill="#888"/><rect x="10" y="4" width="1" height="1" fill="#666"/><rect x="43" y="26" width="1" height="1" fill="#666"/><rect x="25" y="55" width="1" height="1" fill="#888"/><rect x="62" y="40" width="1" height="1" fill="#666"/><rect x="5" y="52" width="1" height="1" fill="#666"/><rect x="25" y="20" width="1" height="1" fill="#aaa"/><rect x="63" y="60" width="1" height="1" fill="#666"/><rect x="54" y="26" width="1" height="1" fill="#aaa"/><rect x="38" y="2" width="1" height="1" fill="#aaa"/><rect x="58" y="51" width="1" height="1" fill="#aaa"/><rect x="23" y="58" width="1" height="1" fill="#666"/><rect x="32" y="46" width="1" height="1" fill="#999"/><rect x="57" y="46" width="1" height="1" fill="#777"/><rect x="51" y="28" width="1" height="1" fill="#666"/><rect x="26" y="33" width="1" height="1" fill="#999"/><rect x="18" y="58" width="1" height="1" fill="#777"/><rect x="24" y="20" width="1" height="1" fill="#888"/><rect x="2" y="21" width="1" height="1" fill="#777"/><rect x="51" y="21" width="1" height="1" fill="#666"/><rect x="17" y="14" width="1" height="1" fill="#777"/><rect x="21" y="56" width="1" height="1" fill="#aaa"/><rect x="23" y="7" width="1" height="1" fill="#666"/><rect x="51" y="57" width="1" height="1" fill="#999"/><rect x="52" y="4" width="1" height="1" fill="#666"/><rect x="30" y="51" width="1" height="1" fill="#666"/><rect x="50" y="63" width="1" height="1" fill="#666"/><rect x="28" y="30" width="1" height="1" fill="#666"/><rect x="49" y="60" width="1" height="1" fill="#888"/><rect x="21" y="42" width="1" height="1" fill="#777"/><rect x="14" y="44" width="1" height="1" fill="#666"/><rect x="6" y="37" width="1" height="1" fill="#999"/><rect x="59" y="38" width="1" height="1" fill="#aaa"/><rect x="31" y="34" width="1" height="1" fill="#666"/><rect x="43" y="44" width="1" height="1" fill="#999"/><rect x="11" y="7" width="1" height="1" fill="#aaa"/><rect x="11" y="0" width="1" height="1" fill="#666"/><rect x="3" y="11" width="1" height="1" fill="#666"/><rect x="21" y="4" width="1" height="1" fill="#aaa"/><rect x="6" y="24" width="1" height="1" fill="#777"/><rect x="42" y="25" width="1" height="1" fill="#aaa"/><rect x="43" y="61" width="1" height="1" fill="#999"/><rect x="4" y="48" width="1" height="1" fill="#999"/><rect x="50" y="11" width="1" height="1" fill="#999"/><rect x="23" y="52" width="1" height="1" fill="#666"/><rect x="49" y="42" width="1" height="1" fill="#777"/><rect x="51" y="22" width="1" height="1" fill="#aaa"/><rect x="45" y="23" width="1" height="1" fill="#999"/><rect x="53" y="56" width="1" height="1" fill="#888"/><rect x="56" y="61" width="1" height="1" fill="#999"/><rect x="34" y="21" width="1" height="1" fill="#777"/><rect x="49" y="62" width="1" height="1" fill="#666"/><rect x="19" y="21" width="1" height="1" fill="#666"/><rect x="59" y="11" width="1" height="1" fill="#666"/><rect x="40" y="30" width="1" height="1" fill="#777"/><rect x="7" y="6" width="1" height="1" fill="#aaa"/><rect x="59" y="42" width="1" height="1" fill="#999"/><rect x="0" y="9" width="1" height="1" fill="#888"/><rect x="51" y="13" width="1" height="1" fill="#999"/><rect x="39" y="14" width="1" height="1" fill="#aaa"/><rect x="10" y="26" width="1" height="1" fill="#888"/><rect x="6" y="19" width="1" height="1" fill="#888"/><rect x="1" y="14" width="1" height="1" fill="#888"/><rect x="36" y="26" width="1" height="1" fill="#888"/><rect x="53" y="40" width="1" height="1" fill="#777"/><rect x="24" y="59" width="1" height="1" fill="#888"/><rect x="10" y="5" width="1" height="1" fill="#666"/><rect x="3" y="12" width="1" height="1" fill="#888"/></svg>
<div class="a" style="left:1455px;top:366px;width:425px;height:19px;background:#5d5d5d;"></div>
<svg class="a" style="left:1461px;top:372px;" width="11" height="7" viewBox="0 0 11 7"><path d="M0 0 H11 L5.5 7 Z" fill="#eee"/></svg>
<div class="t" style="left:1487px;top:372.07px;font-size:11.5px;color:#dcdcdc;transform:scaleX(1.0000);transform-origin:0 0;">Basic parameters</div>
<div class="a" style="left:1455px;top:385px;width:425px;height:156px;background:#474747;"></div>
<div class="a" style="left:1607px;top:391px;width:13px;height:13px;background:#2b2b2b;"></div>
<svg class="a" style="left:1608px;top:392px;" width="11" height="11" viewBox="0 0 11 11"><path d="M1.5 5.5 L4.5 9 L10 1.5" fill="none" stroke="#eee" stroke-width="1.8"/></svg>
<div class="t" style="left:1625.4px;top:393.07px;font-size:11.5px;color:#d0d0d0;">Enabled</div>
<div class="t" style="left:1538.5px;top:413.07px;font-size:11.5px;color:#c8c8c8;transform:scaleX(1.0097);transform-origin:0 0;">Color Mode</div>
<div class="a" style="left:1608px;top:408px;width:106px;height:19px;background:#5d5d5d;"></div>
<div class="a" style="left:1695px;top:408px;width:19px;height:19px;background:#555;"></div>
<svg class="a" style="left:1699px;top:415px;" width="10" height="6" viewBox="0 0 10 6"><path d="M0 0 H10 L5 6 Z" fill="#ddd"/></svg>
<div class="t" style="left:1611px;top:414.07px;font-size:11.5px;color:#d8d8d8;transform:scaleX(1.0188);transform-origin:0 0;">Color</div>
<div class="t" style="left:1543px;top:435.37px;font-size:11.5px;color:#c8c8c8;transform:scaleX(1.0253);transform-origin:0 0;">Light Color</div>
<div class="a" style="left:1608px;top:433px;width:68px;height:13px;background:#d4d4d4;"></div>
<div class="a" style="left:1679px;top:437px;width:192px;height:4px;background:#2f2f2f;border-radius:2px"></div>
<div class="a" style="left:1834px;top:433px;width:8px;height:13px;background:#c0c0c0;border-radius:2px"></div>
<div class="t" style="left:1536px;top:460.07px;font-size:11.5px;color:#808080;transform:scaleX(0.9920);transform-origin:0 0;">Temperature</div>
<div class="a" style="left:1608px;top:456px;width:68px;height:18px;background:#4a4a4a;"></div>
<div class="t" style="left:1613px;top:461.07px;font-size:11.5px;color:#7a7a7a;transform:scaleX(0.9390);transform-origin:0 0;">6500.000</div>
<div class="a" style="left:1679px;top:463px;width:192px;height:3px;background:#454545;"></div>
<div class="a" style="left:1791px;top:457px;width:8px;height:14px;background:#666;border-radius:2px"></div>
<div class="t" style="left:1504px;top:484.57px;font-size:11.5px;color:#c8c8c8;transform:scaleX(1.0435);transform-origin:0 0;">Intensity multiplier</div>
<div class="a" style="left:1608px;top:480px;width:68px;height:17.5px;background:#2b2b2b;"></div>
<div class="t" style="left:1613px;top:485.07px;font-size:11.5px;color:#e0e0e0;transform:scaleX(0.9391);transform-origin:0 0;">1.556</div>
<div class="a" style="left:1679px;top:486px;width:192px;height:4px;background:#2f2f2f;border-radius:2px"></div>
<div class="a" style="left:1821px;top:481px;width:8px;height:14px;background:#c0c0c0;border-radius:2px"></div>
<div class="a" style="left:1607px;top:504.5px;width:13px;height:13px;background:#2b2b2b;"></div>
<svg class="a" style="left:1608px;top:505.5px;" width="11" height="11" viewBox="0 0 11 11"><path d="M1.5 5.5 L4.5 9 L10 1.5" fill="none" stroke="#eee" stroke-width="1.8"/></svg>
<div class="t" style="left:1625.4px;top:506.57px;font-size:11.5px;color:#d0d0d0;">Dome Spherical</div>
<div class="a" style="left:1607px;top:523px;width:13px;height:13px;background:#2b2b2b;"></div>
<svg class="a" style="left:1608px;top:524px;" width="11" height="11" viewBox="0 0 11 11"><path d="M1.5 5.5 L4.5 9 L10 1.5" fill="none" stroke="#eee" stroke-width="1.8"/></svg>
<div class="t" style="left:1625.4px;top:525.07px;font-size:11.5px;color:#d0d0d0;">Dome Adaptive</div>
<div class="a" style="left:1455px;top:541.5px;width:425px;height:19px;background:#5d5d5d;"></div>
<svg class="a" style="left:1461px;top:547.5px;" width="11" height="7" viewBox="0 0 11 7"><path d="M0 0 H11 L5.5 7 Z" fill="#eee"/></svg>
<div class="t" style="left:1487px;top:547.57px;font-size:11.5px;color:#dcdcdc;transform:scaleX(1.0000);transform-origin:0 0;">Texture</div>
<div class="a" style="left:1455px;top:561px;width:425px;height:82px;background:#474747;"></div>
<div class="a" style="left:1607px;top:566px;width:13px;height:13px;background:#2b2b2b;"></div>
<div class="t" style="left:1625.4px;top:568.07px;font-size:11.5px;color:#d0d0d0;">Use Dome Tex</div>
<div class="a" style="left:1607px;top:585px;width:13px;height:13px;background:#2b2b2b;"></div>
<div class="t" style="left:1625.4px;top:587.07px;font-size:11.5px;color:#8a8a8a;">Multiply By The Light Color</div>
<div class="t" style="left:1550px;top:606.07px;font-size:11.5px;color:#808080;transform:scaleX(0.9506);transform-origin:0 0;">Dome Tex</div>
<div class="a" style="left:1606.7px;top:603.7px;width:68px;height:13px;background:#d4d4d4;"></div>
<div class="a" style="left:1679px;top:608px;width:165px;height:3px;background:#3a3a3a;"></div>
<div class="a" style="left:1835px;top:604px;width:8px;height:13px;background:#7a7a7a;border-radius:2px"></div>
<svg class="a" style="left:1851px;top:604px;" width="12" height="12" viewBox="0 0 12 12"><rect width="12" height="12" fill="#555"/><rect width="6" height="6" fill="#888"/><rect x="6" y="6" width="6" height="6" fill="#888"/></svg>
<div class="t" style="left:1540px;top:628.07px;font-size:11.5px;color:#808080;transform:scaleX(0.9552);transform-origin:0 0;">Dome Tex A</div>
<div class="a" style="left:1608px;top:626px;width:68px;height:15px;background:#4a4a4a;"></div>
<div class="t" style="left:1613px;top:628.07px;font-size:11.5px;color:#6a6a6a;transform:scaleX(0.9391);transform-origin:0 0;">1.000</div>
<svg class="a" style="left:1768px;top:626px;" width="12" height="12" viewBox="0 0 12 12"><rect width="12" height="12" fill="#555"/><rect width="6" height="6" fill="#888"/><rect x="6" y="6" width="6" height="6" fill="#888"/></svg>
<div class="a" style="left:1455px;top:645px;width:425px;height:19px;background:#5d5d5d;"></div>
<svg class="a" style="left:1464px;top:649px;" width="7" height="11" viewBox="0 0 7 11"><path d="M0 0 L7 5.5 L0 11 Z" fill="#eee"/></svg>
<div class="t" style="left:1487px;top:651.07px;font-size:11.5px;color:#dcdcdc;transform:scaleX(1.0000);transform-origin:0 0;">Options</div>
<div class="a" style="left:1455px;top:667.5px;width:425px;height:19px;background:#5d5d5d;"></div>
<svg class="a" style="left:1464px;top:671.5px;" width="7" height="11" viewBox="0 0 7 11"><path d="M0 0 L7 5.5 L0 11 Z" fill="#eee"/></svg>
<div class="t" style="left:1487px;top:673.57px;font-size:11.5px;color:#dcdcdc;transform:scaleX(1.0000);transform-origin:0 0;">Sampling</div>
<div class="a" style="left:1455px;top:690px;width:425px;height:19px;background:#5d5d5d;"></div>
<svg class="a" style="left:1464px;top:694px;" width="7" height="11" viewBox="0 0 7 11"><path d="M0 0 L7 5.5 L0 11 Z" fill="#eee"/></svg>
<div class="t" style="left:1487px;top:696.07px;font-size:11.5px;color:#dcdcdc;transform:scaleX(1.0000);transform-origin:0 0;">Shadows</div>
<div class="a" style="left:1455px;top:712px;width:425px;height:19px;background:#5d5d5d;"></div>
<svg class="a" style="left:1464px;top:716px;" width="7" height="11" viewBox="0 0 7 11"><path d="M0 0 L7 5.5 L0 11 Z" fill="#eee"/></svg>
<div class="t" style="left:1487px;top:718.07px;font-size:11.5px;color:#dcdcdc;transform:scaleX(1.0000);transform-origin:0 0;">Photon emission</div>
<div class="a" style="left:1455px;top:734px;width:425px;height:19px;background:#5d5d5d;"></div>
<svg class="a" style="left:1464px;top:738px;" width="7" height="11" viewBox="0 0 7 11"><path d="M0 0 L7 5.5 L0 11 Z" fill="#eee"/></svg>
<div class="t" style="left:1487px;top:740.07px;font-size:11.5px;color:#dcdcdc;transform:scaleX(1.0000);transform-origin:0 0;">UI</div>
<div class="a" style="left:1455px;top:755.5px;width:425px;height:19px;background:#5d5d5d;"></div>
<svg class="a" style="left:1464px;top:759.5px;" width="7" height="11" viewBox="0 0 7 11"><path d="M0 0 L7 5.5 L0 11 Z" fill="#eee"/></svg>
<div class="t" style="left:1487px;top:761.57px;font-size:11.5px;color:#dcdcdc;transform:scaleX(1.0000);transform-origin:0 0;">Object Display</div>
<div class="a" style="left:1883px;top:366px;width:11px;height:409px;background:#3a3a3a;"></div>
<svg class="a" style="left:1883px;top:366px;" width="11" height="8" viewBox="0 0 11 8"><path d="M0 7 L5.5 1 L11 7 Z" fill="#ccc"/></svg>
<div class="a" style="left:1884px;top:376px;width:9px;height:332px;background:#555;border-radius:4px"></div>
<svg class="a" style="left:1883px;top:766px;" width="11" height="8" viewBox="0 0 11 8"><path d="M0 1 H11 L5.5 7 Z" fill="#ccc"/></svg>
<svg class="a" style="left:1598px;top:780px;" width="150" height="3" viewBox="0 0 150 3"><g fill="#777"><rect x="0" y="0" width="1" height="1"/><rect x="3" y="1" width="1" height="1"/><rect x="6" y="0" width="1" height="1"/><rect x="9" y="1" width="1" height="1"/><rect x="12" y="0" width="1" height="1"/><rect x="15" y="1" width="1" height="1"/><rect x="18" y="0" width="1" height="1"/><rect x="21" y="1" width="1" height="1"/><rect x="24" y="0" width="1" height="1"/><rect x="27" y="1" width="1" height="1"/><rect x="30" y="0" width="1" height="1"/><rect x="33" y="1" width="1" height="1"/><rect x="36" y="0" width="1" height="1"/><rect x="39" y="1" width="1" height="1"/><rect x="42" y="0" width="1" height="1"/><rect x="45" y="1" width="1" height="1"/><rect x="48" y="0" width="1" height="1"/><rect x="51" y="1" width="1" height="1"/><rect x="54" y="0" width="1" height="1"/><rect x="57" y="1" width="1" height="1"/><rect x="60" y="0" width="1" height="1"/><rect x="63" y="1" width="1" height="1"/><rect x="66" y="0" width="1" height="1"/><rect x="69" y="1" width="1" height="1"/><rect x="72" y="0" width="1" height="1"/><rect x="75" y="1" width="1" height="1"/><rect x="78" y="0" width="1" height="1"/><rect x="81" y="1" width="1" height="1"/><rect x="84" y="0" width="1" height="1"/><rect x="87" y="1" width="1" height="1"/><rect x="90" y="0" width="1" height="1"/><rect x="93" y="1" width="1" height="1"/><rect x="96" y="0" width="1" height="1"/><rect x="99" y="1" width="1" height="1"/><rect x="102" y="0" width="1" height="1"/><rect x="105" y="1" width="1" height="1"/><rect x="108" y="0" width="1" height="1"/><rect x="111" y="1" width="1" height="1"/><rect x="114" y="0" width="1" height="1"/><rect x="117" y="1" width="1" height="1"/><rect x="120" y="0" width="1" height="1"/><rect x="123" y="1" width="1" height="1"/><rect x="126" y="0" width="1" height="1"/><rect x="129" y="1" width="1" height="1"/><rect x="132" y="0" width="1" height="1"/><rect x="135" y="1" width="1" height="1"/><rect x="138" y="0" width="1" height="1"/><rect x="141" y="1" width="1" height="1"/><rect x="144" y="0" width="1" height="1"/><rect x="147" y="1" width="1" height="1"/></g></svg>
<div class="t" style="left:1457px;top:787.77px;font-size:11.5px;color:#d8d8d8;font-weight:bold;transform:scaleX(0.9366);transform-origin:0 0;">Notes:  VRayLightDomeShape1</div>
<div class="a" style="left:1448px;top:799px;width:450px;height:93.5px;background:#2b2b2b;"></div>
<div class="a" style="left:1445.5px;top:898px;width:148.5px;height:26px;background:#5d5d5d;"></div>
<div class="a" style="left:1596px;top:898px;width:153px;height:26px;background:#5d5d5d;"></div>
<div class="a" style="left:1750.5px;top:898px;width:150px;height:26px;background:#5d5d5d;"></div>
<div class="t" style="left:1504px;top:907.07px;font-size:11.5px;color:#e0e0e0;transform:scaleX(0.9389);transform-origin:0 0;">Select</div>
<div class="t" style="left:1633px;top:907.07px;font-size:11.5px;color:#e0e0e0;transform:scaleX(1.0175);transform-origin:0 0;">Load Attributes</div>
<div class="t" style="left:1802px;top:907.07px;font-size:11.5px;color:#e0e0e0;transform:scaleX(0.9512);transform-origin:0 0;">Copy Tab</div>
<div class="a" style="left:1903px;top:146px;width:17px;height:784px;background:#3a3a3a;"></div>
<div class="a" style="left:1904px;top:150px;width:16px;height:148px;background:#404040;"></div>
<div class="a" style="left:1904px;top:300px;width:16px;height:115px;background:#444444;"></div>
<div class="a" style="left:1904px;top:417px;width:16px;height:110px;background:#404040;"></div>
<div class="a" style="left:1904px;top:529px;width:16px;height:70px;background:#404040;"></div>
<div class="t" style="left:1905px;top:160px;font-size:11.5px;color:#9a9a9a;writing-mode:vertical-rl;">Channel Box / Layer Editor</div>
<div class="t" style="left:1905px;top:318px;font-size:11.5px;color:#e0e0e0;writing-mode:vertical-rl;">Attribute Editor</div>
<div class="t" style="left:1905px;top:424px;font-size:11.5px;color:#9a9a9a;writing-mode:vertical-rl;">Modeling Toolkit</div>
<div class="t" style="left:1905px;top:536px;font-size:11.5px;color:#9a9a9a;writing-mode:vertical-rl;">Human IK</div>
<div class="a" style="left:0px;top:926px;width:1920px;height:114px;background:#444444;"></div>
<div class="a" style="left:0px;top:929px;width:1920px;height:2px;background:#3a3a3a;"></div>
<svg class="a" style="left:0px;top:928px;" width="8" height="112" viewBox="0 0 8 112"><g fill="#777"><rect x="2" y="1.0" width="1" height="1"/><rect x="5" y="3.5" width="1" height="1"/><rect x="2" y="6.0" width="1" height="1"/><rect x="5" y="8.5" width="1" height="1"/><rect x="2" y="11.0" width="1" height="1"/><rect x="5" y="13.5" width="1" height="1"/><rect x="2" y="16.0" width="1" height="1"/><rect x="5" y="18.5" width="1" height="1"/><rect x="2" y="21.0" width="1" height="1"/><rect x="5" y="23.5" width="1" height="1"/><rect x="2" y="26.0" width="1" height="1"/><rect x="5" y="28.5" width="1" height="1"/><rect x="2" y="31.0" width="1" height="1"/><rect x="5" y="33.5" width="1" height="1"/><rect x="2" y="36.0" width="1" height="1"/><rect x="5" y="38.5" width="1" height="1"/><rect x="2" y="41.0" width="1" height="1"/><rect x="5" y="43.5" width="1" height="1"/><rect x="2" y="46.0" width="1" height="1"/><rect x="5" y="48.5" width="1" height="1"/><rect x="2" y="51.0" width="1" height="1"/><rect x="5" y="53.5" width="1" height="1"/><rect x="2" y="56.0" width="1" height="1"/><rect x="5" y="58.5" width="1" height="1"/><rect x="2" y="61.0" width="1" height="1"/><rect x="5" y="63.5" width="1" height="1"/><rect x="2" y="66.0" width="1" height="1"/><rect x="5" y="68.5" width="1" height="1"/><rect x="2" y="71.0" width="1" height="1"/><rect x="5" y="73.5" width="1" height="1"/><rect x="2" y="76.0" width="1" height="1"/><rect x="5" y="78.5" width="1" height="1"/><rect x="2" y="81.0" width="1" height="1"/><rect x="5" y="83.5" width="1" height="1"/><rect x="2" y="86.0" width="1" height="1"/><rect x="5" y="88.5" width="1" height="1"/><rect x="2" y="91.0" width="1" height="1"/><rect x="5" y="93.5" width="1" height="1"/><rect x="2" y="96.0" width="1" height="1"/><rect x="5" y="98.5" width="1" height="1"/><rect x="2" y="101.0" width="1" height="1"/><rect x="5" y="103.5" width="1" height="1"/><rect x="2" y="106.0" width="1" height="1"/><rect x="5" y="108.5" width="1" height="1"/></g></svg>
<div class="a" style="left:13px;top:935px;width:1612px;height:30px;background:#2b2b2b;"></div>
<div class="a" style="left:22px;top:934px;width:48.6px;height:31px;background:#5a5a5a;"></div>
<div class="a" style="left:21px;top:948px;width:2px;height:17px;background:#b8b8b8;"></div>
<div class="t" style="left:31px;top:935.61px;font-size:10.5px;color:#9a9a9a;">0</div>
<div class="a" style="left:72px;top:948px;width:2px;height:17px;background:#b8b8b8;"></div>
<div class="t" style="left:82px;top:935.61px;font-size:10.5px;color:#9a9a9a;">1</div>
<div class="a" style="left:124px;top:948px;width:2px;height:17px;background:#b8b8b8;"></div>
<div class="t" style="left:134px;top:935.61px;font-size:10.5px;color:#9a9a9a;">2</div>
<div class="a" style="left:175px;top:948px;width:2px;height:17px;background:#b8b8b8;"></div>
<div class="t" style="left:185px;top:935.61px;font-size:10.5px;color:#9a9a9a;">3</div>
<div class="a" style="left:227px;top:948px;width:2px;height:17px;background:#b8b8b8;"></div>
<div class="t" style="left:237px;top:935.61px;font-size:10.5px;color:#9a9a9a;">4</div>
<div class="a" style="left:278px;top:948px;width:2px;height:17px;background:#b8b8b8;"></div>
<div class="t" style="left:288px;top:935.61px;font-size:10.5px;color:#9a9a9a;">5</div>
<div class="a" style="left:330px;top:948px;width:2px;height:17px;background:#b8b8b8;"></div>
<div class="t" style="left:340px;top:935.61px;font-size:10.5px;color:#9a9a9a;">6</div>
<div class="a" style="left:381px;top:948px;width:2px;height:17px;background:#b8b8b8;"></div>
<div class="t" style="left:391px;top:935.61px;font-size:10.5px;color:#9a9a9a;">7</div>
<div class="a" style="left:433px;top:948px;width:2px;height:17px;background:#b8b8b8;"></div>
<div class="t" style="left:443px;top:935.61px;font-size:10.5px;color:#9a9a9a;">8</div>
<div class="a" style="left:484px;top:948px;width:2px;height:17px;background:#b8b8b8;"></div>
<div class="t" style="left:494px;top:935.61px;font-size:10.5px;color:#9a9a9a;">9</div>
<div class="a" style="left:536px;top:948px;width:2px;height:17px;background:#b8b8b8;"></div>
<div class="t" style="left:546px;top:935.61px;font-size:10.5px;color:#9a9a9a;">10</div>
<div class="a" style="left:587px;top:948px;width:2px;height:17px;background:#b8b8b8;"></div>
<div class="t" style="left:597px;top:935.61px;font-size:10.5px;color:#9a9a9a;">11</div>
<div class="a" style="left:639px;top:948px;width:2px;height:17px;background:#b8b8b8;"></div>
<div class="t" style="left:649px;top:935.61px;font-size:10.5px;color:#9a9a9a;">12</div>
<div class="a" style="left:690px;top:948px;width:2px;height:17px;background:#b8b8b8;"></div>
<div class="t" style="left:700px;top:935.61px;font-size:10.5px;color:#9a9a9a;">13</div>
<div class="a" style="left:742px;top:948px;width:2px;height:17px;background:#b8b8b8;"></div>
<div class="t" style="left:752px;top:935.61px;font-size:10.5px;color:#9a9a9a;">14</div>
<div class="a" style="left:793px;top:948px;width:2px;height:17px;background:#b8b8b8;"></div>
<div class="t" style="left:803px;top:935.61px;font-size:10.5px;color:#9a9a9a;">15</div>
<div class="a" style="left:845px;top:948px;width:2px;height:17px;background:#b8b8b8;"></div>
<div class="t" style="left:855px;top:935.61px;font-size:10.5px;color:#9a9a9a;">16</div>
<div class="a" style="left:896px;top:948px;width:2px;height:17px;background:#b8b8b8;"></div>
<div class="t" style="left:906px;top:935.61px;font-size:10.5px;color:#9a9a9a;">17</div>
<div class="a" style="left:948px;top:948px;width:2px;height:17px;background:#b8b8b8;"></div>
<div class="t" style="left:958px;top:935.61px;font-size:10.5px;color:#9a9a9a;">18</div>
<div class="a" style="left:999px;top:948px;width:2px;height:17px;background:#b8b8b8;"></div>
<div class="t" style="left:1009px;top:935.61px;font-size:10.5px;color:#9a9a9a;">19</div>
<div class="a" style="left:1051px;top:948px;width:2px;height:17px;background:#b8b8b8;"></div>
<div class="t" style="left:1061px;top:935.61px;font-size:10.5px;color:#9a9a9a;">20</div>
<div class="a" style="left:1102px;top:948px;width:2px;height:17px;background:#b8b8b8;"></div>
<div class="t" style="left:1112px;top:935.61px;font-size:10.5px;color:#9a9a9a;">21</div>
<div class="a" style="left:1154px;top:948px;width:2px;height:17px;background:#b8b8b8;"></div>
<div class="t" style="left:1164px;top:935.61px;font-size:10.5px;color:#9a9a9a;">22</div>
<div class="a" style="left:1205px;top:948px;width:2px;height:17px;background:#b8b8b8;"></div>
<div class="t" style="left:1215px;top:935.61px;font-size:10.5px;color:#9a9a9a;">23</div>
<div class="a" style="left:1257px;top:948px;width:2px;height:17px;background:#b8b8b8;"></div>
<div class="t" style="left:1267px;top:935.61px;font-size:10.5px;color:#9a9a9a;">24</div>
<div class="a" style="left:1308px;top:948px;width:2px;height:17px;background:#b8b8b8;"></div>
<div class="t" style="left:1318px;top:935.61px;font-size:10.5px;color:#9a9a9a;">25</div>
<div class="a" style="left:1360px;top:948px;width:2px;height:17px;background:#b8b8b8;"></div>
<div class="t" style="left:1370px;top:935.61px;font-size:10.5px;color:#9a9a9a;">26</div>
<div class="a" style="left:1411px;top:948px;width:2px;height:17px;background:#b8b8b8;"></div>
<div class="t" style="left:1421px;top:935.61px;font-size:10.5px;color:#9a9a9a;">27</div>
<div class="a" style="left:1463px;top:948px;width:2px;height:17px;background:#b8b8b8;"></div>
<div class="t" style="left:1473px;top:935.61px;font-size:10.5px;color:#9a9a9a;">28</div>
<div class="a" style="left:1514px;top:948px;width:2px;height:17px;background:#b8b8b8;"></div>
<div class="t" style="left:1524px;top:935.61px;font-size:10.5px;color:#9a9a9a;">29</div>
<div class="a" style="left:1566px;top:948px;width:2px;height:17px;background:#b8b8b8;"></div>
<div class="t" style="left:1576px;top:935.61px;font-size:10.5px;color:#9a9a9a;">30</div>
<div class="t" style="left:31px;top:951.67px;font-size:11.5px;color:#f0f0f0;">0</div>
<div class="a" style="left:1632px;top:941px;width:88px;height:17.5px;background:#2b2b2b;"></div>
<div class="t" style="left:1637px;top:945.07px;font-size:11.5px;color:#e0e0e0;">0</div>
<svg class="a" style="left:1729px;top:940px;" width="17" height="18" viewBox="0 0 17 18"><rect x="0" y="1" width="2" height="16" fill="#ccc"/><path d="M2 9 L9 1 V17 Z M9 9 L16 1 V17 Z" fill="#ccc"/></svg>
<svg class="a" style="left:1754px;top:940px;" width="17" height="18" viewBox="0 0 17 18"><rect x="0" y="1" width="2.5" height="16" fill="#ccc"/><path d="M2.5 9 L13 1 V17 Z" fill="#ccc"/></svg>
<svg class="a" style="left:1776.5px;top:940px;" width="17" height="18" viewBox="0 0 17 18"><rect x="1" y="0" width="3" height="18" fill="#e07a40"/><path d="M4 9 L14 1 V17 Z" fill="#ccc"/></svg>
<svg class="a" style="left:1800.5px;top:940px;" width="17" height="18" viewBox="0 0 17 18"><path d="M0 9 L13 1 V17 Z" fill="#ccc"/></svg>
<svg class="a" style="left:1824px;top:940px;" width="17" height="18" viewBox="0 0 17 18"><path d="M0 1 L13 9 L0 17 Z" fill="#ccc"/></svg>
<svg class="a" style="left:1846px;top:940px;" width="17" height="18" viewBox="0 0 17 18"><path d="M0 1 L10 9 L0 17 Z" fill="#ccc"/><rect x="11" y="0" width="3" height="18" fill="#e07a40"/></svg>
<svg class="a" style="left:1870px;top:940px;" width="17" height="18" viewBox="0 0 17 18"><path d="M0 1 L10 9 L0 17 Z" fill="#ccc"/><rect x="10" y="1" width="2.5" height="16" fill="#ccc"/></svg>
<svg class="a" style="left:1891px;top:940px;" width="17" height="18" viewBox="0 0 17 18"><path d="M0 1 L7 9 L0 17 Z M7 1 L14 9 L7 17 Z" fill="#ccc"/><rect x="14" y="1" width="2" height="16" fill="#ccc"/></svg>
<div class="a" style="left:0px;top:968px;width:1920px;height:2px;background:#3a3a3a;"></div>
<div class="a" style="left:15px;top:976px;width:87px;height:25px;background:#2b2b2b;"></div>
<div class="a" style="left:110.6px;top:976px;width:87px;height:25px;background:#2b2b2b;"></div>
<div class="t" style="left:20px;top:983.57px;font-size:11.5px;color:#e0e0e0;">0</div>
<div class="t" style="left:116px;top:983.57px;font-size:11.5px;color:#e0e0e0;">0</div>
<div class="a" style="left:209px;top:977px;width:911px;height:23px;background:#5d5d5d;border-radius:3px"></div>
<div class="a" style="left:214px;top:981px;width:11px;height:15px;background:#909090;border-radius:3px"></div>
<div class="a" style="left:1103px;top:981px;width:15px;height:15px;background:#909090;border-radius:3px"></div>
<div class="t" style="left:232px;top:983.57px;font-size:11.5px;color:#d0d0d0;">0</div>
<div class="t" style="left:1085px;top:983.57px;font-size:11.5px;color:#d0d0d0;">30</div>
<div class="a" style="left:1132px;top:976px;width:87px;height:25px;background:#2b2b2b;"></div>
<div class="a" style="left:1229px;top:976px;width:86px;height:25px;background:#2b2b2b;"></div>
<div class="t" style="left:1136.5px;top:983.57px;font-size:11.5px;color:#e0e0e0;">30</div>
<div class="t" style="left:1233.5px;top:983.57px;font-size:11.5px;color:#e0e0e0;">30</div>
<svg class="a" style="left:1319px;top:978px;" width="4" height="20" viewBox="0 0 4 20"><path d="M2 0 L3 10.0 L2 20 L1 10.0 Z" fill="#999"/></svg>
<svg class="a" style="left:1338px;top:978px;" width="15" height="19" viewBox="0 0 15 19"><path d="M0 2 H10 V19 L5 14 L0 19 Z" fill="#e07040"/><path d="M10 0 V8 M6 4 H14" stroke="#eee" stroke-width="2"/></svg>
<svg class="a" style="left:1363px;top:978px;" width="4" height="20" viewBox="0 0 4 20"><path d="M2 0 L3 10.0 L2 20 L1 10.0 Z" fill="#999"/></svg>
<svg class="a" style="left:1381px;top:985px;" width="9" height="6" viewBox="0 0 9 6"><path d="M0 0 H9 L4.5 6 Z" fill="none" stroke="#999"/></svg>
<div class="a" style="left:1397.5px;top:978px;width:99px;height:22px;background:#474747;border:1px solid #3c3c3c"></div>
<div class="t" style="left:1403px;top:984.07px;font-size:11.5px;color:#c8c8c8;transform:scaleX(0.9685);transform-origin:0 0;">No Character Set</div>
<svg class="a" style="left:1511px;top:985px;" width="9" height="6" viewBox="0 0 9 6"><path d="M0 0 H9 L4.5 6 Z" fill="none" stroke="#999"/></svg>
<div class="a" style="left:1525.6px;top:978px;width:100px;height:22px;background:#474747;border:1px solid #3c3c3c"></div>
<div class="t" style="left:1532px;top:984.07px;font-size:11.5px;color:#c8c8c8;transform:scaleX(0.9550);transform-origin:0 0;">No Anim Layer</div>
<svg class="a" style="left:1636px;top:978px;" width="4" height="20" viewBox="0 0 4 20"><path d="M2 0 L3 10.0 L2 20 L1 10.0 Z" fill="#999"/></svg>
<div class="a" style="left:1652px;top:978px;width:94px;height:20px;background:#5a5a5a;border-radius:2px"></div>
<div class="a" style="left:1727px;top:978px;width:19px;height:20px;background:#535353;"></div>
<svg class="a" style="left:1731px;top:985px;" width="11" height="6" viewBox="0 0 11 6"><path d="M0 0 H11 L5.5 6 Z" fill="#ddd"/></svg>
<div class="t" style="left:1655px;top:984.07px;font-size:11.5px;color:#c8c8c8;transform:scaleX(0.9905);transform-origin:0 0;">24 fps</div>
<svg class="a" style="left:1760px;top:979px;" width="17" height="16" viewBox="0 0 17 16"><path d="M3 6 A5 4 0 0 1 8 3 H14 M14 10 A5 4 0 0 1 9 13 H3" fill="none" stroke="#ccc" stroke-width="2.2"/><path d="M12 0 L16 3 L12 6 Z M5 10 L1 13 L5 16 Z" fill="#ccc"/></svg>
<svg class="a" style="left:1789px;top:979px;" width="18" height="18" viewBox="0 0 18 18"><rect x="1" y="6" width="16" height="11" fill="none" stroke="#e07840" stroke-width="1.8"/><path d="M3 9 H15 M3 14 H15" stroke="#e07840"/><rect x="5" y="9" width="8" height="5" fill="#ddd"/><path d="M11 0 L17 4 L11 7 Z" fill="#ddd"/></svg>
<svg class="a" style="left:1818px;top:978px;" width="4" height="20" viewBox="0 0 4 20"><path d="M2 0 L3 10.0 L2 20 L1 10.0 Z" fill="#999"/></svg>
<svg class="a" style="left:1833px;top:979px;" width="18" height="17" viewBox="0 0 18 17"><path d="M0 5 H4 L10 0 V17 L4 12 H0 Z" fill="#ccc"/><path d="M12 4 A5 5 0 0 1 12 13 M14 1 A8 8 0 0 1 14 16" fill="none" stroke="#ccc" stroke-width="1.3"/></svg>
<svg class="a" style="left:1862px;top:978px;" width="17" height="18" viewBox="0 0 17 18"><path d="M3 4 A7 7 0 1 1 2 13" fill="none" stroke="#ccc" stroke-width="1.5"/><path d="M0 2 L5 2 L3 7 Z" fill="#ccc"/><path d="M8.5 5 V12" stroke="#e07840" stroke-width="2"/><path d="M5 9 H12" stroke="#ccc"/></svg>
<svg class="a" style="left:1890px;top:977px;" width="19" height="20" viewBox="0 0 19 20"><circle cx="5" cy="5" r="3.5" fill="none" stroke="#ccc" stroke-width="1.5"/><path d="M12 4 A2 2 0 1 1 12.1 4 M11 7 L8 13 L4 16 M11 7 L15 11 L18 10 M9 12 L13 15 L12 19" fill="none" stroke="#e07840" stroke-width="2.2"/></svg>
<div class="a" style="left:0px;top:1003px;width:1920px;height:3px;background:#3a3a3a;"></div>
<div class="a" style="left:0px;top:1006px;width:1920px;height:34px;background:#444444;"></div>
<svg class="a" style="left:978px;top:1008px;" width="10" height="30" viewBox="0 0 10 30"><g fill="#777"><rect x="2" y="1.0" width="1" height="1"/><rect x="5" y="3.5" width="1" height="1"/><rect x="2" y="6.0" width="1" height="1"/><rect x="5" y="8.5" width="1" height="1"/><rect x="2" y="11.0" width="1" height="1"/><rect x="5" y="13.5" width="1" height="1"/><rect x="2" y="16.0" width="1" height="1"/><rect x="5" y="18.5" width="1" height="1"/><rect x="2" y="21.0" width="1" height="1"/><rect x="5" y="23.5" width="1" height="1"/><rect x="2" y="26.0" width="1" height="1"/><rect x="5" y="28.5" width="1" height="1"/></g></svg>
<div class="t" style="left:1003px;top:1019.07px;font-size:11.5px;color:#e0e0e0;transform:scaleX(0.8460);transform-origin:0 0;">MEL</div>
<div class="a" style="left:1038px;top:1013px;width:341px;height:22px;background:#2b2b2b;"></div>
<div class="a" style="left:1387.5px;top:1012px;width:499px;height:24px;background:#e6db8e;"></div>
<div class="t" style="left:1393px;top:1020.07px;font-size:11.5px;color:#3a3520;transform:scaleX(0.9947);transform-origin:0 0;">// Warning: File texture &quot;Std_Eyelash_Normal&quot; used as normal map has a color correction enable</div>
<svg class="a" style="left:1892px;top:1014px;" width="19" height="19" viewBox="0 0 19 19"><rect x="0.5" y="0.5" width="18" height="18" fill="#cfcfcf" stroke="#999"/><rect x="0.5" y="0.5" width="18" height="4" fill="#888"/><text x="9.5" y="15" font-size="10" text-anchor="middle" fill="#444" font-family="Liberation Sans">{;}</text></svg>
<div class="a" style="left:0px;top:1040px;width:1920px;height:40px;background:linear-gradient(90deg,#1f1f22 0%,#222329 35%,#232329 60%,#222226 85%,#2a2625 100%);"></div>
<svg class="a" style="left:15px;top:1052px;" width="17" height="17" viewBox="0 0 17 17"><g fill="#fff"><rect x="0" y="0" width="8" height="8"/><rect x="9" y="0" width="8" height="8"/><rect x="0" y="9" width="8" height="8"/><rect x="9" y="9" width="8" height="8"/></g></svg>
<div class="a" style="left:48px;top:1040px;width:287px;height:40px;background:#f3f3f3;"></div>
<svg class="a" style="left:60px;top:1050px;" width="18" height="19" viewBox="0 0 18 19"><circle cx="11" cy="7" r="6" fill="none" stroke="#222" stroke-width="1.5"/><path d="M7 11 L1 18" stroke="#222" stroke-width="1.8"/></svg>
<div class="t" style="left:88px;top:1054.80px;font-size:15px;color:#222;transform:scaleX(0.9762);transform-origin:0 0;">Taper ici pour rechercher</div>
<svg class="a" style="left:263px;top:1042px;" width="65" height="38" viewBox="0 0 65 38"><circle cx="18" cy="24" r="13" fill="#a8d830"/><path d="M8 18 C14 22 18 30 16 37" stroke="#fff" fill="none" stroke-width="1.5"/><ellipse cx="36" cy="14" rx="11" ry="9" fill="none" stroke="#58b8c8" stroke-width="3" transform="rotate(30 36 14)"/><path d="M44 22 L60 34" stroke="#7040a0" stroke-width="4"/><path d="M30 8 L42 20 M34 6 L44 16" stroke="#c8a0d0" stroke-width="0.8"/></svg>
<svg class="a" style="left:352px;top:1052px;" width="17" height="17" viewBox="0 0 17 17"><rect x="2" y="3" width="13" height="11" fill="none" stroke="#fff" stroke-width="1.5"/><path d="M0 1 H17 M0 16 H17" stroke="#fff" stroke-width="1.5"/></svg>
<div class="a" style="left:682px;top:1040px;width:46px;height:40px;background:#3b3b3e;"></div>
<svg class="a" style="left:400px;top:1048px;" width="25" height="25" viewBox="0 0 25 25"><rect x="1" y="5" width="21" height="15" fill="#f0c040"/><rect x="1" y="3" width="9" height="4" fill="#e0a820"/><rect x="5" y="12" width="13" height="6" fill="#3aa0e0"/></svg>
<svg class="a" style="left:448px;top:1048px;" width="25" height="25" viewBox="0 0 25 25"><circle cx="12" cy="12" r="11" fill="#e04030"/><path d="M12 12 L22 7 A11 11 0 0 1 12 23 Z" fill="#f8c020"/><path d="M12 12 L12 23 A11 11 0 0 1 2 7 Z" fill="#30a040"/><circle cx="12" cy="12" r="4.5" fill="#4080f0" stroke="#fff" stroke-width="1.5"/><circle cx="19" cy="19" r="6" fill="#1a8ad0"/><text x="19" y="22" font-size="8" text-anchor="middle" fill="#fff" font-family="Liberation Sans">h</text></svg>
<svg class="a" style="left:497px;top:1048px;" width="25" height="25" viewBox="0 0 25 25"><ellipse cx="12" cy="12" rx="10" ry="11" fill="#e01020"/><ellipse cx="12" cy="12" rx="5" ry="8" fill="#1f1f1f"/></svg>
<svg class="a" style="left:545px;top:1048px;" width="25" height="25" viewBox="0 0 25 25"><circle cx="12" cy="12" r="10" fill="none" stroke="#2a9ae0" stroke-width="2.5"/><text x="12" y="17" font-size="14" text-anchor="middle" fill="#2a9ae0" font-family="Liberation Sans" font-style="italic">C</text></svg>
<svg class="a" style="left:595px;top:1048px;" width="25" height="25" viewBox="0 0 25 25"><rect x="0" y="1" width="22" height="21" fill="#0a2a50"/><text x="11" y="16" font-size="11" font-weight="bold" text-anchor="middle" fill="#30a8ff" font-family="Liberation Sans">Ps</text></svg>
<svg class="a" style="left:645px;top:1048px;" width="25" height="25" viewBox="0 0 25 25"><path d="M0 2 H20 V18 L12 22 H0 Z" fill="#1a90c8"/><text x="10" y="13" font-size="11" font-weight="bold" text-anchor="middle" fill="#fff" font-family="Liberation Sans">M</text><rect x="3" y="16" width="12" height="3" fill="#0a5a80"/></svg>
<svg class="a" style="left:693px;top:1048px;" width="25" height="25" viewBox="0 0 25 25"><rect x="0" y="0" width="24" height="24" fill="#e8f4f4"/><path d="M3 21 L5 3 L9 3 L12 12 L15 3 L19 3 L21 21 L17 21 L16 10 L13 18 L11 18 L8 10 L7 21 Z" fill="#20a8b0"/></svg>
<svg class="a" style="left:745px;top:1048px;" width="25" height="25" viewBox="0 0 25 25"><rect x="0" y="0" width="18" height="23" fill="#5a7090"/><rect x="2" y="2" width="14" height="5" fill="#a8d0f0"/><g fill="#e0e8f0"><rect x="2" y="9" width="4" height="3"/><rect x="7" y="9" width="4" height="3"/><rect x="12" y="9" width="4" height="3"/><rect x="2" y="14" width="4" height="3"/><rect x="7" y="14" width="4" height="3"/><rect x="2" y="19" width="4" height="3"/><rect x="7" y="19" width="4" height="3"/></g><rect x="12" y="14" width="4" height="8" fill="#3a5070"/></svg>
<svg class="a" style="left:790px;top:1048px;" width="25" height="25" viewBox="0 0 25 25"><rect x="6" y="1" width="19" height="22" fill="#2a70d0"/><rect x="6" y="8" width="19" height="8" fill="#4090f0"/><rect x="0" y="5" width="14" height="14" fill="#1a5ab8"/><text x="7" y="16" font-size="10" font-weight="bold" text-anchor="middle" fill="#fff" font-family="Liberation Sans">W</text></svg>
<svg class="a" style="left:840px;top:1048px;" width="25" height="25" viewBox="0 0 25 25"><rect x="2" y="2" width="20" height="15" fill="#d8e0e8" stroke="#888"/><path d="M5 13 L9 8 L13 11 L18 5" stroke="#3a7ad0" fill="none"/><rect x="0" y="17" width="24" height="5" fill="#bbb"/></svg>
<div class="a" style="left:392px;top:1077px;width:38px;height:3px;background:#76b9ed;"></div>
<div class="a" style="left:440px;top:1077px;width:40px;height:3px;background:#76b9ed;"></div>
<div class="a" style="left:488px;top:1077px;width:40px;height:3px;background:#76b9ed;"></div>
<div class="a" style="left:682px;top:1077px;width:46px;height:3px;background:#76b9ed;"></div>
<div class="a" style="left:735px;top:1077px;width:38px;height:3px;background:#76b9ed;"></div>
<div class="a" style="left:783px;top:1077px;width:40px;height:3px;background:#76b9ed;"></div>
<div class="a" style="left:832px;top:1077px;width:40px;height:3px;background:#76b9ed;"></div>
<svg class="a" style="left:1520px;top:1049px;" width="22" height="22" viewBox="0 0 22 22"><defs><radialGradient id="sun" cx="0.4" cy="0.4" r="0.6"><stop offset="0" stop-color="#ffb030"/><stop offset="1" stop-color="#f06010"/></radialGradient></defs><circle cx="11" cy="11" r="10.5" fill="url(#sun)"/></svg>
<div class="t" style="left:1551.7px;top:1054.53px;font-size:14.5px;color:#ffffff;transform:scaleX(0.8737);transform-origin:0 0;">24°C</div>
<div class="t" style="left:1589px;top:1054.53px;font-size:14.5px;color:#ffffff;transform:scaleX(0.9187);transform-origin:0 0;">Ensoleillé</div>
<svg class="a" style="left:1670px;top:1054px;" width="14" height="9" viewBox="0 0 14 9"><path d="M1 8 L7 2 L13 8" fill="none" stroke="#fff" stroke-width="1.5"/></svg>
<svg class="a" style="left:1694px;top:1051px;" width="15" height="17" viewBox="0 0 15 17"><rect x="1" y="3" width="9" height="11" rx="1.5" fill="none" stroke="#fff" stroke-width="1.3"/><path d="M10 6 L14 4 V13 L10 11" fill="none" stroke="#fff" stroke-width="1.3"/><path d="M3 1 H8" stroke="#fff"/></svg>
<svg class="a" style="left:1720px;top:1052px;" width="15" height="15" viewBox="0 0 15 15"><path d="M1 14 A13 13 0 0 1 14 1 M4 14 A10 10 0 0 1 14 4 M7 14 A7 7 0 0 1 14 7" fill="none" stroke="#fff" stroke-width="1.2"/><circle cx="12" cy="12" r="2" fill="#fff"/></svg>
<svg class="a" style="left:1740px;top:1051px;" width="18" height="17" viewBox="0 0 18 17"><path d="M1 6 H4 L9 2 V15 L4 11 H1 Z" fill="none" stroke="#fff" stroke-width="1.2"/><path d="M11 5 A4 4 0 0 1 11 12 M13 3 A7 7 0 0 1 13 14" fill="none" stroke="#fff" stroke-width="1.2"/></svg>
<div class="t" style="left:1767px;top:1054.95px;font-size:14px;color:#ffffff;transform:scaleX(0.7857);transform-origin:0 0;">FRA</div>
<div class="t" style="left:1818px;top:1044.80px;font-size:13px;color:#ffffff;transform:scaleX(1.1061);transform-origin:0 0;">18:32</div>
<div class="t" style="left:1803px;top:1062.80px;font-size:13px;color:#ffffff;transform:scaleX(0.8910);transform-origin:0 0;">27/05/2023</div>
<svg class="a" style="left:1878px;top:1049px;" width="26" height="24" viewBox="0 0 26 24"><path d="M2 2 H20 V15 H8 L4 19 V15 H2 Z" fill="none" stroke="#fff" stroke-width="1.3"/><path d="M5 6 H17 M5 9 H17 M5 12 H13" stroke="#fff"/><circle cx="19" cy="17" r="6" fill="#1f1f1f" stroke="#fff"/><text x="19" y="21" font-size="9" text-anchor="middle" fill="#fff" font-family="Liberation Sans">1</text></svg>
</body></html>
